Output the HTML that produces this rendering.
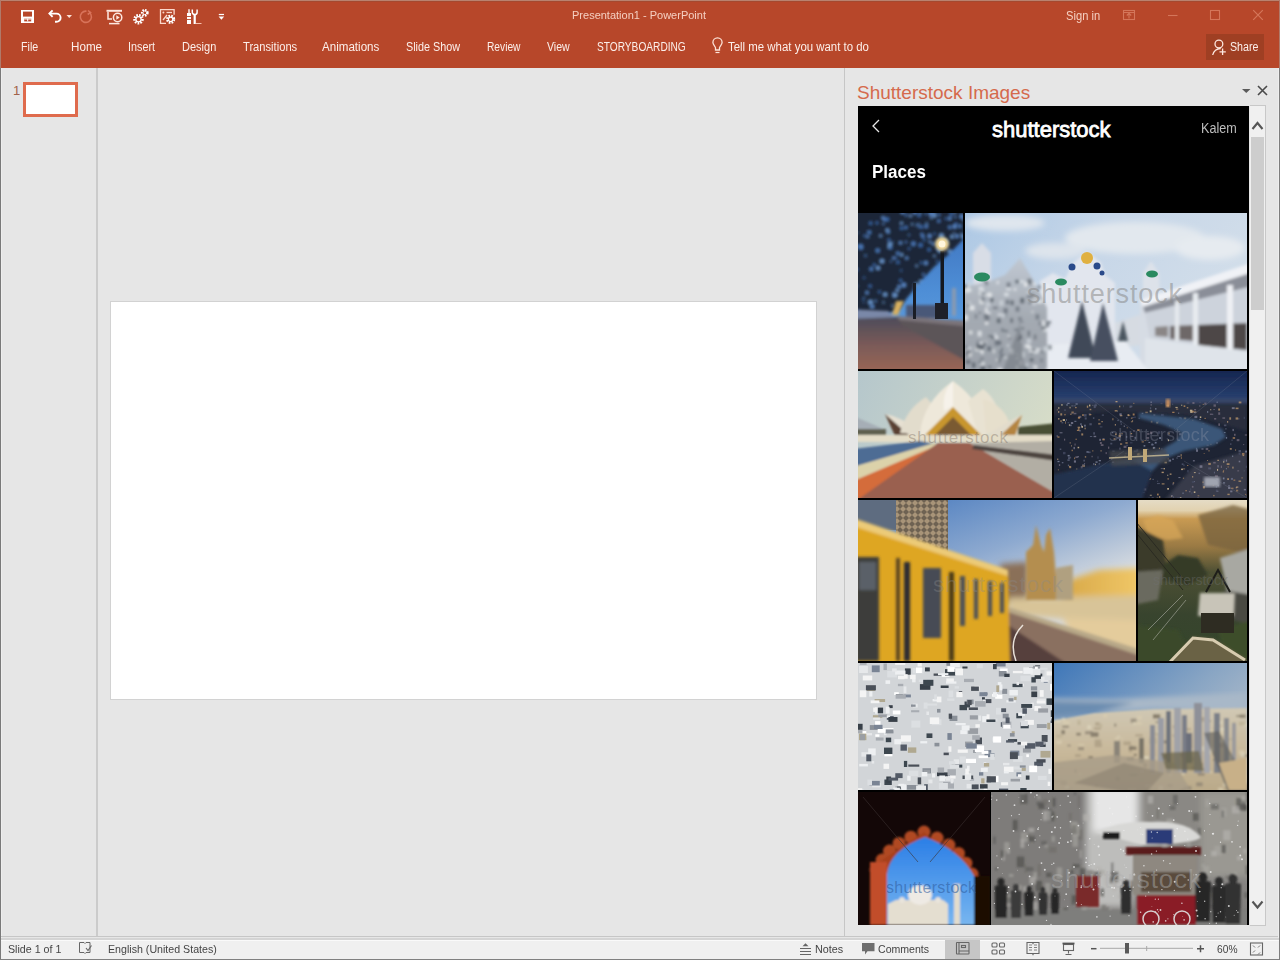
<!DOCTYPE html>
<html><head><meta charset="utf-8">
<style>
*{margin:0;padding:0;box-sizing:border-box}
html,body{width:1280px;height:960px;overflow:hidden;background:#e6e6e6;font-family:"Liberation Sans",sans-serif}
.a{position:absolute}
.t{position:absolute;white-space:nowrap;line-height:1;transform-origin:0 0}
.tab{color:#fcefea;font-size:12px;top:41px}
.st{font-size:11px;color:#444;top:944px}
.ph{position:absolute;overflow:hidden}
svg{position:absolute;overflow:visible}
</style></head><body>
<!-- ===== title + ribbon tabs ===== -->
<div class="a" style="left:0;top:0;width:1280px;height:68px;background:#b7472a"></div>
<div class="a" style="left:0;top:0;width:1280px;height:1px;background:#b9826f"></div>
<div class="a" style="left:0;top:1px;width:1280px;height:1px;background:#a5492f"></div>

<!-- QAT icons -->
<svg style="left:0;top:0" width="240" height="30" viewBox="0 0 240 30">
 <rect x="21" y="10" width="13" height="13" fill="#fff"/>
 <rect x="23" y="11.6" width="9" height="5" fill="#b7472a"/>
 <rect x="24.2" y="18.6" width="7" height="2.8" fill="#b7472a"/>
 <rect x="24.2" y="18.6" width="7" height="0.9" fill="#fff"/>
 <rect x="27.2" y="18.6" width="1" height="2.8" fill="#fff"/>
 <g fill="none" stroke="#fff" stroke-width="1.6">
  <!-- undo -->
  <path d="M49.5 13.6h7a4.1 4.1 0 0 1 0 8.2h-1.5" stroke-width="1.9"/>
  <path d="M52.6 10.4l-3.2 3.2 3.2 3.2" stroke-width="1.9"/>
 </g>
 <path d="M66.5 15h5.5l-2.75 3z" fill="#fbe0d6"/>
 <!-- redo faded -->
 <g fill="none" stroke="#d8735a" stroke-width="1.6">
  <path d="M89.5 12.5a5.6 5.6 0 1 1 -3 -1.3"/>
  <path d="M88 10.5l2.5 2-2.8 2" />
 </g>
 <!-- present -->
 <g fill="none" stroke="#fde8e0" stroke-width="1.5">
  <path d="M106.5 10.8h15.5" stroke-width="2"/>
  <path d="M108 12v7h4"/>
  <circle cx="117.6" cy="17.5" r="4.2"/>
  <path d="M109 23.6h10.5"/>
 </g>
 <path d="M116.3 15.3v4.4l3.4-2.2z" fill="#fde8e0"/>
 <!-- gears -->
 <g fill="none" stroke="#fff" stroke-dasharray="1.6 1.1">
  <circle cx="138.5" cy="19.2" r="4" stroke-width="2.6"/>
  <circle cx="144.8" cy="12.8" r="2.9" stroke-width="2"/>
 </g>
 <circle cx="138.5" cy="19.2" r="2.6" fill="none" stroke="#fff" stroke-width="1.3"/>
 <circle cx="144.8" cy="12.8" r="1.9" fill="none" stroke="#fff" stroke-width="1"/>
 <!-- image gear -->
 <g fill="none" stroke="#fbd9cd" stroke-width="1.3">
  <path d="M166 23.3h-5.5v-13.6h13.6v5"/>
  <path d="M166.5 12.5h5.5"/>
  <path d="M163 20l4-5"/>
 </g>
 <circle cx="163.4" cy="12.4" r="1" fill="#fbd9cd"/>
 <g fill="none" stroke="#fff" stroke-dasharray="1.6 1.1">
  <circle cx="170.6" cy="19.3" r="3.4" stroke-width="2.4"/>
 </g>
 <circle cx="170.6" cy="19.3" r="2.2" fill="none" stroke="#fff" stroke-width="1.2"/>
 <!-- tools -->
 <g fill="#fff">
  <rect x="187" y="13" width="4" height="11"/>
  <rect x="188.3" y="9.2" width="1.4" height="4"/>
  <rect x="193.6" y="14" width="2.2" height="10"/>
 </g>
 <path d="M187 16.5h4M187 19.5h4" stroke="#b7472a" stroke-width="0.9"/>
 <path d="M192.3 9.5v2.7a2.4 2.4 0 0 0 4.8 0v-2.7" fill="none" stroke="#fff" stroke-width="1.5"/>
 <path d="M196 23.5h5.5" stroke="#f8c0ae" stroke-width="1"/>
 <!-- customize -->
 <path d="M218.8 14.5h5.2" stroke="#fff" stroke-width="1.2"/>
 <path d="M218.6 16.4h5.6l-2.8 3.4z" fill="#fff"/>
</svg>

<div class="t" style="left:572px;top:10px;font-size:11.5px;color:#f5cfc1;transform:scaleX(0.957)">Presentation1 - PowerPoint</div>
<div class="t" style="left:1066px;top:10px;font-size:12px;color:#f5cfc1;transform:scaleX(0.93)">Sign in</div>

<!-- window controls -->
<svg style="left:1100px;top:0" width="180" height="30" viewBox="1100 0 180 30">
 <g fill="none" stroke="#d4765a" stroke-width="1.1">
  <rect x="1123.5" y="10.5" width="11" height="9"/>
  <path d="M1123.5 12.5h11"/>
  <path d="M1129 18.5v-5M1126.8 15.5l2.2-2.2 2.2 2.2"/>
  <path d="M1168 15.5h9.5"/>
  <rect x="1210.5" y="10.5" width="9" height="9"/>
  <path d="M1253.2 10.2l9.6 9.6M1262.8 10.2l-9.6 9.6" stroke-width="1.2"/>
 </g>
</svg>

<div class="t tab" style="left:21px;transform:scaleX(0.89)">File</div>
<div class="t tab" style="left:71px;transform:scaleX(0.97)">Home</div>
<div class="t tab" style="left:128px;transform:scaleX(0.9)">Insert</div>
<div class="t tab" style="left:182px;transform:scaleX(0.917)">Design</div>
<div class="t tab" style="left:243px;transform:scaleX(0.93)">Transitions</div>
<div class="t tab" style="left:322px;transform:scaleX(0.966)">Animations</div>
<div class="t tab" style="left:406px;transform:scaleX(0.9)">Slide Show</div>
<div class="t tab" style="left:487px;transform:scaleX(0.85)">Review</div>
<div class="t tab" style="left:547px;transform:scaleX(0.88)">View</div>
<div class="t tab" style="left:597px;transform:scaleX(0.846)">STORYBOARDING</div>
<div class="t tab" style="left:728px;transform:scaleX(0.952)">Tell me what you want to do</div>
<svg style="left:700px;top:30px" width="30" height="30" viewBox="700 30 30 30">
 <path d="M715.5 50v-2.2c0-1.3-2.6-3.2-2.6-5.3a4.6 4.6 0 0 1 9.2 0c0 2.1-2.6 4-2.6 5.3v2.2z" fill="none" stroke="#fde3d8" stroke-width="1.3"/>
 <path d="M715.5 52.5h4" stroke="#fde3d8" stroke-width="1.2"/>
</svg>

<div class="a" style="left:1206px;top:34px;width:58px;height:26px;background:#9f3f23"></div>
<svg style="left:1200px;top:30px" width="70" height="34" viewBox="1200 30 70 34">
 <g fill="none" stroke="#fde8e0" stroke-width="1.3">
  <circle cx="1218.9" cy="44" r="3.9"/>
  <path d="M1212.7 55a8 8 0 0 1 8-6.5"/>
  <path d="M1219.5 51.8h6.3M1222.6 48.5v6.4"/>
 </g>
</svg>
<div class="t tab" style="left:1230px;transform:scaleX(0.89)">Share</div>

<!-- ===== left border ===== -->
<div class="a" style="left:0;top:0;width:1px;height:960px;background:#7a7a7a"></div>
<div class="a" style="left:0;top:0;width:1px;height:68px;background:#b07a6a"></div>
<div class="a" style="left:1px;top:68px;width:1px;height:870px;background:#eeeeee"></div>

<!-- ===== thumbnail pane ===== -->
<div class="a" style="left:96px;top:68px;width:2px;height:869px;background:#cbcbcb"></div>
<div class="t" style="left:13px;top:84px;font-size:13px;color:#a0624a">1</div>
<div class="a" style="left:23px;top:82px;width:55px;height:35px;border:3px solid #df6b4d;background:#fff"></div>

<!-- ===== slide ===== -->
<div class="a" style="left:110px;top:301px;width:707px;height:399px;background:#fff;border:1px solid #d2d2d2"></div>

<!-- ===== task pane ===== -->
<div class="a" style="left:844px;top:68px;width:1px;height:869px;background:#c6c6c6"></div>
<div class="t" style="left:857px;top:83px;font-size:19px;color:#d56a4c">Shutterstock Images</div>
<div class="a" id="web" style="left:858px;top:106px;width:391px;height:819px;background:#000;overflow:hidden"></div>
<div class="t" style="left:872px;top:163px;font-size:18px;font-weight:bold;color:#fff;transform:scaleX(0.945)">Places</div>
<div class="t" style="left:1201px;top:121px;font-size:14px;color:#bdbdbd;transform:scaleX(0.9)">Kalem</div>
<div class="t" style="left:992px;top:119px;font-size:22px;font-weight:normal;color:#fff;-webkit-text-stroke:0.8px #fff;transform:scaleX(1.0);letter-spacing:0px">shutterstock</div>
<svg style="left:850px;top:80px" width="430" height="60" viewBox="850 80 430 60">
 <path d="M1242 89h8.5l-4.25 4z" fill="#5a5a5a"/>
 <path d="M1258 86l9 9M1267 86l-9 9" stroke="#4a4a4a" stroke-width="1.6"/>
 <path d="M879 120l-6 6 6 6" fill="none" stroke="#e8e8e8" stroke-width="1.3"/>
</svg>


<!-- photos -->
<!-- P1 london embankment -->
<svg class="ph" style="left:858px;top:213px" width="105" height="156" viewBox="0 0 105 156">
 <defs>
  <linearGradient id="p1sky" x1="0" y1="0" x2="0" y2="1"><stop offset="0" stop-color="#3a6cb8"/><stop offset="0.5" stop-color="#4e8ed6"/><stop offset="1" stop-color="#6aaae4"/></linearGradient>
  <linearGradient id="p1pave" x1="0" y1="0" x2="0" y2="1"><stop offset="0" stop-color="#4c4c5a"/><stop offset="0.45" stop-color="#7a5a58"/><stop offset="1" stop-color="#a26a56"/></linearGradient>
  <filter id="bl1" x="-20%" y="-20%" width="140%" height="140%"><feGaussianBlur stdDeviation="1.5"/></filter>
  <filter id="bl1b" x="-20%" y="-20%" width="140%" height="140%"><feGaussianBlur stdDeviation="2.5"/></filter>
  <pattern id="p1tex" width="7" height="6" patternUnits="userSpaceOnUse"><rect width="7" height="6" fill="#222a3c"/><circle cx="2" cy="2" r="1.3" fill="#4a6a9a"/><circle cx="5.5" cy="4.5" r="0.9" fill="#3a5078"/></pattern>
 </defs>
 <rect x="-10" y="-10" width="125" height="176" fill="url(#p1sky)"/>
 <g filter="url(#bl1)">
  <path d="M-10 -10H115V16L91 41 76 54 63 68 49 85 41 97 25 102H-10Z" fill="#1e2638"/>
<circle cx="67.7" cy="0.7" r="1.1" fill="#4a78b8"/>
<circle cx="7.5" cy="42.7" r="1.1" fill="#4a78b8"/>
<circle cx="21.5" cy="78.9" r="1.3" fill="#3a68a8"/>
<circle cx="6.7" cy="22.7" r="1.2" fill="#3a68a8"/>
<circle cx="68.1" cy="13.1" r="1.8" fill="#3a68a8"/>
<circle cx="91.9" cy="14.2" r="1.8" fill="#4a78b8"/>
<circle cx="35.1" cy="29.1" r="0.8" fill="#3a68a8"/>
<circle cx="19.7" cy="37.6" r="2.1" fill="#4a78b8"/>
<circle cx="63.3" cy="49.8" r="1.3" fill="#3a68a8"/>
<circle cx="25.0" cy="4.8" r="1.6" fill="#5a88c8"/>
<circle cx="-1.2" cy="73.0" r="0.9" fill="#4a78b8"/>
<circle cx="91.7" cy="5.5" r="1.7" fill="#5a88c8"/>
<circle cx="56.9" cy="-0.4" r="1.9" fill="#5a88c8"/>
<circle cx="71.6" cy="22.9" r="2.0" fill="#5a88c8"/>
<circle cx="61.1" cy="2.2" r="1.7" fill="#3a68a8"/>
<circle cx="106.6" cy="5.8" r="1.2" fill="#3a68a8"/>
<circle cx="12.6" cy="10.2" r="1.6" fill="#3a68a8"/>
<circle cx="2.8" cy="33.4" r="2.2" fill="#5a88c8"/>
<circle cx="44.6" cy="-1.0" r="2.0" fill="#5a88c8"/>
<circle cx="61.5" cy="13.7" r="1.2" fill="#4a78b8"/>
<circle cx="96.0" cy="20.3" r="0.9" fill="#6a98d0"/>
<circle cx="98.9" cy="23.1" r="1.9" fill="#5a88c8"/>
<circle cx="27.1" cy="81.5" r="2.0" fill="#6a98d0"/>
<circle cx="71.1" cy="36.6" r="1.7" fill="#3a68a8"/>
<circle cx="39.3" cy="77.3" r="1.6" fill="#6a98d0"/>
<circle cx="57.7" cy="-2.0" r="1.4" fill="#3a68a8"/>
<circle cx="48.7" cy="44.9" r="1.5" fill="#5a88c8"/>
<circle cx="39.9" cy="40.4" r="1.8" fill="#4a78b8"/>
<circle cx="98.0" cy="10.9" r="1.5" fill="#3a68a8"/>
<circle cx="79.1" cy="48.3" r="1.1" fill="#3a68a8"/>
<circle cx="66.3" cy="27.1" r="1.2" fill="#3a68a8"/>
<circle cx="34.6" cy="92.7" r="1.0" fill="#6a98d0"/>
<circle cx="81.4" cy="38.3" r="1.3" fill="#6a98d0"/>
<circle cx="63.8" cy="21.4" r="1.4" fill="#4a78b8"/>
<circle cx="62.5" cy="68.3" r="1.4" fill="#6a98d0"/>
<circle cx="24.0" cy="48.2" r="2.1" fill="#6a98d0"/>
<circle cx="41.2" cy="73.8" r="1.8" fill="#5a88c8"/>
<circle cx="83.3" cy="34.8" r="1.3" fill="#3a68a8"/>
<circle cx="48.1" cy="14.2" r="1.5" fill="#3a68a8"/>
<circle cx="62.6" cy="32.2" r="2.1" fill="#3a68a8"/>
<circle cx="94.1" cy="23.8" r="1.7" fill="#6a98d0"/>
<circle cx="51.1" cy="35.6" r="1.2" fill="#3a68a8"/>
<circle cx="58.6" cy="52.8" r="1.1" fill="#6a98d0"/>
<circle cx="25.4" cy="10.8" r="1.0" fill="#5a88c8"/>
<circle cx="88.8" cy="29.4" r="1.2" fill="#5a88c8"/>
<circle cx="58.3" cy="71.9" r="2.0" fill="#6a98d0"/>
<circle cx="25.5" cy="89.3" r="0.9" fill="#6a98d0"/>
<circle cx="6.1" cy="64.7" r="1.0" fill="#3a68a8"/>
<circle cx="26.8" cy="6.6" r="1.6" fill="#5a88c8"/>
<circle cx="88.1" cy="5.6" r="1.2" fill="#3a68a8"/>
<circle cx="80.9" cy="1.9" r="1.2" fill="#4a78b8"/>
<circle cx="45.8" cy="72.0" r="2.2" fill="#5a88c8"/>
<circle cx="75.4" cy="30.9" r="1.4" fill="#5a88c8"/>
<circle cx="87.4" cy="28.0" r="1.6" fill="#6a98d0"/>
<circle cx="104.9" cy="23.3" r="2.0" fill="#6a98d0"/>
<circle cx="42.7" cy="67.4" r="1.5" fill="#3a68a8"/>
<circle cx="91.7" cy="38.3" r="1.8" fill="#6a98d0"/>
<circle cx="93.1" cy="1.8" r="1.7" fill="#3a68a8"/>
<circle cx="39.9" cy="49.2" r="1.6" fill="#3a68a8"/>
<circle cx="37.9" cy="81.8" r="1.6" fill="#6a98d0"/>
<circle cx="68.8" cy="10.4" r="0.9" fill="#6a98d0"/>
<circle cx="103.8" cy="3.4" r="2.2" fill="#5a88c8"/>
<circle cx="14.1" cy="93.5" r="2.0" fill="#5a88c8"/>
<circle cx="62.2" cy="-0.3" r="1.0" fill="#6a98d0"/>
<circle cx="76.6" cy="20.8" r="1.1" fill="#3a68a8"/>
<circle cx="32.1" cy="31.1" r="2.1" fill="#6a98d0"/>
<circle cx="5.3" cy="86.2" r="0.9" fill="#3a68a8"/>
<circle cx="31.7" cy="34.0" r="2.0" fill="#6a98d0"/>
<circle cx="47.4" cy="14.7" r="1.3" fill="#4a78b8"/>
<circle cx="55.4" cy="30.7" r="2.2" fill="#4a78b8"/>
<circle cx="5.9" cy="89.3" r="0.8" fill="#4a78b8"/>
<circle cx="43.5" cy="10.2" r="1.3" fill="#6a98d0"/>
<circle cx="16.3" cy="52.1" r="1.5" fill="#3a68a8"/>
<circle cx="68.4" cy="13.7" r="1.2" fill="#5a88c8"/>
<circle cx="31.0" cy="27.1" r="1.5" fill="#3a68a8"/>
<circle cx="48.3" cy="2.0" r="1.2" fill="#4a78b8"/>
<circle cx="33.0" cy="48.4" r="0.9" fill="#4a78b8"/>
<circle cx="105.1" cy="6.9" r="0.9" fill="#6a98d0"/>
<circle cx="63.7" cy="13.9" r="1.7" fill="#3a68a8"/>
<circle cx="12.1" cy="73.1" r="1.6" fill="#3a68a8"/>
<circle cx="51.0" cy="22.0" r="0.9" fill="#4a78b8"/>
<circle cx="65.4" cy="61.3" r="1.1" fill="#5a88c8"/>
<circle cx="76.6" cy="2.6" r="1.8" fill="#6a98d0"/>
<circle cx="83.4" cy="22.8" r="2.2" fill="#6a98d0"/>
<circle cx="43.6" cy="15.2" r="1.6" fill="#3a68a8"/>
<circle cx="54.2" cy="11.2" r="1.0" fill="#6a98d0"/>
<circle cx="96.7" cy="13.6" r="2.1" fill="#5a88c8"/>
<circle cx="96.7" cy="0.0" r="1.0" fill="#6a98d0"/>
<circle cx="65.0" cy="23.5" r="1.7" fill="#4a78b8"/>
<circle cx="79.5" cy="35.9" r="1.1" fill="#4a78b8"/>
<circle cx="47.9" cy="29.1" r="1.1" fill="#4a78b8"/>
<circle cx="106.5" cy="17.1" r="0.9" fill="#3a68a8"/>
<circle cx="101.9" cy="13.1" r="1.9" fill="#4a78b8"/>
<circle cx="38.4" cy="45.1" r="1.0" fill="#3a68a8"/>
<circle cx="32.8" cy="34.8" r="1.6" fill="#3a68a8"/>
<circle cx="11.2" cy="19.3" r="1.9" fill="#4a78b8"/>
<circle cx="60.7" cy="11.3" r="0.9" fill="#6a98d0"/>
<circle cx="97.3" cy="3.9" r="1.0" fill="#5a88c8"/>
<circle cx="29.0" cy="6.4" r="2.1" fill="#3a68a8"/>
<circle cx="72.7" cy="29.5" r="0.9" fill="#6a98d0"/>
<circle cx="9.6" cy="23.6" r="1.4" fill="#5a88c8"/>
<circle cx="103.4" cy="20.8" r="0.9" fill="#6a98d0"/>
<circle cx="71.3" cy="28.3" r="1.0" fill="#5a88c8"/>
<circle cx="81.3" cy="36.8" r="1.6" fill="#5a88c8"/>
<circle cx="65.9" cy="62.8" r="0.9" fill="#3a68a8"/>
<circle cx="52.5" cy="2.8" r="1.3" fill="#6a98d0"/>
<circle cx="-0.2" cy="33.1" r="1.4" fill="#3a68a8"/>
<circle cx="73.0" cy="0.8" r="2.2" fill="#5a88c8"/>
<circle cx="1.4" cy="98.5" r="0.8" fill="#3a68a8"/>
<circle cx="43.6" cy="41.8" r="1.5" fill="#6a98d0"/>
<circle cx="84.7" cy="27.0" r="1.7" fill="#6a98d0"/>
<circle cx="35.6" cy="79.9" r="0.9" fill="#4a78b8"/>
<circle cx="35.8" cy="44.9" r="1.5" fill="#5a88c8"/>
<circle cx="22.6" cy="22.7" r="1.3" fill="#6a98d0"/>
<circle cx="9.0" cy="79.7" r="1.6" fill="#5a88c8"/>
<circle cx="93.6" cy="-1.0" r="1.0" fill="#3a68a8"/>
<circle cx="19.0" cy="9.9" r="1.4" fill="#3a68a8"/>
<circle cx="76.3" cy="-0.5" r="1.2" fill="#5a88c8"/>
<circle cx="73.5" cy="4.6" r="1.2" fill="#6a98d0"/>
<circle cx="20.0" cy="54.9" r="2.0" fill="#6a98d0"/>
<circle cx="2.9" cy="34.5" r="2.2" fill="#4a78b8"/>
<circle cx="29.3" cy="17.1" r="1.7" fill="#6a98d0"/>
<circle cx="12.5" cy="89.2" r="2.2" fill="#6a98d0"/>
<circle cx="55.6" cy="75.2" r="0.8" fill="#4a78b8"/>
<circle cx="76.4" cy="43.0" r="1.1" fill="#6a98d0"/>
<circle cx="-0.3" cy="19.8" r="0.8" fill="#4a78b8"/>
<circle cx="42.5" cy="29.8" r="1.6" fill="#5a88c8"/>
<circle cx="58.7" cy="12.2" r="1.1" fill="#4a78b8"/>
<circle cx="43.1" cy="57.6" r="1.0" fill="#3a68a8"/>
<circle cx="30.2" cy="18.8" r="1.6" fill="#5a88c8"/>
<circle cx="67.9" cy="50.0" r="1.9" fill="#5a88c8"/>
<circle cx="13.3" cy="55.9" r="2.0" fill="#4a78b8"/>
<circle cx="6.1" cy="84.7" r="0.8" fill="#5a88c8"/>
<circle cx="-1.3" cy="56.5" r="1.5" fill="#3a68a8"/>
<circle cx="36.6" cy="82.3" r="2.1" fill="#6a98d0"/>
<circle cx="80.8" cy="7.9" r="1.6" fill="#4a78b8"/>
<circle cx="17.5" cy="88.1" r="1.1" fill="#5a88c8"/>
 </g>
 <g filter="url(#bl1)">
  <rect x="48" y="92" width="32" height="13" fill="#4a5878"/>
  <rect x="94" y="75" width="4" height="28" fill="#8a9ab0"/>
  <path d="M-10 96L30 98 40 108 -10 118Z" fill="#7a88a8"/>
  <path d="M38 88L46 88 40 102 34 102Z" fill="#d8b060"/>
  <path d="M-10 106L40 104 115 110V166H-10Z" fill="url(#p1pave)"/>
  <path d="M38 104L115 111V152L44 112Z" fill="#5c5458"/>
  <path d="M38 103L115 108V114L42 107Z" fill="#7c747a"/>
 </g>
 <rect x="82.5" y="38" width="3.5" height="64" fill="#141820"/>
 <rect x="77" y="90" width="13" height="16" fill="#1e2028"/>
 <rect x="55" y="70" width="3" height="36" fill="#1a1d25"/>
 <circle cx="84" cy="31" r="7" fill="#f0d89a" filter="url(#bl1)"/>
 <circle cx="84" cy="31" r="3.5" fill="#fff6dc"/>
</svg>
<!-- P2 monastery snow -->
<svg class="ph" style="left:965px;top:213px" width="282" height="156" viewBox="0 0 282 156">
 <defs>
  <linearGradient id="p2sky" x1="0" y1="0" x2="1" y2="0.5"><stop offset="0" stop-color="#a9c6e4"/><stop offset="0.45" stop-color="#c6d6e8"/><stop offset="1" stop-color="#d4dfea"/></linearGradient>
  <filter id="bl2" x="-10%" y="-10%" width="120%" height="120%"><feGaussianBlur stdDeviation="1.6"/></filter>
  <filter id="bl2b" x="-10%" y="-10%" width="120%" height="120%"><feGaussianBlur stdDeviation="3"/></filter>
  <pattern id="p2tex" width="6" height="7" patternUnits="userSpaceOnUse"><rect width="6" height="7" fill="#9ca2aa"/><circle cx="2" cy="2" r="1.4" fill="#5a6068"/><circle cx="4.5" cy="5" r="1.1" fill="#d8dce2"/></pattern>
 </defs>
 <rect x="-10" y="-10" width="302" height="176" fill="url(#p2sky)"/>
 <g filter="url(#bl2b)">
  <ellipse cx="40" cy="10" rx="40" ry="8" fill="#dfe6ee"/>
  <ellipse cx="170" cy="25" rx="70" ry="16" fill="#e2e8ee"/>
  <ellipse cx="245" cy="35" rx="35" ry="12" fill="#e6ebf0"/>
  <ellipse cx="90" cy="38" rx="30" ry="8" fill="#dde4ec"/>
 </g>
 <g filter="url(#bl2)">
  <path d="M75 140V68L88 60 100 66 108 50 122 38 136 50 140 62 150 70 150 130Z" fill="#e2e6ee"/>
  <path d="M178 105V60L186 48 194 60 196 105Z" fill="#dde2ea"/>
  <path d="M150 110L180 100 200 108 195 130 150 135Z" fill="#d6dbe2"/>
  <path d="M175 90L292 50V166H175Z" fill="#d6dce4"/>
  <path d="M175 87L292 48V58L178 94Z" fill="#f0f2f6"/>
  <path d="M178 94L292 58V72L180 100Z" fill="#8a8e98"/>
  <path d="M180 100L292 72V140L185 125Z" fill="#cdd3dc"/>
  <path d="M232 112L282 110V137L232 132Z" fill="#4e4646"/>
  <path d="M205 113L230 112V128L205 126Z" fill="#6e6868"/>
  <path d="M190 114L203 113V124L190 123Z" fill="#8a8686"/>
  <rect x="228" y="80" width="5" height="55" fill="#e8ecf0"/>
  <rect x="262" y="72" width="6" height="68" fill="#eef0f4"/>
  <rect x="210" y="88" width="4" height="40" fill="#e6eaee"/>
  <path d="M180 125L292 140V166H180Z" fill="#dfe4ea"/>
  <path d="M80 132L160 128 190 166H70Z" fill="#e8ecf2"/>
 </g>
<defs><linearGradient id="p2tr" x1="0" y1="0" x2="0" y2="1"><stop offset="0" stop-color="#c0c8d2"/><stop offset="0.5" stop-color="#a4aab2"/><stop offset="1" stop-color="#9aa0a8"/></linearGradient></defs>
 <g filter="url(#bl2)">
  <path d="M8 90V40L17 30 26 40V90Z" fill="#d8dde6"/>
  <path d="M-10 166V75L20 70 40 62 55 45 70 70 82 95 82 166Z" fill="url(#p2tr)"/>
  <rect x="11.9" y="127.8" width="3.7" height="3.7" fill="#6a727c" opacity="0.8"/>
<rect x="81.1" y="108.2" width="4.9" height="2.3" fill="#4e5660" opacity="0.8"/>
<rect x="17.8" y="65.3" width="2.8" height="4.1" fill="#5a626c" opacity="0.8"/>
<rect x="10.2" y="133.4" width="4.7" height="4.6" fill="#f0f2f4" opacity="0.8"/>
<rect x="81.8" y="132.2" width="4.6" height="4.3" fill="#5a626c" opacity="0.8"/>
<rect x="78.4" y="114.2" width="3.9" height="4.4" fill="#e8ecf0" opacity="0.8"/>
<rect x="-0.0" y="132.4" width="1.8" height="5.1" fill="#5a626c" opacity="0.8"/>
<rect x="36.1" y="115.2" width="2.7" height="3.7" fill="#6a727c" opacity="0.8"/>
<rect x="53.9" y="107.8" width="4.4" height="1.8" fill="#6a727c" opacity="0.8"/>
<rect x="15.5" y="153.2" width="4.6" height="4.9" fill="#4e5660" opacity="0.8"/>
<rect x="81.1" y="71.5" width="3.5" height="4.0" fill="#f0f2f4" opacity="0.8"/>
<rect x="14.9" y="149.0" width="4.6" height="3.3" fill="#e8ecf0" opacity="0.8"/>
<rect x="78.2" y="110.6" width="2.6" height="3.7" fill="#e8ecf0" opacity="0.8"/>
<rect x="0.3" y="73.5" width="4.0" height="6.0" fill="#f0f2f4" opacity="0.8"/>
<rect x="-1.8" y="71.4" width="3.6" height="3.8" fill="#4e5660" opacity="0.8"/>
<rect x="49.1" y="115.6" width="3.7" height="2.3" fill="#6a727c" opacity="0.8"/>
<rect x="50.6" y="140.9" width="2.7" height="4.9" fill="#e8ecf0" opacity="0.8"/>
<rect x="18.6" y="80.4" width="4.7" height="2.3" fill="#f0f2f4" opacity="0.8"/>
<rect x="29.5" y="127.2" width="3.9" height="5.5" fill="#6a727c" opacity="0.8"/>
<rect x="32.2" y="155.0" width="4.9" height="4.2" fill="#e8ecf0" opacity="0.8"/>
<rect x="39.2" y="99.2" width="2.4" height="5.4" fill="#6a727c" opacity="0.8"/>
<rect x="45.2" y="105.0" width="2.9" height="4.8" fill="#5a626c" opacity="0.8"/>
<rect x="68.3" y="69.7" width="2.4" height="2.8" fill="#f0f2f4" opacity="0.8"/>
<rect x="18.9" y="100.9" width="4.5" height="4.4" fill="#6a727c" opacity="0.8"/>
<rect x="80.6" y="132.9" width="3.2" height="2.6" fill="#d0d6dc" opacity="0.8"/>
<rect x="42.2" y="131.3" width="1.6" height="2.5" fill="#e8ecf0" opacity="0.8"/>
<rect x="64.8" y="145.2" width="3.6" height="3.4" fill="#4e5660" opacity="0.8"/>
<rect x="73.8" y="108.4" width="2.0" height="4.1" fill="#6a727c" opacity="0.8"/>
<rect x="62.5" y="65.9" width="3.9" height="5.8" fill="#5a626c" opacity="0.8"/>
<rect x="20.2" y="94.7" width="2.4" height="5.8" fill="#f0f2f4" opacity="0.8"/>
<rect x="19.6" y="101.9" width="4.9" height="5.6" fill="#6a727c" opacity="0.8"/>
<rect x="9.9" y="101.1" width="2.2" height="4.4" fill="#6a727c" opacity="0.8"/>
<rect x="4.0" y="75.8" width="2.5" height="2.9" fill="#e8ecf0" opacity="0.8"/>
<rect x="31.3" y="145.8" width="3.7" height="2.3" fill="#f0f2f4" opacity="0.8"/>
<rect x="14.9" y="132.7" width="4.1" height="4.2" fill="#4e5660" opacity="0.8"/>
<rect x="71.4" y="135.5" width="4.3" height="1.5" fill="#f0f2f4" opacity="0.8"/>
<rect x="70.6" y="101.2" width="3.5" height="5.3" fill="#6a727c" opacity="0.8"/>
<rect x="19.2" y="128.4" width="2.6" height="1.7" fill="#f0f2f4" opacity="0.8"/>
<rect x="11.1" y="131.1" width="5.0" height="5.2" fill="#4e5660" opacity="0.8"/>
<rect x="39.2" y="117.1" width="3.4" height="1.8" fill="#4e5660" opacity="0.8"/>
<rect x="59.7" y="153.0" width="2.6" height="4.6" fill="#4e5660" opacity="0.8"/>
<rect x="61.7" y="82.2" width="3.7" height="3.0" fill="#6a727c" opacity="0.8"/>
<rect x="27.8" y="93.9" width="5.0" height="2.0" fill="#5a626c" opacity="0.8"/>
<rect x="52.7" y="122.0" width="4.3" height="5.9" fill="#4e5660" opacity="0.8"/>
<rect x="50.2" y="66.8" width="3.8" height="3.5" fill="#4e5660" opacity="0.8"/>
<rect x="41.1" y="144.7" width="1.7" height="1.6" fill="#d0d6dc" opacity="0.8"/>
<rect x="34.4" y="87.5" width="4.0" height="5.2" fill="#d0d6dc" opacity="0.8"/>
<rect x="33.9" y="137.6" width="2.9" height="3.0" fill="#6a727c" opacity="0.8"/>
<rect x="51.1" y="152.6" width="1.8" height="3.7" fill="#f0f2f4" opacity="0.8"/>
<rect x="29.3" y="120.0" width="2.3" height="3.5" fill="#d0d6dc" opacity="0.8"/>
<rect x="61.7" y="125.8" width="4.5" height="4.6" fill="#d0d6dc" opacity="0.8"/>
<rect x="20.0" y="108.8" width="3.2" height="2.9" fill="#f0f2f4" opacity="0.8"/>
<rect x="67.3" y="152.7" width="5.0" height="1.5" fill="#e8ecf0" opacity="0.8"/>
<rect x="15.0" y="144.7" width="4.0" height="1.9" fill="#6a727c" opacity="0.8"/>
<rect x="4.7" y="92.5" width="4.8" height="4.8" fill="#f0f2f4" opacity="0.8"/>
<rect x="80.6" y="155.2" width="2.1" height="3.4" fill="#d0d6dc" opacity="0.8"/>
<rect x="26.2" y="123.4" width="3.9" height="2.7" fill="#5a626c" opacity="0.8"/>
<rect x="25.1" y="88.1" width="4.5" height="2.2" fill="#d0d6dc" opacity="0.8"/>
<rect x="40.6" y="86.7" width="3.9" height="4.7" fill="#6a727c" opacity="0.8"/>
<rect x="77.0" y="107.5" width="3.0" height="4.3" fill="#e8ecf0" opacity="0.8"/>
<rect x="54.2" y="125.8" width="3.7" height="1.9" fill="#6a727c" opacity="0.8"/>
<rect x="0.9" y="138.7" width="4.8" height="4.7" fill="#5a626c" opacity="0.8"/>
<rect x="4.3" y="117.8" width="2.9" height="3.5" fill="#f0f2f4" opacity="0.8"/>
<rect x="18.2" y="65.7" width="3.4" height="1.9" fill="#e8ecf0" opacity="0.8"/>
<rect x="14.0" y="98.7" width="1.5" height="2.2" fill="#4e5660" opacity="0.8"/>
<rect x="64.5" y="139.8" width="3.4" height="1.7" fill="#6a727c" opacity="0.8"/>
<rect x="33.0" y="145.3" width="2.4" height="4.1" fill="#4e5660" opacity="0.8"/>
<rect x="75.7" y="145.4" width="1.6" height="4.1" fill="#5a626c" opacity="0.8"/>
<rect x="34.6" y="140.8" width="5.0" height="4.5" fill="#6a727c" opacity="0.8"/>
<rect x="3.0" y="139.2" width="3.6" height="4.3" fill="#f0f2f4" opacity="0.8"/>
<rect x="55.1" y="126.5" width="2.0" height="2.2" fill="#e8ecf0" opacity="0.8"/>
<rect x="23.0" y="122.1" width="4.6" height="1.8" fill="#5a626c" opacity="0.8"/>
<rect x="13.7" y="73.9" width="4.4" height="3.1" fill="#e8ecf0" opacity="0.8"/>
<rect x="2.9" y="68.4" width="3.2" height="4.6" fill="#d0d6dc" opacity="0.8"/>
<rect x="31.6" y="68.0" width="2.3" height="3.1" fill="#e8ecf0" opacity="0.8"/>
<rect x="32.3" y="127.9" width="4.0" height="3.9" fill="#5a626c" opacity="0.8"/>
<rect x="25.3" y="84.9" width="3.3" height="4.8" fill="#4e5660" opacity="0.8"/>
<rect x="42.7" y="122.2" width="2.1" height="4.7" fill="#f0f2f4" opacity="0.8"/>
<rect x="38.2" y="143.6" width="3.0" height="1.6" fill="#e8ecf0" opacity="0.8"/>
<rect x="55.1" y="84.8" width="4.2" height="5.6" fill="#4e5660" opacity="0.8"/>
<rect x="48.7" y="75.2" width="2.6" height="2.4" fill="#f0f2f4" opacity="0.8"/>
<rect x="76.7" y="137.2" width="1.5" height="3.1" fill="#4e5660" opacity="0.8"/>
<rect x="20.3" y="67.3" width="2.8" height="4.9" fill="#6a727c" opacity="0.8"/>
<rect x="76.2" y="113.8" width="4.6" height="2.4" fill="#4e5660" opacity="0.8"/>
<rect x="44.6" y="135.6" width="4.1" height="5.5" fill="#e8ecf0" opacity="0.8"/>
<rect x="74.5" y="86.8" width="3.6" height="3.1" fill="#d0d6dc" opacity="0.8"/>
<rect x="66.5" y="98.0" width="2.0" height="1.6" fill="#f0f2f4" opacity="0.8"/>
<rect x="78.2" y="133.7" width="4.9" height="4.8" fill="#d0d6dc" opacity="0.8"/>
<rect x="7.0" y="149.4" width="3.3" height="5.5" fill="#4e5660" opacity="0.8"/>
<rect x="22.9" y="79.7" width="3.8" height="4.3" fill="#f0f2f4" opacity="0.8"/>
<rect x="62.8" y="133.4" width="3.8" height="2.6" fill="#f0f2f4" opacity="0.8"/>
<rect x="67.5" y="85.2" width="3.2" height="1.7" fill="#f0f2f4" opacity="0.8"/>
<rect x="15.3" y="136.8" width="2.7" height="3.5" fill="#e8ecf0" opacity="0.8"/>
<rect x="59.9" y="131.5" width="5.0" height="3.2" fill="#f0f2f4" opacity="0.8"/>
<rect x="0.8" y="135.8" width="4.5" height="2.8" fill="#f0f2f4" opacity="0.8"/>
<rect x="14.5" y="85.7" width="4.1" height="5.2" fill="#f0f2f4" opacity="0.8"/>
<rect x="54.5" y="67.5" width="4.7" height="2.1" fill="#e8ecf0" opacity="0.8"/>
<rect x="36.8" y="100.4" width="3.7" height="4.2" fill="#d0d6dc" opacity="0.8"/>
<rect x="3.9" y="88.3" width="1.9" height="4.5" fill="#d0d6dc" opacity="0.8"/>
<rect x="63.7" y="137.2" width="4.7" height="2.4" fill="#e8ecf0" opacity="0.8"/>
<rect x="72.8" y="72.0" width="2.6" height="4.4" fill="#6a727c" opacity="0.8"/>
<rect x="61.1" y="150.1" width="1.9" height="4.3" fill="#d0d6dc" opacity="0.8"/>
<rect x="16.3" y="83.8" width="3.2" height="4.7" fill="#6a727c" opacity="0.8"/>
<rect x="0.7" y="146.9" width="4.7" height="3.9" fill="#5a626c" opacity="0.8"/>
<rect x="14.2" y="77.8" width="1.7" height="4.6" fill="#f0f2f4" opacity="0.8"/>
<rect x="3.1" y="133.8" width="3.6" height="3.8" fill="#d0d6dc" opacity="0.8"/>
<rect x="17.5" y="129.1" width="3.2" height="3.9" fill="#4e5660" opacity="0.8"/>
<rect x="29.4" y="122.9" width="3.7" height="3.1" fill="#e8ecf0" opacity="0.8"/>
<rect x="31.8" y="105.4" width="3.8" height="4.7" fill="#4e5660" opacity="0.8"/>
<rect x="16.8" y="136.8" width="1.6" height="4.4" fill="#f0f2f4" opacity="0.8"/>
<rect x="68.9" y="135.5" width="4.7" height="4.9" fill="#e8ecf0" opacity="0.8"/>
<rect x="39.2" y="80.0" width="4.3" height="3.0" fill="#e8ecf0" opacity="0.8"/>
<rect x="23.1" y="152.8" width="3.1" height="2.4" fill="#5a626c" opacity="0.8"/>
<rect x="50.4" y="142.1" width="2.3" height="2.0" fill="#4e5660" opacity="0.8"/>
<rect x="52.0" y="122.2" width="1.9" height="2.1" fill="#d0d6dc" opacity="0.8"/>
<rect x="56.8" y="114.0" width="1.8" height="2.6" fill="#4e5660" opacity="0.8"/>
<rect x="45.7" y="87.3" width="3.0" height="5.0" fill="#4e5660" opacity="0.8"/>
<rect x="56.7" y="138.9" width="2.9" height="5.8" fill="#d0d6dc" opacity="0.8"/>
<rect x="28.0" y="136.4" width="1.6" height="3.7" fill="#f0f2f4" opacity="0.8"/>
<rect x="62.8" y="117.7" width="2.1" height="5.7" fill="#5a626c" opacity="0.8"/>
<rect x="63.4" y="88.4" width="3.2" height="2.7" fill="#6a727c" opacity="0.8"/>
<rect x="22.3" y="98.8" width="3.2" height="2.7" fill="#e8ecf0" opacity="0.8"/>
<rect x="2.5" y="91.1" width="1.8" height="3.0" fill="#6a727c" opacity="0.8"/>
<rect x="61.3" y="78.6" width="2.6" height="2.0" fill="#d0d6dc" opacity="0.8"/>
<rect x="54.9" y="147.5" width="1.7" height="4.9" fill="#f0f2f4" opacity="0.8"/>
<rect x="41.1" y="74.7" width="4.9" height="2.5" fill="#e8ecf0" opacity="0.8"/>
<rect x="59.0" y="69.3" width="3.7" height="4.2" fill="#f0f2f4" opacity="0.8"/>
<rect x="13.7" y="148.1" width="3.0" height="2.4" fill="#5a626c" opacity="0.8"/>
<rect x="16.3" y="80.0" width="4.9" height="1.6" fill="#6a727c" opacity="0.8"/>
<rect x="69.4" y="152.7" width="2.4" height="3.1" fill="#f0f2f4" opacity="0.8"/>
<rect x="13.9" y="128.8" width="4.6" height="2.3" fill="#e8ecf0" opacity="0.8"/>
<rect x="38.3" y="94.9" width="4.6" height="5.3" fill="#6a727c" opacity="0.8"/>
<rect x="22.2" y="133.3" width="3.9" height="4.8" fill="#5a626c" opacity="0.8"/>
<rect x="71.8" y="87.4" width="5.0" height="3.0" fill="#f0f2f4" opacity="0.8"/>
<rect x="67.0" y="136.2" width="4.0" height="1.6" fill="#4e5660" opacity="0.8"/>
<rect x="20.9" y="89.3" width="4.3" height="4.3" fill="#d0d6dc" opacity="0.8"/>
<rect x="17.4" y="76.0" width="1.6" height="2.4" fill="#f0f2f4" opacity="0.8"/>
<rect x="80.2" y="110.4" width="4.0" height="3.8" fill="#6a727c" opacity="0.8"/>
<rect x="53.0" y="104.2" width="3.8" height="2.8" fill="#6a727c" opacity="0.8"/>
<rect x="41.6" y="69.4" width="4.0" height="4.9" fill="#6a727c" opacity="0.8"/>
<rect x="36.2" y="134.5" width="1.7" height="4.4" fill="#5a626c" opacity="0.8"/>
<rect x="12.8" y="118.0" width="3.8" height="5.4" fill="#e8ecf0" opacity="0.8"/>
<rect x="32.7" y="100.6" width="4.0" height="2.0" fill="#e8ecf0" opacity="0.8"/>
<rect x="-1.5" y="102.2" width="4.3" height="5.4" fill="#f0f2f4" opacity="0.8"/>
<rect x="50.5" y="93.4" width="4.0" height="5.3" fill="#6a727c" opacity="0.8"/>
<rect x="42.5" y="124.3" width="3.7" height="2.4" fill="#6a727c" opacity="0.8"/>
<rect x="66.8" y="90.4" width="4.2" height="1.5" fill="#e8ecf0" opacity="0.8"/>
<rect x="1.6" y="136.8" width="3.9" height="3.8" fill="#5a626c" opacity="0.8"/>
<rect x="65.5" y="80.8" width="3.5" height="4.0" fill="#6a727c" opacity="0.8"/>
<rect x="69.1" y="121.6" width="2.1" height="4.9" fill="#5a626c" opacity="0.8"/>
  <path d="M35 166L55 110 60 166Z" fill="#6a7078" opacity="0.5"/>
 </g>
 <g filter="url(#bl2)">
  <path d="M103 145L117 88 131 145Z" fill="#404a58"/>
  <path d="M125 148L138 90 153 148Z" fill="#465060"/>
  <path d="M153 128L158 108 163 128Z" fill="#4a545e"/>
 </g>
 <circle cx="122" cy="45" r="6" fill="#e0b040"/>
 <circle cx="107" cy="54" r="3.5" fill="#2a4a8a"/>
 <circle cx="132" cy="53" r="3.5" fill="#2a4a8a"/>
 <circle cx="137" cy="60" r="2.5" fill="#2a4a8a"/>
 <ellipse cx="17" cy="64" rx="8" ry="4.5" fill="#2a8a60"/>
 <ellipse cx="187" cy="61" rx="6" ry="3.5" fill="#2a8a60"/>
 <ellipse cx="96" cy="69" rx="6" ry="3.5" fill="#2a8a60"/>
 <text x="62" y="90" font-family="Liberation Sans" font-size="27" fill="#8a8a8a" fill-opacity="0.55" textLength="155">shutterstock</text>
</svg>
<!-- P3 lotus temple -->
<svg class="ph" style="left:858px;top:371px" width="194" height="127" viewBox="0 0 194 127">
 <defs>
  <linearGradient id="p3sky" x1="0" y1="0" x2="1" y2="0.3"><stop offset="0" stop-color="#b4c6cc"/><stop offset="1" stop-color="#d6dcc8"/></linearGradient>
  <filter id="bl3" x="-10%" y="-10%" width="120%" height="120%"><feGaussianBlur stdDeviation="0.9"/></filter>
 </defs>
 <rect x="-5" y="-5" width="204" height="137" fill="url(#p3sky)"/>
 <g filter="url(#bl3)">
  <path d="M-5 45L30 60 20 66 -5 66Z" fill="#a6aeb6"/>
  <path d="M160 56L199 52V66H160Z" fill="#4a5034"/>
  <path d="M-5 58H28V66H-5Z" fill="#5e6050"/>
  <!-- outer left petal -->
  <path d="M27 43Q45 46 58 60L60 65 38 65Z" fill="#e6e0d2"/>
  <path d="M27 43L52 65H37Z" fill="#5a4030"/>
  <!-- left petal -->
  <path d="M42 62Q48 38 68 26L80 40 72 64Z" fill="#e2dccc"/>
  <!-- central big petals -->
  <path d="M62 64Q64 32 95 10Q126 32 128 64Z" fill="#eee8da"/>
  <path d="M95 10Q84 20 86 40L95 35Z" fill="#f6f2ea"/>
  <!-- right petal -->
  <path d="M110 30L125 18Q140 28 148 62L120 64Z" fill="#e8e2d2"/>
  <path d="M125 28Q148 35 152 55L140 64 128 62Z" fill="#e6dfcc"/>
  <!-- outer right petal -->
  <path d="M132 62Q150 50 164 44L158 65H134Z" fill="#e2dccc"/>
  <path d="M164 44L142 65H157Z" fill="#b48440"/>
  <!-- central opening -->
  <path d="M66 65L95 36 124 65Z" fill="#c8962e"/>
  <path d="M76 65L95 46 114 65Z" fill="#7a5a30"/>
  <path d="M-5 64H199V71H-5Z" fill="#e4ddc8"/>
  <path d="M-5 78L62 70 78 73 -5 96Z" fill="#4e6c94"/>
  <path d="M-5 96L76 72 80 75 -5 110Z" fill="#dcd2aa"/>
  <path d="M-5 110L78 75 84 77 -5 132Z" fill="#d46c3a"/>
  <path d="M80 72H112L199 123V132H-5Z" fill="#9a6050"/>
  <path d="M112 72L199 70V123Z" fill="#b2aea4"/>
  <path d="M116 74L199 84V90L114 78Z" fill="#4e4440"/>
 </g>
 <text x="50" y="72" font-family="Liberation Sans" font-size="17" fill="#6a5a50" fill-opacity="0.35" textLength="100">shutterstock</text>
</svg>
<!-- P4 london night -->
<svg class="ph" style="left:1054px;top:371px" width="193" height="127" viewBox="0 0 193 127">
 <defs>
  <linearGradient id="p4sky" x1="0" y1="0" x2="0" y2="1"><stop offset="0" stop-color="#12224a"/><stop offset="1" stop-color="#2a4272"/></linearGradient>
  <filter id="bl4" x="-10%" y="-10%" width="120%" height="120%"><feGaussianBlur stdDeviation="1.8"/></filter>
  <filter id="bl4s" x="-10%" y="-10%" width="120%" height="120%"><feGaussianBlur stdDeviation="0.4"/></filter>
 </defs>
 <rect x="-5" y="-5" width="203" height="137" fill="#1e2434"/>
 <rect x="-5" y="-5" width="203" height="36" fill="url(#p4sky)" filter="url(#bl4)"/>
 <g filter="url(#bl4)">
  <rect x="-5" y="27" width="203" height="6" fill="#3a4868" opacity="0.7"/>
  <path d="M-5 34H193V60L140 45 60 40 -5 45Z" fill="#2a3040" opacity="0.8"/>
  <path d="M140 95L193 80V130H110Z" fill="#3a3e4c" opacity="0.9"/>
 </g>
 <g filter="url(#bl4s)">
<rect x="10.1" y="38.5" width="1.8" height="1.2" fill="#5a6078" opacity="0.7"/>
<rect x="73.2" y="84.5" width="1.7" height="1.1" fill="#4a5068" opacity="0.7"/>
<rect x="65.1" y="62.4" width="1.5" height="1.0" fill="#c8a070" opacity="0.7"/>
<rect x="149.3" y="115.2" width="1.8" height="1.0" fill="#c8a070" opacity="0.7"/>
<rect x="19.7" y="34.3" width="2.3" height="1.2" fill="#5a6078" opacity="0.7"/>
<rect x="56.3" y="71.8" width="2.0" height="1.7" fill="#5a6078" opacity="0.7"/>
<rect x="148.4" y="63.3" width="2.6" height="1.3" fill="#8a8aa0" opacity="0.7"/>
<rect x="123.3" y="84.8" width="2.9" height="1.0" fill="#8a8aa0" opacity="0.7"/>
<rect x="83.8" y="82.2" width="2.6" height="1.9" fill="#c8a070" opacity="0.7"/>
<rect x="100.5" y="70.7" width="2.0" height="2.3" fill="#4a5068" opacity="0.7"/>
<rect x="140.1" y="38.0" width="2.0" height="1.4" fill="#7a7080" opacity="0.7"/>
<rect x="65.0" y="67.9" width="1.1" height="1.7" fill="#8a8aa0" opacity="0.7"/>
<rect x="150.3" y="31.6" width="2.2" height="2.2" fill="#7a7080" opacity="0.7"/>
<rect x="2.5" y="64.1" width="1.5" height="1.8" fill="#5a6078" opacity="0.7"/>
<rect x="123.3" y="126.2" width="2.9" height="1.9" fill="#4a5068" opacity="0.7"/>
<rect x="105.0" y="125.1" width="1.3" height="1.8" fill="#c8a070" opacity="0.7"/>
<rect x="145.1" y="34.3" width="1.3" height="1.3" fill="#7a7080" opacity="0.7"/>
<rect x="154.2" y="96.4" width="2.9" height="2.0" fill="#5a6078" opacity="0.7"/>
<rect x="21.0" y="36.1" width="1.7" height="1.1" fill="#c8a070" opacity="0.7"/>
<rect x="173.2" y="107.2" width="1.8" height="1.8" fill="#c8a070" opacity="0.7"/>
<rect x="5.6" y="61.3" width="2.9" height="1.0" fill="#8a8aa0" opacity="0.7"/>
<rect x="64.6" y="63.8" width="2.3" height="2.5" fill="#c8a070" opacity="0.7"/>
<rect x="12.4" y="114.4" width="1.3" height="2.0" fill="#5a6078" opacity="0.7"/>
<rect x="159.2" y="90.9" width="2.5" height="1.6" fill="#7a7080" opacity="0.7"/>
<rect x="28.2" y="93.6" width="2.8" height="2.2" fill="#c8a070" opacity="0.7"/>
<rect x="71.1" y="81.9" width="1.7" height="1.2" fill="#4a5068" opacity="0.7"/>
<rect x="154.8" y="67.5" width="1.1" height="1.2" fill="#5a6078" opacity="0.7"/>
<rect x="67.5" y="114.5" width="2.5" height="2.5" fill="#c8a070" opacity="0.7"/>
<rect x="58.6" y="106.7" width="1.1" height="1.8" fill="#8a8aa0" opacity="0.7"/>
<rect x="99.3" y="43.3" width="2.0" height="1.8" fill="#7a7080" opacity="0.7"/>
<rect x="43.4" y="85.3" width="1.2" height="2.4" fill="#4a5068" opacity="0.7"/>
<rect x="39.2" y="61.2" width="1.8" height="2.4" fill="#5a6078" opacity="0.7"/>
<rect x="184.5" y="79.0" width="2.5" height="2.3" fill="#5a6078" opacity="0.7"/>
<rect x="37.5" y="84.8" width="1.2" height="1.5" fill="#7a7080" opacity="0.7"/>
<rect x="107.0" y="42.9" width="2.8" height="2.4" fill="#4a5068" opacity="0.7"/>
<rect x="151.7" y="76.9" width="2.5" height="2.2" fill="#7a7080" opacity="0.7"/>
<rect x="137.8" y="110.3" width="2.7" height="1.5" fill="#4a5068" opacity="0.7"/>
<rect x="162.2" y="119.7" width="2.2" height="1.0" fill="#8a8aa0" opacity="0.7"/>
<rect x="117.6" y="78.0" width="2.4" height="1.2" fill="#5a6078" opacity="0.7"/>
<rect x="69.6" y="74.7" width="2.9" height="2.3" fill="#7a7080" opacity="0.7"/>
<rect x="69.2" y="104.7" width="1.7" height="2.1" fill="#4a5068" opacity="0.7"/>
<rect x="73.8" y="108.2" width="2.7" height="1.6" fill="#7a7080" opacity="0.7"/>
<rect x="160.1" y="47.0" width="2.1" height="1.6" fill="#7a7080" opacity="0.7"/>
<rect x="23.6" y="55.7" width="2.6" height="1.5" fill="#c8a070" opacity="0.7"/>
<rect x="10.0" y="67.7" width="1.2" height="1.9" fill="#7a7080" opacity="0.7"/>
<rect x="46.8" y="73.2" width="2.7" height="1.8" fill="#7a7080" opacity="0.7"/>
<rect x="47.9" y="97.0" width="2.0" height="2.4" fill="#7a7080" opacity="0.7"/>
<rect x="65.1" y="34.7" width="1.2" height="1.6" fill="#c8a070" opacity="0.7"/>
<rect x="141.6" y="76.3" width="1.1" height="2.5" fill="#4a5068" opacity="0.7"/>
<rect x="62.9" y="65.9" width="2.9" height="1.9" fill="#5a6078" opacity="0.7"/>
<rect x="89.4" y="117.3" width="2.8" height="2.2" fill="#7a7080" opacity="0.7"/>
<rect x="136.2" y="117.4" width="1.0" height="2.1" fill="#4a5068" opacity="0.7"/>
<rect x="132.8" y="36.1" width="1.5" height="1.3" fill="#c8a070" opacity="0.7"/>
<rect x="69.0" y="34.2" width="1.0" height="2.0" fill="#4a5068" opacity="0.7"/>
<rect x="9.0" y="80.9" width="2.5" height="2.4" fill="#4a5068" opacity="0.7"/>
<rect x="58.4" y="114.0" width="1.9" height="1.4" fill="#5a6078" opacity="0.7"/>
<rect x="19.9" y="89.4" width="2.1" height="2.2" fill="#8a8aa0" opacity="0.7"/>
<rect x="181.6" y="36.6" width="2.9" height="1.6" fill="#c8a070" opacity="0.7"/>
<rect x="21.4" y="85.3" width="2.5" height="1.7" fill="#7a7080" opacity="0.7"/>
<rect x="29.7" y="43.1" width="2.9" height="2.5" fill="#5a6078" opacity="0.7"/>
<rect x="47.2" y="50.2" width="1.8" height="1.0" fill="#c8a070" opacity="0.7"/>
<rect x="126.6" y="83.1" width="1.1" height="2.4" fill="#c8a070" opacity="0.7"/>
<rect x="134.9" y="119.9" width="1.6" height="1.4" fill="#7a7080" opacity="0.7"/>
<rect x="40.9" y="32.5" width="1.7" height="1.2" fill="#4a5068" opacity="0.7"/>
<rect x="80.0" y="79.5" width="2.8" height="1.6" fill="#4a5068" opacity="0.7"/>
<rect x="75.3" y="125.4" width="2.0" height="1.1" fill="#4a5068" opacity="0.7"/>
<rect x="91.8" y="99.9" width="1.2" height="1.2" fill="#7a7080" opacity="0.7"/>
<rect x="106.5" y="31.7" width="2.0" height="1.4" fill="#4a5068" opacity="0.7"/>
<rect x="75.4" y="34.6" width="2.0" height="2.3" fill="#5a6078" opacity="0.7"/>
<rect x="114.4" y="61.5" width="1.2" height="2.0" fill="#c8a070" opacity="0.7"/>
<rect x="34.7" y="42.2" width="2.0" height="2.3" fill="#5a6078" opacity="0.7"/>
<rect x="31.4" y="107.0" width="1.7" height="1.1" fill="#4a5068" opacity="0.7"/>
<rect x="88.3" y="120.9" width="2.3" height="1.1" fill="#4a5068" opacity="0.7"/>
<rect x="22.1" y="97.5" width="1.3" height="1.1" fill="#c8a070" opacity="0.7"/>
<rect x="184.5" y="109.5" width="2.6" height="1.4" fill="#c8a070" opacity="0.7"/>
<rect x="65.9" y="43.9" width="2.4" height="1.4" fill="#c8a070" opacity="0.7"/>
<rect x="66.7" y="52.2" width="1.1" height="1.8" fill="#5a6078" opacity="0.7"/>
<rect x="178.5" y="57.9" width="1.3" height="2.2" fill="#8a8aa0" opacity="0.7"/>
<rect x="172.7" y="92.2" width="2.8" height="1.8" fill="#c8a070" opacity="0.7"/>
<rect x="188.5" y="83.9" width="1.7" height="1.2" fill="#c8a070" opacity="0.7"/>
<rect x="169.2" y="88.5" width="1.7" height="2.0" fill="#5a6078" opacity="0.7"/>
<rect x="154.5" y="79.1" width="1.0" height="1.4" fill="#c8a070" opacity="0.7"/>
<rect x="138.9" y="89.2" width="1.9" height="1.2" fill="#8a8aa0" opacity="0.7"/>
<rect x="184.6" y="81.8" width="1.8" height="2.0" fill="#4a5068" opacity="0.7"/>
<rect x="39.6" y="64.8" width="2.6" height="1.4" fill="#8a8aa0" opacity="0.7"/>
<rect x="189.7" y="45.8" width="1.1" height="2.1" fill="#4a5068" opacity="0.7"/>
<rect x="150.6" y="65.5" width="1.2" height="2.5" fill="#8a8aa0" opacity="0.7"/>
<rect x="19.6" y="41.8" width="2.8" height="1.5" fill="#7a7080" opacity="0.7"/>
<rect x="69.7" y="54.5" width="1.2" height="1.4" fill="#8a8aa0" opacity="0.7"/>
<rect x="166.8" y="94.6" width="1.2" height="2.4" fill="#7a7080" opacity="0.7"/>
<rect x="154.3" y="91.9" width="2.5" height="2.0" fill="#c8a070" opacity="0.7"/>
<rect x="184.7" y="30.5" width="2.7" height="1.9" fill="#c8a070" opacity="0.7"/>
<rect x="161.6" y="109.3" width="2.8" height="1.5" fill="#4a5068" opacity="0.7"/>
<rect x="158.3" y="42.8" width="1.0" height="1.3" fill="#5a6078" opacity="0.7"/>
<rect x="155.9" y="42.6" width="2.7" height="1.3" fill="#7a7080" opacity="0.7"/>
<rect x="81.3" y="105.4" width="1.8" height="1.5" fill="#5a6078" opacity="0.7"/>
<rect x="23.5" y="85.2" width="1.5" height="1.1" fill="#8a8aa0" opacity="0.7"/>
<rect x="137.9" y="114.9" width="1.6" height="1.8" fill="#7a7080" opacity="0.7"/>
<rect x="191.7" y="94.6" width="1.6" height="2.3" fill="#4a5068" opacity="0.7"/>
<rect x="82.4" y="78.3" width="1.8" height="2.3" fill="#4a5068" opacity="0.7"/>
<rect x="32.8" y="34.6" width="1.4" height="2.2" fill="#c8a070" opacity="0.7"/>
<rect x="111.6" y="48.4" width="2.1" height="2.2" fill="#c8a070" opacity="0.7"/>
<rect x="137.3" y="121.1" width="1.1" height="2.2" fill="#4a5068" opacity="0.7"/>
<rect x="17.3" y="34.1" width="2.1" height="1.5" fill="#5a6078" opacity="0.7"/>
<rect x="40.2" y="33.5" width="2.7" height="1.8" fill="#5a6078" opacity="0.7"/>
<rect x="161.6" y="107.3" width="2.8" height="1.9" fill="#7a7080" opacity="0.7"/>
<rect x="127.7" y="92.4" width="1.8" height="1.6" fill="#5a6078" opacity="0.7"/>
<rect x="16.9" y="51.0" width="2.3" height="2.0" fill="#8a8aa0" opacity="0.7"/>
<rect x="58.3" y="79.5" width="2.4" height="1.4" fill="#4a5068" opacity="0.7"/>
<rect x="103.0" y="112.0" width="2.9" height="1.1" fill="#5a6078" opacity="0.7"/>
<rect x="171.8" y="88.6" width="1.3" height="2.1" fill="#8a8aa0" opacity="0.7"/>
<rect x="19.5" y="118.3" width="1.5" height="2.2" fill="#8a8aa0" opacity="0.7"/>
<rect x="92.5" y="66.1" width="2.6" height="1.7" fill="#7a7080" opacity="0.7"/>
<rect x="160.9" y="104.1" width="3.0" height="2.0" fill="#7a7080" opacity="0.7"/>
<rect x="38.3" y="33.8" width="1.1" height="1.1" fill="#7a7080" opacity="0.7"/>
<rect x="145.6" y="94.3" width="2.8" height="2.5" fill="#8a8aa0" opacity="0.7"/>
<rect x="14.1" y="85.7" width="3.0" height="1.8" fill="#5a6078" opacity="0.7"/>
<rect x="147.4" y="77.3" width="2.1" height="1.3" fill="#8a8aa0" opacity="0.7"/>
<rect x="96.0" y="60.6" width="2.2" height="2.3" fill="#7a7080" opacity="0.7"/>
<rect x="65.2" y="76.6" width="1.5" height="2.1" fill="#5a6078" opacity="0.7"/>
<rect x="133.3" y="99.0" width="1.3" height="2.4" fill="#4a5068" opacity="0.7"/>
<rect x="28.4" y="93.0" width="2.4" height="1.6" fill="#4a5068" opacity="0.7"/>
<rect x="148.9" y="115.4" width="2.0" height="2.0" fill="#c8a070" opacity="0.7"/>
<rect x="96.5" y="30.5" width="1.3" height="1.5" fill="#8a8aa0" opacity="0.7"/>
<rect x="123.2" y="51.8" width="1.9" height="2.3" fill="#c8a070" opacity="0.7"/>
<rect x="76.5" y="34.6" width="1.9" height="1.6" fill="#5a6078" opacity="0.7"/>
<rect x="189.2" y="73.0" width="1.0" height="1.1" fill="#7a7080" opacity="0.7"/>
<rect x="70.5" y="105.5" width="2.9" height="1.8" fill="#8a8aa0" opacity="0.7"/>
<rect x="91.9" y="104.6" width="2.2" height="1.5" fill="#4a5068" opacity="0.7"/>
<rect x="6.3" y="42.3" width="1.9" height="2.2" fill="#c8a070" opacity="0.7"/>
<rect x="82.7" y="111.3" width="1.7" height="2.0" fill="#4a5068" opacity="0.7"/>
<rect x="51.9" y="120.7" width="2.1" height="2.0" fill="#7a7080" opacity="0.7"/>
<rect x="39.7" y="34.6" width="2.1" height="2.5" fill="#5a6078" opacity="0.7"/>
<rect x="115.8" y="80.0" width="1.8" height="1.7" fill="#4a5068" opacity="0.7"/>
<rect x="35.4" y="52.2" width="2.4" height="2.1" fill="#5a6078" opacity="0.7"/>
<rect x="76.4" y="64.8" width="2.9" height="1.2" fill="#7a7080" opacity="0.7"/>
<rect x="17.3" y="41.7" width="1.3" height="1.1" fill="#5a6078" opacity="0.7"/>
<rect x="81.5" y="92.6" width="2.8" height="2.4" fill="#c8a070" opacity="0.7"/>
<rect x="183.3" y="99.3" width="1.8" height="1.1" fill="#7a7080" opacity="0.7"/>
<rect x="182.7" y="68.1" width="2.7" height="2.1" fill="#7a7080" opacity="0.7"/>
<rect x="67.4" y="62.3" width="1.4" height="1.0" fill="#c8a070" opacity="0.7"/>
<rect x="96.5" y="33.2" width="1.4" height="1.4" fill="#7a7080" opacity="0.7"/>
<rect x="29.3" y="88.7" width="1.7" height="1.8" fill="#5a6078" opacity="0.7"/>
<rect x="118.8" y="111.3" width="1.4" height="1.4" fill="#c8a070" opacity="0.7"/>
<rect x="107.7" y="112.3" width="2.8" height="1.2" fill="#c8a070" opacity="0.7"/>
<rect x="93.1" y="62.1" width="2.3" height="1.7" fill="#7a7080" opacity="0.7"/>
<rect x="84.2" y="118.6" width="1.2" height="1.6" fill="#c8a070" opacity="0.7"/>
<rect x="189.8" y="117.9" width="2.2" height="1.5" fill="#8a8aa0" opacity="0.7"/>
<rect x="108.8" y="81.4" width="1.5" height="1.1" fill="#c8a070" opacity="0.7"/>
<rect x="152.5" y="73.1" width="2.2" height="1.9" fill="#7a7080" opacity="0.7"/>
<rect x="33.8" y="80.5" width="2.8" height="1.6" fill="#5a6078" opacity="0.7"/>
<rect x="112.6" y="83.1" width="1.7" height="2.0" fill="#4a5068" opacity="0.7"/>
<rect x="190.8" y="63.4" width="2.2" height="1.2" fill="#7a7080" opacity="0.7"/>
<rect x="80.3" y="45.5" width="1.5" height="1.3" fill="#4a5068" opacity="0.7"/>
<rect x="57.3" y="87.0" width="1.1" height="2.3" fill="#4a5068" opacity="0.7"/>
<rect x="117.9" y="32.5" width="1.3" height="1.5" fill="#4a5068" opacity="0.7"/>
<rect x="62.9" y="39.8" width="1.1" height="1.3" fill="#4a5068" opacity="0.7"/>
<rect x="176.2" y="72.2" width="1.2" height="1.8" fill="#5a6078" opacity="0.7"/>
<rect x="117.0" y="53.0" width="1.2" height="2.3" fill="#4a5068" opacity="0.7"/>
<rect x="129.7" y="46.6" width="2.5" height="1.9" fill="#c8a070" opacity="0.7"/>
<rect x="184.7" y="89.7" width="1.6" height="1.6" fill="#8a8aa0" opacity="0.7"/>
<rect x="30.8" y="85.2" width="1.4" height="1.4" fill="#c8a070" opacity="0.7"/>
<rect x="97.6" y="126.0" width="2.2" height="2.4" fill="#4a5068" opacity="0.7"/>
<rect x="30.7" y="46.4" width="2.0" height="2.1" fill="#5a6078" opacity="0.7"/>
<rect x="58.4" y="47.2" width="1.0" height="2.1" fill="#c8a070" opacity="0.7"/>
<rect x="44.6" y="91.9" width="1.5" height="1.9" fill="#5a6078" opacity="0.7"/>
<rect x="152.6" y="54.4" width="1.6" height="1.4" fill="#4a5068" opacity="0.7"/>
<rect x="119.1" y="125.2" width="1.0" height="2.1" fill="#5a6078" opacity="0.7"/>
<rect x="79.1" y="59.3" width="2.0" height="1.3" fill="#7a7080" opacity="0.7"/>
<rect x="97.4" y="72.3" width="1.6" height="2.1" fill="#5a6078" opacity="0.7"/>
<rect x="27.3" y="62.4" width="1.9" height="2.1" fill="#c8a070" opacity="0.7"/>
<rect x="164.2" y="41.3" width="2.0" height="2.5" fill="#7a7080" opacity="0.7"/>
<rect x="164.3" y="52.4" width="1.7" height="2.4" fill="#7a7080" opacity="0.7"/>
<rect x="51.6" y="81.1" width="1.2" height="2.0" fill="#7a7080" opacity="0.7"/>
<rect x="72.2" y="73.7" width="1.8" height="1.3" fill="#4a5068" opacity="0.7"/>
<rect x="125.2" y="62.2" width="2.4" height="2.1" fill="#8a8aa0" opacity="0.7"/>
<rect x="47.1" y="108.2" width="1.7" height="1.2" fill="#8a8aa0" opacity="0.7"/>
<rect x="70.7" y="115.4" width="2.5" height="1.8" fill="#c8a070" opacity="0.7"/>
<rect x="132.6" y="30.5" width="2.8" height="2.5" fill="#4a5068" opacity="0.7"/>
<rect x="130.1" y="52.3" width="2.9" height="1.5" fill="#8a8aa0" opacity="0.7"/>
<rect x="61.8" y="99.0" width="2.3" height="1.5" fill="#5a6078" opacity="0.7"/>
<rect x="45.8" y="55.2" width="2.6" height="1.3" fill="#4a5068" opacity="0.7"/>
<rect x="129.3" y="93.4" width="1.3" height="1.8" fill="#4a5068" opacity="0.7"/>
<rect x="124.4" y="106.0" width="2.1" height="1.1" fill="#8a8aa0" opacity="0.7"/>
<rect x="80.9" y="124.4" width="2.4" height="1.5" fill="#4a5068" opacity="0.7"/>
<rect x="14.5" y="101.8" width="1.9" height="2.0" fill="#5a6078" opacity="0.7"/>
<rect x="175.3" y="46.3" width="1.8" height="2.4" fill="#c8a070" opacity="0.7"/>
<rect x="104.9" y="76.7" width="1.1" height="1.4" fill="#c8a070" opacity="0.7"/>
<rect x="148.3" y="52.2" width="2.0" height="1.1" fill="#8a8aa0" opacity="0.7"/>
<rect x="161.8" y="118.5" width="1.7" height="2.3" fill="#4a5068" opacity="0.7"/>
<rect x="42.9" y="96.8" width="1.1" height="1.8" fill="#8a8aa0" opacity="0.7"/>
<rect x="92.7" y="90.8" width="1.6" height="2.4" fill="#7a7080" opacity="0.7"/>
<rect x="154.5" y="108.2" width="2.3" height="1.8" fill="#4a5068" opacity="0.7"/>
<rect x="159.5" y="33.4" width="2.4" height="2.3" fill="#7a7080" opacity="0.7"/>
<rect x="54.0" y="75.6" width="1.3" height="2.2" fill="#7a7080" opacity="0.7"/>
<rect x="24.4" y="44.8" width="2.9" height="2.0" fill="#7a7080" opacity="0.7"/>
<rect x="20.5" y="72.5" width="1.1" height="2.1" fill="#7a7080" opacity="0.7"/>
<rect x="118.5" y="112.3" width="1.1" height="1.9" fill="#7a7080" opacity="0.7"/>
<rect x="126.6" y="46.6" width="1.4" height="2.2" fill="#7a7080" opacity="0.7"/>
<rect x="123.9" y="53.9" width="2.2" height="1.5" fill="#8a8aa0" opacity="0.7"/>
<rect x="63.8" y="119.5" width="2.2" height="2.1" fill="#7a7080" opacity="0.7"/>
<rect x="175.8" y="77.1" width="2.0" height="1.6" fill="#c8a070" opacity="0.7"/>
<rect x="95.9" y="36.3" width="1.3" height="2.0" fill="#5a6078" opacity="0.7"/>
<rect x="128.7" y="68.2" width="2.0" height="1.3" fill="#7a7080" opacity="0.7"/>
<rect x="4.9" y="93.1" width="1.3" height="1.9" fill="#7a7080" opacity="0.7"/>
<rect x="47.8" y="43.3" width="2.2" height="1.6" fill="#4a5068" opacity="0.7"/>
<rect x="177.8" y="36.2" width="2.9" height="1.9" fill="#8a8aa0" opacity="0.7"/>
<rect x="173.4" y="122.7" width="2.3" height="1.4" fill="#c8a070" opacity="0.7"/>
<rect x="65.9" y="49.8" width="1.8" height="1.8" fill="#5a6078" opacity="0.7"/>
<rect x="103.8" y="60.2" width="2.5" height="2.5" fill="#4a5068" opacity="0.7"/>
<rect x="162.1" y="71.1" width="1.7" height="1.5" fill="#8a8aa0" opacity="0.7"/>
<rect x="112.5" y="33.6" width="2.5" height="2.0" fill="#c8a070" opacity="0.7"/>
<rect x="189.7" y="99.4" width="1.0" height="1.0" fill="#5a6078" opacity="0.7"/>
<rect x="77.5" y="45.9" width="2.9" height="1.2" fill="#4a5068" opacity="0.7"/>
<rect x="169.9" y="53.5" width="2.5" height="1.7" fill="#5a6078" opacity="0.7"/>
<rect x="13.5" y="51.1" width="1.7" height="1.2" fill="#4a5068" opacity="0.7"/>
<rect x="142.0" y="78.3" width="2.0" height="2.5" fill="#8a8aa0" opacity="0.7"/>
<rect x="45.9" y="71.0" width="1.9" height="2.0" fill="#7a7080" opacity="0.7"/>
<rect x="163.5" y="94.1" width="1.1" height="2.4" fill="#8a8aa0" opacity="0.7"/>
<rect x="102.9" y="109.6" width="1.3" height="1.3" fill="#4a5068" opacity="0.7"/>
<rect x="16.4" y="124.1" width="2.5" height="1.5" fill="#4a5068" opacity="0.7"/>
<rect x="45.4" y="96.1" width="1.7" height="1.5" fill="#5a6078" opacity="0.7"/>
<rect x="46.1" y="118.9" width="1.0" height="1.1" fill="#7a7080" opacity="0.7"/>
<rect x="15.2" y="95.0" width="2.0" height="2.2" fill="#c8a070" opacity="0.7"/>
<rect x="47.3" y="112.5" width="2.8" height="2.3" fill="#4a5068" opacity="0.7"/>
<rect x="107.3" y="77.1" width="1.1" height="2.2" fill="#5a6078" opacity="0.7"/>
<rect x="19.5" y="75.9" width="1.4" height="2.3" fill="#8a8aa0" opacity="0.7"/>
<rect x="138.4" y="31.0" width="2.1" height="2.0" fill="#7a7080" opacity="0.7"/>
<rect x="140.4" y="44.8" width="2.9" height="2.3" fill="#8a8aa0" opacity="0.7"/>
<rect x="31.6" y="114.4" width="2.3" height="1.5" fill="#7a7080" opacity="0.7"/>
<rect x="12.2" y="121.0" width="1.9" height="2.3" fill="#7a7080" opacity="0.7"/>
<rect x="164.2" y="37.5" width="1.8" height="2.1" fill="#c8a070" opacity="0.7"/>
<rect x="65.4" y="42.3" width="2.3" height="2.2" fill="#8a8aa0" opacity="0.7"/>
<rect x="176.2" y="119.5" width="2.2" height="1.8" fill="#8a8aa0" opacity="0.7"/>
<rect x="174.1" y="115.7" width="2.3" height="2.3" fill="#8a8aa0" opacity="0.7"/>
<rect x="181.6" y="46.4" width="2.6" height="2.2" fill="#c8a070" opacity="0.7"/>
<rect x="60.7" y="39.1" width="2.8" height="1.4" fill="#c8a070" opacity="0.7"/>
<rect x="45.3" y="67.8" width="1.6" height="2.1" fill="#8a8aa0" opacity="0.7"/>
<rect x="136.1" y="57.3" width="2.8" height="1.9" fill="#5a6078" opacity="0.7"/>
<rect x="140.0" y="40.4" width="2.4" height="1.2" fill="#c8a070" opacity="0.7"/>
<rect x="26.8" y="95.1" width="1.9" height="2.4" fill="#7a7080" opacity="0.7"/>
<rect x="27.0" y="54.0" width="1.2" height="2.4" fill="#8a8aa0" opacity="0.7"/>
<rect x="180.0" y="62.8" width="1.6" height="2.0" fill="#7a7080" opacity="0.7"/>
<rect x="15.2" y="118.8" width="2.7" height="2.1" fill="#8a8aa0" opacity="0.7"/>
<rect x="75.9" y="71.3" width="2.6" height="1.1" fill="#4a5068" opacity="0.7"/>
<rect x="56.7" y="95.0" width="1.4" height="1.1" fill="#4a5068" opacity="0.7"/>
<rect x="168.4" y="46.3" width="2.7" height="1.5" fill="#7a7080" opacity="0.7"/>
<rect x="35.6" y="37.8" width="1.7" height="1.4" fill="#c8a070" opacity="0.7"/>
<rect x="145.2" y="30.8" width="2.0" height="1.0" fill="#4a5068" opacity="0.7"/>
<rect x="84.5" y="46.6" width="1.6" height="1.4" fill="#5a6078" opacity="0.7"/>
 </g>
 <g filter="url(#bl4s)">
<rect x="78.0" y="49.4" width="1.1" height="1.1" fill="#d8b080" opacity="0.75"/>
<rect x="48.5" y="67.2" width="2.0" height="1.4" fill="#6a7088" opacity="0.75"/>
<rect x="94.4" y="70.9" width="1.8" height="1.1" fill="#8890a8" opacity="0.75"/>
<rect x="158.7" y="113.6" width="1.2" height="1.4" fill="#c09060" opacity="0.75"/>
<rect x="164.0" y="62.9" width="2.4" height="1.4" fill="#d8b080" opacity="0.75"/>
<rect x="90.5" y="69.1" width="1.3" height="0.8" fill="#c09060" opacity="0.75"/>
<rect x="70.0" y="120.5" width="0.9" height="1.4" fill="#c09060" opacity="0.75"/>
<rect x="116.9" y="124.7" width="1.4" height="1.1" fill="#a08060" opacity="0.75"/>
<rect x="31.0" y="106.8" width="1.8" height="2.0" fill="#6a7088" opacity="0.75"/>
<rect x="127.4" y="33.6" width="0.8" height="1.4" fill="#e8d0a0" opacity="0.75"/>
<rect x="15.7" y="71.3" width="0.9" height="1.2" fill="#d8b080" opacity="0.75"/>
<rect x="73.5" y="43.2" width="1.5" height="1.9" fill="#d8b080" opacity="0.75"/>
<rect x="123.6" y="73.0" width="1.7" height="1.8" fill="#c09060" opacity="0.75"/>
<rect x="68.3" y="97.4" width="2.4" height="1.0" fill="#a08060" opacity="0.75"/>
<rect x="115.7" y="102.5" width="1.8" height="1.3" fill="#d8b080" opacity="0.75"/>
<rect x="22.9" y="58.7" width="2.5" height="1.3" fill="#c09060" opacity="0.75"/>
<rect x="169.9" y="61.0" width="1.6" height="1.1" fill="#8890a8" opacity="0.75"/>
<rect x="22.6" y="109.8" width="1.1" height="0.9" fill="#8890a8" opacity="0.75"/>
<rect x="2.2" y="110.8" width="1.4" height="1.3" fill="#8890a8" opacity="0.75"/>
<rect x="158.7" y="68.7" width="1.5" height="1.2" fill="#d8b080" opacity="0.75"/>
<rect x="35.0" y="33.6" width="1.4" height="1.8" fill="#e8d0a0" opacity="0.75"/>
<rect x="44.4" y="112.8" width="1.2" height="1.7" fill="#d8b080" opacity="0.75"/>
<rect x="168.7" y="99.9" width="1.2" height="1.8" fill="#a08060" opacity="0.75"/>
<rect x="137.3" y="67.2" width="1.5" height="2.0" fill="#e8d0a0" opacity="0.75"/>
<rect x="81.3" y="118.0" width="0.9" height="1.2" fill="#a08060" opacity="0.75"/>
<rect x="168.8" y="106.5" width="1.7" height="1.9" fill="#8890a8" opacity="0.75"/>
<rect x="83.2" y="58.2" width="2.4" height="1.8" fill="#c09060" opacity="0.75"/>
<rect x="54.5" y="95.8" width="1.8" height="2.0" fill="#a08060" opacity="0.75"/>
<rect x="138.0" y="48.9" width="1.4" height="1.0" fill="#d8b080" opacity="0.75"/>
<rect x="128.7" y="97.4" width="2.4" height="1.0" fill="#a08060" opacity="0.75"/>
<rect x="128.9" y="106.6" width="1.2" height="1.3" fill="#a08060" opacity="0.75"/>
<rect x="44.6" y="113.5" width="1.4" height="1.3" fill="#d8b080" opacity="0.75"/>
<rect x="96.8" y="49.6" width="1.7" height="1.9" fill="#a08060" opacity="0.75"/>
<rect x="191.2" y="79.6" width="2.2" height="1.9" fill="#8890a8" opacity="0.75"/>
<rect x="144.5" y="101.7" width="1.6" height="1.4" fill="#6a7088" opacity="0.75"/>
<rect x="148.2" y="110.6" width="1.8" height="1.1" fill="#a08060" opacity="0.75"/>
<rect x="4.0" y="40.2" width="1.3" height="1.5" fill="#d8b080" opacity="0.75"/>
<rect x="80.4" y="65.8" width="1.7" height="1.9" fill="#6a7088" opacity="0.75"/>
<rect x="111.0" y="48.8" width="1.0" height="1.8" fill="#e8d0a0" opacity="0.75"/>
<rect x="76.9" y="46.7" width="1.6" height="1.0" fill="#c09060" opacity="0.75"/>
<rect x="174.0" y="114.2" width="2.0" height="1.3" fill="#6a7088" opacity="0.75"/>
<rect x="184.2" y="47.3" width="1.2" height="1.1" fill="#6a7088" opacity="0.75"/>
<rect x="163.0" y="97.9" width="1.1" height="1.9" fill="#e8d0a0" opacity="0.75"/>
<rect x="110.5" y="90.7" width="2.4" height="1.6" fill="#d8b080" opacity="0.75"/>
<rect x="102.6" y="126.7" width="1.7" height="0.9" fill="#e8d0a0" opacity="0.75"/>
<rect x="13.9" y="93.6" width="0.8" height="1.6" fill="#8890a8" opacity="0.75"/>
<rect x="122.3" y="86.5" width="1.5" height="1.0" fill="#6a7088" opacity="0.75"/>
<rect x="177.6" y="68.5" width="0.9" height="1.4" fill="#6a7088" opacity="0.75"/>
<rect x="145.8" y="45.4" width="1.5" height="1.6" fill="#e8d0a0" opacity="0.75"/>
<rect x="44.3" y="48.3" width="1.6" height="1.1" fill="#a08060" opacity="0.75"/>
<rect x="70.5" y="84.3" width="1.1" height="1.5" fill="#a08060" opacity="0.75"/>
<rect x="68.3" y="123.1" width="1.7" height="1.7" fill="#d8b080" opacity="0.75"/>
<rect x="139.9" y="110.0" width="1.1" height="0.9" fill="#6a7088" opacity="0.75"/>
<rect x="124.8" y="46.2" width="2.3" height="1.7" fill="#6a7088" opacity="0.75"/>
<rect x="117.4" y="124.0" width="1.1" height="1.7" fill="#8890a8" opacity="0.75"/>
<rect x="156.2" y="72.3" width="1.3" height="1.7" fill="#c09060" opacity="0.75"/>
<rect x="95.8" y="123.8" width="2.0" height="0.8" fill="#e8d0a0" opacity="0.75"/>
<rect x="176.9" y="106.9" width="2.1" height="2.0" fill="#6a7088" opacity="0.75"/>
<rect x="85.7" y="106.9" width="2.3" height="0.9" fill="#c09060" opacity="0.75"/>
<rect x="169.0" y="111.3" width="2.1" height="1.2" fill="#8890a8" opacity="0.75"/>
<rect x="113.7" y="86.7" width="0.8" height="1.9" fill="#c09060" opacity="0.75"/>
<rect x="182.1" y="115.5" width="2.2" height="1.2" fill="#d8b080" opacity="0.75"/>
<rect x="95.0" y="107.8" width="0.9" height="1.0" fill="#a08060" opacity="0.75"/>
<rect x="61.2" y="62.4" width="1.4" height="1.8" fill="#d8b080" opacity="0.75"/>
<rect x="72.7" y="56.3" width="1.2" height="1.0" fill="#a08060" opacity="0.75"/>
<rect x="3.6" y="113.7" width="1.3" height="1.3" fill="#6a7088" opacity="0.75"/>
<rect x="138.1" y="105.2" width="1.1" height="1.3" fill="#d8b080" opacity="0.75"/>
<rect x="40.9" y="92.8" width="1.1" height="1.5" fill="#e8d0a0" opacity="0.75"/>
<rect x="0.8" y="121.5" width="2.2" height="1.0" fill="#c09060" opacity="0.75"/>
<rect x="121.4" y="35.9" width="2.3" height="1.0" fill="#e8d0a0" opacity="0.75"/>
<rect x="28.7" y="120.5" width="0.9" height="1.3" fill="#e8d0a0" opacity="0.75"/>
<rect x="14.3" y="87.1" width="1.4" height="1.0" fill="#6a7088" opacity="0.75"/>
<rect x="17.6" y="78.7" width="1.2" height="1.5" fill="#c09060" opacity="0.75"/>
<rect x="138.1" y="39.7" width="1.8" height="1.9" fill="#c09060" opacity="0.75"/>
<rect x="26.0" y="101.6" width="1.2" height="1.8" fill="#8890a8" opacity="0.75"/>
<rect x="32.4" y="80.0" width="2.2" height="1.9" fill="#6a7088" opacity="0.75"/>
<rect x="14.9" y="53.3" width="1.2" height="1.6" fill="#e8d0a0" opacity="0.75"/>
<rect x="101.2" y="37.0" width="1.2" height="1.7" fill="#8890a8" opacity="0.75"/>
<rect x="95.7" y="39.4" width="1.9" height="1.9" fill="#e8d0a0" opacity="0.75"/>
<rect x="12.0" y="48.4" width="0.9" height="1.2" fill="#8890a8" opacity="0.75"/>
<rect x="173.7" y="95.2" width="0.8" height="1.4" fill="#c09060" opacity="0.75"/>
<rect x="140.1" y="41.1" width="1.4" height="1.0" fill="#8890a8" opacity="0.75"/>
<rect x="102.5" y="49.2" width="0.9" height="2.0" fill="#8890a8" opacity="0.75"/>
<rect x="44.7" y="89.0" width="2.2" height="1.3" fill="#8890a8" opacity="0.75"/>
<rect x="181.7" y="116.3" width="1.2" height="1.0" fill="#d8b080" opacity="0.75"/>
<rect x="4.2" y="47.1" width="1.2" height="1.5" fill="#d8b080" opacity="0.75"/>
<rect x="124.5" y="72.1" width="1.9" height="0.9" fill="#a08060" opacity="0.75"/>
<rect x="71.4" y="71.1" width="2.3" height="1.7" fill="#a08060" opacity="0.75"/>
<rect x="50.7" y="99.1" width="2.2" height="1.1" fill="#c09060" opacity="0.75"/>
<rect x="12.4" y="33.2" width="1.3" height="1.5" fill="#8890a8" opacity="0.75"/>
<rect x="169.1" y="90.3" width="1.2" height="1.3" fill="#e8d0a0" opacity="0.75"/>
<rect x="100.7" y="88.4" width="1.2" height="1.7" fill="#d8b080" opacity="0.75"/>
<rect x="142.4" y="57.4" width="2.1" height="1.9" fill="#a08060" opacity="0.75"/>
<rect x="85.2" y="107.0" width="2.1" height="1.4" fill="#c09060" opacity="0.75"/>
<rect x="116.8" y="81.9" width="2.3" height="0.9" fill="#8890a8" opacity="0.75"/>
<rect x="76.9" y="50.2" width="1.8" height="1.1" fill="#a08060" opacity="0.75"/>
<rect x="94.6" y="126.6" width="0.9" height="0.8" fill="#6a7088" opacity="0.75"/>
<rect x="16.1" y="42.6" width="1.5" height="1.3" fill="#a08060" opacity="0.75"/>
<rect x="126.9" y="86.1" width="0.8" height="1.8" fill="#c09060" opacity="0.75"/>
<rect x="39.3" y="92.1" width="1.0" height="2.0" fill="#8890a8" opacity="0.75"/>
<rect x="35.3" y="43.1" width="2.1" height="1.1" fill="#c09060" opacity="0.75"/>
<rect x="136.2" y="40.2" width="2.2" height="1.7" fill="#e8d0a0" opacity="0.75"/>
<rect x="121.9" y="37.5" width="2.4" height="1.2" fill="#a08060" opacity="0.75"/>
<rect x="30.6" y="56.6" width="1.0" height="1.7" fill="#d8b080" opacity="0.75"/>
<rect x="48.4" y="67.9" width="2.3" height="1.5" fill="#c09060" opacity="0.75"/>
<rect x="163.3" y="113.6" width="1.7" height="1.8" fill="#8890a8" opacity="0.75"/>
<rect x="96.5" y="91.5" width="1.6" height="1.0" fill="#8890a8" opacity="0.75"/>
<rect x="98.5" y="107.8" width="1.2" height="1.2" fill="#6a7088" opacity="0.75"/>
<rect x="13.6" y="83.9" width="2.1" height="1.5" fill="#8890a8" opacity="0.75"/>
<rect x="139.9" y="101.2" width="1.8" height="0.9" fill="#e8d0a0" opacity="0.75"/>
<rect x="17.1" y="74.4" width="0.9" height="1.0" fill="#d8b080" opacity="0.75"/>
<rect x="149.9" y="59.0" width="1.0" height="1.7" fill="#a08060" opacity="0.75"/>
<rect x="59.9" y="110.1" width="2.0" height="1.0" fill="#6a7088" opacity="0.75"/>
<rect x="21.5" y="32.4" width="2.2" height="1.2" fill="#8890a8" opacity="0.75"/>
<rect x="97.3" y="73.0" width="2.4" height="1.4" fill="#6a7088" opacity="0.75"/>
<rect x="67.4" y="63.8" width="0.9" height="1.2" fill="#6a7088" opacity="0.75"/>
<rect x="182.0" y="118.7" width="2.2" height="1.8" fill="#a08060" opacity="0.75"/>
<rect x="101.0" y="71.2" width="1.6" height="1.0" fill="#8890a8" opacity="0.75"/>
<rect x="107.6" y="100.7" width="2.2" height="1.4" fill="#d8b080" opacity="0.75"/>
<rect x="3.2" y="87.6" width="1.1" height="1.3" fill="#d8b080" opacity="0.75"/>
<rect x="103.0" y="122.6" width="1.7" height="1.8" fill="#c09060" opacity="0.75"/>
<rect x="106.8" y="97.2" width="2.1" height="0.9" fill="#6a7088" opacity="0.75"/>
<rect x="57.0" y="94.8" width="1.4" height="1.0" fill="#c09060" opacity="0.75"/>
<rect x="7.8" y="91.0" width="1.6" height="1.3" fill="#6a7088" opacity="0.75"/>
<rect x="105.1" y="66.1" width="1.9" height="1.9" fill="#8890a8" opacity="0.75"/>
<rect x="20.3" y="49.8" width="2.1" height="1.0" fill="#8890a8" opacity="0.75"/>
<rect x="131.4" y="119.1" width="1.4" height="1.2" fill="#c09060" opacity="0.75"/>
<rect x="114.6" y="88.6" width="2.5" height="2.0" fill="#8890a8" opacity="0.75"/>
<rect x="78.7" y="42.5" width="1.9" height="2.0" fill="#c09060" opacity="0.75"/>
<rect x="55.4" y="98.0" width="2.1" height="1.8" fill="#d8b080" opacity="0.75"/>
<rect x="105.8" y="81.9" width="1.0" height="1.3" fill="#6a7088" opacity="0.75"/>
<rect x="24.8" y="59.4" width="2.1" height="0.9" fill="#8890a8" opacity="0.75"/>
<rect x="5.7" y="77.7" width="1.6" height="0.9" fill="#8890a8" opacity="0.75"/>
<rect x="46.6" y="79.2" width="0.9" height="1.3" fill="#d8b080" opacity="0.75"/>
<rect x="178.2" y="84.5" width="1.0" height="1.6" fill="#8890a8" opacity="0.75"/>
<rect x="149.7" y="82.0" width="0.9" height="0.8" fill="#c09060" opacity="0.75"/>
<rect x="139.8" y="120.4" width="1.6" height="1.6" fill="#e8d0a0" opacity="0.75"/>
<rect x="95.8" y="99.7" width="1.2" height="0.9" fill="#c09060" opacity="0.75"/>
<rect x="30.0" y="92.1" width="1.1" height="1.0" fill="#6a7088" opacity="0.75"/>
<rect x="88.3" y="110.9" width="0.8" height="1.8" fill="#d8b080" opacity="0.75"/>
<rect x="58.2" y="90.6" width="2.0" height="1.5" fill="#8890a8" opacity="0.75"/>
<rect x="181.1" y="78.3" width="1.0" height="1.5" fill="#a08060" opacity="0.75"/>
<rect x="171.9" y="97.1" width="0.9" height="1.2" fill="#8890a8" opacity="0.75"/>
<rect x="103.5" y="49.5" width="1.5" height="1.6" fill="#c09060" opacity="0.75"/>
<rect x="98.9" y="76.4" width="0.9" height="1.6" fill="#a08060" opacity="0.75"/>
<rect x="191.0" y="122.9" width="1.3" height="0.8" fill="#c09060" opacity="0.75"/>
<rect x="148.7" y="32.9" width="1.2" height="1.0" fill="#a08060" opacity="0.75"/>
<rect x="169.3" y="99.1" width="0.8" height="1.4" fill="#c09060" opacity="0.75"/>
<rect x="57.9" y="61.2" width="1.4" height="1.0" fill="#8890a8" opacity="0.75"/>
<rect x="72.3" y="46.1" width="1.1" height="1.4" fill="#8890a8" opacity="0.75"/>
<rect x="142.0" y="76.7" width="1.3" height="1.6" fill="#8890a8" opacity="0.75"/>
<rect x="109.4" y="97.0" width="0.9" height="1.3" fill="#a08060" opacity="0.75"/>
<rect x="113.4" y="107.2" width="1.6" height="1.4" fill="#a08060" opacity="0.75"/>
<rect x="76.6" y="62.0" width="1.5" height="1.2" fill="#c09060" opacity="0.75"/>
<rect x="135.9" y="38.7" width="2.5" height="1.7" fill="#e8d0a0" opacity="0.75"/>
<rect x="30.2" y="53.7" width="1.5" height="1.9" fill="#8890a8" opacity="0.75"/>
<rect x="15.6" y="35.8" width="0.9" height="1.6" fill="#e8d0a0" opacity="0.75"/>
<rect x="41.5" y="124.7" width="1.5" height="1.4" fill="#c09060" opacity="0.75"/>
<rect x="125.9" y="126.3" width="1.5" height="1.8" fill="#e8d0a0" opacity="0.75"/>
<rect x="61.6" y="101.5" width="1.1" height="1.9" fill="#e8d0a0" opacity="0.75"/>
<rect x="109.8" y="97.0" width="1.0" height="1.4" fill="#e8d0a0" opacity="0.75"/>
<rect x="89.6" y="74.1" width="1.7" height="1.5" fill="#8890a8" opacity="0.75"/>
<rect x="103.4" y="89.6" width="2.1" height="1.4" fill="#a08060" opacity="0.75"/>
<rect x="87.7" y="41.8" width="1.6" height="1.3" fill="#8890a8" opacity="0.75"/>
<rect x="159.9" y="100.7" width="1.0" height="1.7" fill="#6a7088" opacity="0.75"/>
<rect x="82.9" y="82.5" width="2.1" height="1.8" fill="#d8b080" opacity="0.75"/>
<rect x="24.4" y="102.2" width="1.0" height="1.1" fill="#8890a8" opacity="0.75"/>
<rect x="3.9" y="98.4" width="0.9" height="0.9" fill="#c09060" opacity="0.75"/>
<rect x="7.5" y="51.3" width="1.8" height="1.0" fill="#6a7088" opacity="0.75"/>
<rect x="145.4" y="47.8" width="1.2" height="1.2" fill="#8890a8" opacity="0.75"/>
<rect x="66.9" y="117.3" width="1.2" height="0.8" fill="#e8d0a0" opacity="0.75"/>
<rect x="20.2" y="86.4" width="0.9" height="1.8" fill="#c09060" opacity="0.75"/>
<rect x="154.1" y="68.8" width="2.2" height="1.7" fill="#8890a8" opacity="0.75"/>
<rect x="65.6" y="98.6" width="1.6" height="1.6" fill="#a08060" opacity="0.75"/>
<rect x="92.7" y="77.9" width="1.6" height="1.1" fill="#6a7088" opacity="0.75"/>
<rect x="17.4" y="40.5" width="2.4" height="1.9" fill="#a08060" opacity="0.75"/>
<rect x="178.7" y="66.2" width="2.4" height="1.6" fill="#c09060" opacity="0.75"/>
<rect x="71.9" y="65.4" width="1.4" height="1.1" fill="#8890a8" opacity="0.75"/>
<rect x="177.1" y="116.7" width="2.4" height="1.1" fill="#c09060" opacity="0.75"/>
<rect x="116.4" y="52.4" width="1.3" height="1.9" fill="#6a7088" opacity="0.75"/>
<rect x="15.2" y="94.8" width="0.9" height="0.9" fill="#c09060" opacity="0.75"/>
<rect x="21.5" y="67.7" width="1.3" height="1.1" fill="#c09060" opacity="0.75"/>
<rect x="10.4" y="42.9" width="1.2" height="1.5" fill="#c09060" opacity="0.75"/>
<rect x="162.5" y="30.7" width="1.4" height="1.0" fill="#8890a8" opacity="0.75"/>
<rect x="96.0" y="107.0" width="1.1" height="1.7" fill="#a08060" opacity="0.75"/>
<rect x="4.4" y="36.0" width="0.9" height="2.0" fill="#e8d0a0" opacity="0.75"/>
<rect x="28.0" y="43.3" width="1.9" height="1.5" fill="#c09060" opacity="0.75"/>
<rect x="60.8" y="53.2" width="1.2" height="1.3" fill="#d8b080" opacity="0.75"/>
<rect x="159.2" y="38.1" width="1.8" height="0.8" fill="#6a7088" opacity="0.75"/>
<rect x="132.4" y="60.7" width="1.5" height="1.0" fill="#6a7088" opacity="0.75"/>
<rect x="161.8" y="114.8" width="1.2" height="1.9" fill="#6a7088" opacity="0.75"/>
<rect x="87.6" y="70.4" width="2.3" height="1.0" fill="#c09060" opacity="0.75"/>
<rect x="171.5" y="57.3" width="0.9" height="1.1" fill="#8890a8" opacity="0.75"/>
<rect x="187.5" y="106.1" width="1.1" height="1.5" fill="#a08060" opacity="0.75"/>
<rect x="7.4" y="33.0" width="1.1" height="1.8" fill="#e8d0a0" opacity="0.75"/>
<rect x="2.8" y="38.4" width="0.8" height="0.9" fill="#d8b080" opacity="0.75"/>
<rect x="13.3" y="31.8" width="2.3" height="1.1" fill="#8890a8" opacity="0.75"/>
<rect x="150.4" y="46.9" width="1.5" height="0.9" fill="#c09060" opacity="0.75"/>
<rect x="90.5" y="79.7" width="1.3" height="0.9" fill="#c09060" opacity="0.75"/>
<rect x="133.0" y="94.0" width="1.3" height="0.9" fill="#c09060" opacity="0.75"/>
<rect x="129.6" y="34.3" width="1.7" height="1.7" fill="#c09060" opacity="0.75"/>
<rect x="118.2" y="40.7" width="2.3" height="1.3" fill="#c09060" opacity="0.75"/>
<rect x="23.9" y="45.9" width="2.2" height="1.8" fill="#c09060" opacity="0.75"/>
<rect x="38.9" y="46.6" width="1.5" height="0.9" fill="#8890a8" opacity="0.75"/>
<rect x="15.5" y="53.5" width="2.2" height="1.7" fill="#6a7088" opacity="0.75"/>
<rect x="3.5" y="89.9" width="2.0" height="1.3" fill="#8890a8" opacity="0.75"/>
<rect x="143.6" y="124.3" width="1.7" height="1.0" fill="#a08060" opacity="0.75"/>
<rect x="188.0" y="82.1" width="2.4" height="1.7" fill="#c09060" opacity="0.75"/>
<rect x="153.0" y="89.0" width="1.0" height="1.0" fill="#a08060" opacity="0.75"/>
<rect x="13.4" y="88.4" width="2.3" height="1.4" fill="#6a7088" opacity="0.75"/>
<rect x="113.0" y="103.8" width="1.3" height="0.8" fill="#e8d0a0" opacity="0.75"/>
<rect x="35.9" y="65.0" width="2.3" height="0.9" fill="#6a7088" opacity="0.75"/>
<rect x="38.2" y="79.4" width="1.2" height="1.0" fill="#c09060" opacity="0.75"/>
<rect x="121.6" y="76.8" width="1.8" height="1.4" fill="#c09060" opacity="0.75"/>
<rect x="66.3" y="95.3" width="1.2" height="1.1" fill="#c09060" opacity="0.75"/>
<rect x="118.0" y="87.5" width="2.0" height="1.4" fill="#6a7088" opacity="0.75"/>
<rect x="24.2" y="57.0" width="1.2" height="1.9" fill="#c09060" opacity="0.75"/>
<rect x="41.5" y="90.4" width="2.1" height="1.4" fill="#8890a8" opacity="0.75"/>
<rect x="3.4" y="65.4" width="2.1" height="1.3" fill="#c09060" opacity="0.75"/>
<rect x="120.0" y="56.4" width="1.0" height="1.3" fill="#6a7088" opacity="0.75"/>
<rect x="163.3" y="88.8" width="1.7" height="1.0" fill="#d8b080" opacity="0.75"/>
<rect x="153.2" y="40.0" width="1.0" height="1.9" fill="#8890a8" opacity="0.75"/>
<rect x="128.3" y="121.5" width="1.5" height="1.5" fill="#6a7088" opacity="0.75"/>
<rect x="143.2" y="126.5" width="1.8" height="1.3" fill="#6a7088" opacity="0.75"/>
<rect x="115.1" y="53.7" width="1.4" height="1.6" fill="#d8b080" opacity="0.75"/>
<rect x="124.1" y="41.6" width="1.1" height="1.1" fill="#8890a8" opacity="0.75"/>
<rect x="173.0" y="50.2" width="1.2" height="1.4" fill="#d8b080" opacity="0.75"/>
<rect x="59.6" y="67.1" width="1.9" height="1.8" fill="#a08060" opacity="0.75"/>
<rect x="11.0" y="50.0" width="0.9" height="1.3" fill="#6a7088" opacity="0.75"/>
<rect x="84.3" y="90.5" width="1.2" height="1.3" fill="#8890a8" opacity="0.75"/>
<rect x="156.3" y="38.1" width="0.9" height="1.2" fill="#e8d0a0" opacity="0.75"/>
<rect x="27.8" y="110.2" width="2.4" height="0.9" fill="#c09060" opacity="0.75"/>
<rect x="98.9" y="75.9" width="2.3" height="1.8" fill="#8890a8" opacity="0.75"/>
<rect x="113.2" y="117.0" width="1.8" height="1.7" fill="#e8d0a0" opacity="0.75"/>
<rect x="26.2" y="52.4" width="1.5" height="1.4" fill="#8890a8" opacity="0.75"/>
<rect x="134.0" y="64.0" width="1.9" height="0.9" fill="#e8d0a0" opacity="0.75"/>
<rect x="100.3" y="81.8" width="1.6" height="1.9" fill="#6a7088" opacity="0.75"/>
<rect x="11.0" y="51.2" width="1.0" height="1.5" fill="#a08060" opacity="0.75"/>
<rect x="79.2" y="31.8" width="1.2" height="1.1" fill="#a08060" opacity="0.75"/>
<rect x="75.0" y="43.6" width="1.2" height="1.3" fill="#a08060" opacity="0.75"/>
<rect x="127.1" y="97.6" width="1.8" height="1.5" fill="#e8d0a0" opacity="0.75"/>
<rect x="6.2" y="49.2" width="1.7" height="1.9" fill="#a08060" opacity="0.75"/>
<rect x="25.9" y="116.9" width="1.7" height="1.0" fill="#8890a8" opacity="0.75"/>
<rect x="23.6" y="75.8" width="1.6" height="1.5" fill="#e8d0a0" opacity="0.75"/>
<rect x="178.4" y="95.6" width="1.1" height="2.0" fill="#d8b080" opacity="0.75"/>
<rect x="159.0" y="123.9" width="1.7" height="1.4" fill="#a08060" opacity="0.75"/>
<rect x="61.3" y="109.6" width="1.6" height="1.8" fill="#a08060" opacity="0.75"/>
<rect x="8.7" y="48.1" width="2.3" height="1.9" fill="#e8d0a0" opacity="0.75"/>
<rect x="63.4" y="48.7" width="1.3" height="1.4" fill="#6a7088" opacity="0.75"/>
<rect x="113.9" y="68.4" width="1.1" height="1.8" fill="#e8d0a0" opacity="0.75"/>
<rect x="102.3" y="51.0" width="2.0" height="1.4" fill="#d8b080" opacity="0.75"/>
<rect x="91.3" y="40.7" width="2.5" height="1.5" fill="#a08060" opacity="0.75"/>
<rect x="192.8" y="124.1" width="0.9" height="1.4" fill="#e8d0a0" opacity="0.75"/>
<rect x="44.2" y="51.9" width="2.3" height="1.7" fill="#a08060" opacity="0.75"/>
<rect x="27.6" y="55.0" width="1.4" height="1.8" fill="#e8d0a0" opacity="0.75"/>
<rect x="85.4" y="113.4" width="1.3" height="1.4" fill="#a08060" opacity="0.75"/>
<rect x="179.4" y="108.6" width="1.9" height="1.1" fill="#c09060" opacity="0.75"/>
<rect x="61.5" y="30.0" width="2.0" height="1.3" fill="#d8b080" opacity="0.75"/>
<rect x="66.0" y="72.2" width="2.2" height="1.7" fill="#a08060" opacity="0.75"/>
<rect x="171.9" y="66.0" width="1.2" height="1.7" fill="#8890a8" opacity="0.75"/>
 </g>
 <g filter="url(#bl4)">
  <path d="M85 42L140 48 168 58 172 66 160 74 130 80 110 88 98 100 85 135H-5V105L40 95 80 88 105 80 122 70 128 62 110 54 85 47Z" fill="#3a5678"/>
  <path d="M-5 105L40 95 80 90 98 100 85 135H-5Z" fill="#24324e"/>
  <path d="M55 80L112 78 115 92 58 95Z" fill="#4a4c50" opacity="0.7"/>
 </g>
 <path d="M55 87L115 84" stroke="#d0c098" stroke-width="1.5" opacity="0.8"/>
 <rect x="74" y="76" width="4" height="13" fill="#c0a878"/>
 <rect x="89" y="78" width="4" height="13" fill="#c0a878"/>
 <rect x="112" y="28" width="4" height="8" fill="#d89860" filter="url(#bl4)"/>
 <rect x="150" y="106" width="16" height="10" fill="#a0a4b0" filter="url(#bl4)"/>
 <path d="M0 0L80 60M193 0L120 60M0 127L70 80M193 127L130 90" stroke="#8a90a0" stroke-width="0.5" opacity="0.4"/>
 <text x="55" y="70" font-family="Liberation Sans" font-size="18" fill="#9aa0b0" fill-opacity="0.3" textLength="100">shutterstock</text>
</svg>
<!-- P5 berlin train -->
<svg class="ph" style="left:858px;top:500px" width="278" height="161" viewBox="0 0 278 161">
 <defs>
  <linearGradient id="p5sky" x1="0" y1="0" x2="0.6" y2="1"><stop offset="0" stop-color="#3f74bc"/><stop offset="0.45" stop-color="#8eaad0"/><stop offset="0.75" stop-color="#d8dce0"/></linearGradient>
  <linearGradient id="p5haze" x1="0" y1="0" x2="1" y2="0"><stop offset="0" stop-color="#d8a848"/><stop offset="1" stop-color="#f0c868"/></linearGradient>
  <filter id="bl5" x="-10%" y="-10%" width="120%" height="120%"><feGaussianBlur stdDeviation="1.5"/></filter>
  <filter id="bl5b" x="-10%" y="-10%" width="120%" height="120%"><feGaussianBlur stdDeviation="3"/></filter>
  <pattern id="p5bld" width="6" height="6" patternUnits="userSpaceOnUse"><rect width="6" height="6" fill="#6e6252"/><path d="M3 0L6 3 3 6 0 3Z" fill="#a89478"/></pattern>
 </defs>
 <rect x="-5" y="-5" width="288" height="171" fill="url(#p5sky)"/>
 <rect x="38" y="-5" width="52" height="57" fill="url(#p5bld)"/>
 <rect x="-5" y="-5" width="43" height="35" fill="#5e6c80"/>
 <g filter="url(#bl5b)">
  <path d="M142 64L170 62 170 100 142 104Z" fill="#8a7058"/>
  <path d="M205 82L241 70 283 68V120L205 118Z" fill="url(#p5haze)"/>
  <path d="M150 98L283 95V125L150 115Z" fill="#d8c498"/>
  <path d="M205 118L283 120V166H220Z" fill="#e4cc9c"/>
 </g>
 <g filter="url(#bl5)">
  <path d="M168 100V52L175 45 178 25 183 45 186 52 188 35 192 28 196 52 200 100Z" fill="#b48e50"/>
  <path d="M198 100V68L215 65V100Z" fill="#b0a080"/>
  <path d="M150 107L283 150V166H150Z" fill="#b8a888"/>
  <path d="M150 112L283 156V166H150Z" fill="#8a7060"/>
  <path d="M150 125L212 166H150Z" fill="#56403c"/>
  <path d="M-5 18L150 70 152 166H-5Z" fill="#dea624"/>
  <path d="M-5 18L150 70 150 76 -5 26Z" fill="#eccb78"/>
 </g>
 <g filter="url(#bl5)">
 <rect x="-2" y="57" width="23" height="104" fill="#3c3c3a"/>
 <rect x="1" y="62" width="17" height="28" fill="#5a6068"/>
 <rect x="38" y="58" width="4" height="103" fill="#5a4520"/>
 <rect x="46" y="62" width="6" height="99" fill="#2a2c30"/>
 <rect x="65" y="68" width="18" height="70" fill="#464c54"/>
 <rect x="91" y="72" width="5" height="89" fill="#4a3a18"/>
 <rect x="102" y="76" width="5" height="50" fill="#4c5058"/>
 <rect x="116" y="79" width="4" height="40" fill="#4c5058"/>
 <rect x="130" y="81" width="4" height="35" fill="#4c5058"/>
 <rect x="142" y="83" width="4" height="30" fill="#4c5058"/>
 </g>
 <path d="M158 161Q150 140 165 125" stroke="#e8e0d8" stroke-width="1.5" fill="none"/>
 <text x="75" y="92" font-family="Liberation Sans" font-size="22" fill="#8a8a8a" fill-opacity="0.35" textLength="130">shutterstock</text>
</svg>
<!-- P6 rio cable car -->
<svg class="ph" style="left:1138px;top:500px" width="109" height="161" viewBox="0 0 109 161">
 <defs>
  <linearGradient id="p6" x1="0" y1="0" x2="0" y2="1"><stop offset="0" stop-color="#e6e0d0"/><stop offset="0.09" stop-color="#e2d2b0"/><stop offset="0.14" stop-color="#c89a52"/><stop offset="0.3" stop-color="#9a7a44"/><stop offset="0.45" stop-color="#4e5034"/><stop offset="0.7" stop-color="#38442e"/><stop offset="1" stop-color="#34462a"/></linearGradient>
  <filter id="bl6" x="-10%" y="-10%" width="120%" height="120%"><feGaussianBlur stdDeviation="1.8"/></filter>
 </defs>
 <rect x="-5" y="-5" width="119" height="171" fill="url(#p6)"/>
 <g filter="url(#bl6)">
  <path d="M60 15L85 8 95 5 114 10V55L70 45Z" fill="#7a6440" opacity="0.8"/>
  <path d="M5 20L20 15 35 20 45 38 30 40 10 35Z" fill="#d8a858" opacity="0.7"/>
  <path d="M-5 25L25 40 30 80 -5 85Z" fill="#3a3a2a"/>
  <path d="M-5 72L25 70 20 100 -5 105Z" fill="#6a6a5e"/>
  <path d="M25 65L40 55 60 58 70 75 50 85 25 80Z" fill="#343a28"/>
  <path d="M82 58L114 48V100L90 95Z" fill="#a8a8a2"/>
  <path d="M85 90L114 95V125L95 120Z" fill="#4a4a42"/>
  <path d="M-5 125L40 130 60 166H-5Z" fill="#3a4a2a"/>
  <path d="M80 130L114 120V166H90Z" fill="#3e4e2c"/>
  <path d="M30 166L55 137 75 139 109 160V166Z" fill="#6a6244"/>
 </g>
 <path d="M31 163L55 138 75 140 107 160" stroke="#d8ccb0" stroke-width="3" fill="none"/>
 <path d="M60 116L62 93H97L96 116Z" fill="#c8c4b8" filter="url(#bl6)"/>
 <rect x="63" y="113" width="33" height="20" fill="#2e2c22"/>
 <path d="M68 92L80 70 92 92" stroke="#1e1e1a" stroke-width="2" fill="none"/>
 <path d="M-2 22L50 85M0 35L45 90" stroke="#2a2a22" stroke-width="1"/>
 <path d="M10 130L45 95M15 140L48 100" stroke="#c8c8c0" stroke-width="0.8" opacity="0.6"/>
 <text x="15" y="85" font-family="Liberation Sans" font-size="14" fill="#707070" fill-opacity="0.4" textLength="75">shutterstock</text>
</svg>
<!-- P7 athens -->
<svg class="ph" style="left:858px;top:663px" width="194" height="127" viewBox="0 0 194 127">
 <defs><filter id="bl7" x="-5%" y="-5%" width="110%" height="110%"><feGaussianBlur stdDeviation="0.6"/></filter></defs>
 <rect width="194" height="127" fill="#d2d5d8"/>
 <g filter="url(#bl7)">
<rect x="60.8" y="16.6" width="8.0" height="2.4" fill="#dcdfe2"/>
<rect x="111.8" y="115.3" width="4.3" height="2.4" fill="#a8acb2"/>
<rect x="14.9" y="52.2" width="9.5" height="2.6" fill="#b0a890"/>
<rect x="183.7" y="72.0" width="5.9" height="6.9" fill="#4a5058"/>
<rect x="54.1" y="15.8" width="3.5" height="3.5" fill="#eef0f2"/>
<rect x="17.3" y="71.3" width="4.1" height="2.5" fill="#ffffff"/>
<rect x="8.7" y="23.8" width="8.3" height="4.1" fill="#b0a890"/>
<rect x="178.9" y="44.0" width="4.6" height="2.9" fill="#e6e8ea"/>
<rect x="110.2" y="65.3" width="9.9" height="5.6" fill="#9a9ea4"/>
<rect x="20.3" y="51.4" width="8.9" height="2.8" fill="#9a9ea4"/>
<rect x="186.5" y="7.1" width="7.2" height="5.9" fill="#dcdfe2"/>
<rect x="134.0" y="74.3" width="7.4" height="4.3" fill="#dcdfe2"/>
<rect x="90.4" y="83.3" width="3.0" height="5.5" fill="#f4f4f4"/>
<rect x="53.1" y="47.2" width="8.2" height="2.1" fill="#a8acb2"/>
<rect x="117.4" y="61.2" width="4.4" height="3.4" fill="#f4f4f4"/>
<rect x="74.0" y="110.3" width="3.2" height="4.2" fill="#eef0f2"/>
<rect x="158.4" y="109.3" width="4.9" height="4.1" fill="#7a8494"/>
<rect x="185.7" y="16.6" width="4.0" height="3.2" fill="#7a8494"/>
<rect x="160.7" y="20.7" width="4.9" height="2.7" fill="#ffffff"/>
<rect x="108.6" y="120.9" width="8.4" height="4.6" fill="#e6e8ea"/>
<rect x="87.0" y="110.2" width="10.6" height="5.4" fill="#f4f4f4"/>
<rect x="75.6" y="10.5" width="7.9" height="2.3" fill="#4a5058"/>
<rect x="83.8" y="11.3" width="7.6" height="2.5" fill="#ffffff"/>
<rect x="17.0" y="44.3" width="2.7" height="6.4" fill="#eef0f2"/>
<rect x="122.0" y="121.2" width="7.6" height="4.4" fill="#384048"/>
<rect x="192.6" y="57.6" width="6.6" height="2.4" fill="#525a66"/>
<rect x="142.8" y="59.2" width="8.4" height="4.6" fill="#525a66"/>
<rect x="25.9" y="67.6" width="2.7" height="4.6" fill="#e6e8ea"/>
<rect x="134.2" y="30.9" width="5.6" height="2.8" fill="#ffffff"/>
<rect x="103.7" y="62.4" width="7.9" height="5.1" fill="#eef0f2"/>
<rect x="155.8" y="103.4" width="8.8" height="3.1" fill="#dcdfe2"/>
<rect x="141.0" y="125.6" width="9.2" height="4.4" fill="#525a66"/>
<rect x="85.1" y="118.8" width="10.9" height="6.8" fill="#a8acb2"/>
<rect x="17.1" y="58.1" width="5.4" height="4.4" fill="#ffffff"/>
<rect x="162.6" y="59.3" width="8.1" height="6.0" fill="#3e4650"/>
<rect x="176.2" y="98.7" width="8.9" height="4.4" fill="#525a66"/>
<rect x="14.1" y="120.0" width="8.6" height="4.3" fill="#e6e8ea"/>
<rect x="139.8" y="19.1" width="3.6" height="2.8" fill="#eef0f2"/>
<rect x="117.5" y="74.5" width="6.5" height="6.7" fill="#4a5058"/>
<rect x="1.2" y="100.9" width="8.7" height="2.5" fill="#eef0f2"/>
<rect x="82.5" y="110.3" width="9.5" height="3.1" fill="#8a9098"/>
<rect x="95.7" y="96.3" width="5.3" height="4.7" fill="#e6e8ea"/>
<rect x="176.3" y="43.0" width="6.4" height="4.9" fill="#f4f4f4"/>
<rect x="159.9" y="111.2" width="3.6" height="2.8" fill="#f4f4f4"/>
<rect x="150.0" y="76.1" width="9.1" height="2.7" fill="#3e4650"/>
<rect x="106.6" y="39.4" width="6.9" height="4.8" fill="#e6e8ea"/>
<rect x="171.0" y="4.4" width="4.1" height="2.2" fill="#384048"/>
<rect x="107.7" y="95.8" width="10.3" height="4.2" fill="#ffffff"/>
<rect x="116.4" y="22.9" width="4.9" height="4.5" fill="#ffffff"/>
<rect x="182.5" y="87.9" width="10.0" height="6.7" fill="#b0a890"/>
<rect x="172.9" y="23.3" width="6.3" height="4.1" fill="#8a9098"/>
<rect x="11.3" y="28.3" width="3.1" height="5.3" fill="#eef0f2"/>
<rect x="182.1" y="80.6" width="5.6" height="3.3" fill="#384048"/>
<rect x="40.3" y="120.8" width="5.9" height="4.4" fill="#eef0f2"/>
<rect x="28.8" y="53.1" width="6.9" height="3.7" fill="#525a66"/>
<rect x="15.2" y="44.6" width="5.4" height="4.3" fill="#f4f4f4"/>
<rect x="62.3" y="78.1" width="6.9" height="2.3" fill="#eef0f2"/>
<rect x="188.4" y="10.6" width="4.8" height="2.2" fill="#dcdfe2"/>
<rect x="145.9" y="103.6" width="9.7" height="5.4" fill="#f4f4f4"/>
<rect x="26.4" y="116.5" width="7.4" height="5.5" fill="#3e4650"/>
<rect x="154.5" y="20.8" width="10.1" height="3.3" fill="#3e4650"/>
<rect x="154.9" y="7.9" width="9.8" height="2.3" fill="#f4f4f4"/>
<rect x="-0.7" y="126.3" width="6.1" height="6.6" fill="#e6e8ea"/>
<rect x="100.8" y="28.0" width="3.4" height="2.8" fill="#4a5058"/>
<rect x="180.7" y="78.7" width="7.0" height="3.0" fill="#a8acb2"/>
<rect x="50.3" y="101.5" width="11.0" height="2.2" fill="#4a5058"/>
<rect x="98.3" y="28.9" width="6.3" height="5.3" fill="#f4f4f4"/>
<rect x="104.5" y="112.5" width="10.7" height="3.5" fill="#4a5058"/>
<rect x="64.5" y="105.2" width="8.5" height="5.2" fill="#8a9098"/>
<rect x="190.4" y="105.8" width="2.6" height="5.1" fill="#f4f4f4"/>
<rect x="29.2" y="8.0" width="9.7" height="6.4" fill="#dcdfe2"/>
<rect x="115.0" y="87.0" width="2.9" height="2.9" fill="#9a9ea4"/>
<rect x="48.9" y="122.0" width="10.8" height="4.7" fill="#8a9098"/>
<rect x="39.9" y="20.8" width="5.4" height="2.4" fill="#a8acb2"/>
<rect x="45.9" y="97.9" width="3.3" height="6.1" fill="#3e4650"/>
<rect x="74.6" y="36.0" width="7.9" height="2.4" fill="#eef0f2"/>
<rect x="126.5" y="90.1" width="10.0" height="3.9" fill="#7a8494"/>
<rect x="26.4" y="91.1" width="8.0" height="2.2" fill="#ffffff"/>
<rect x="120.6" y="92.4" width="9.4" height="2.7" fill="#ffffff"/>
<rect x="109.0" y="102.7" width="2.6" height="5.4" fill="#eef0f2"/>
<rect x="13.8" y="2.4" width="7.9" height="6.8" fill="#7a8494"/>
<rect x="107.0" y="78.6" width="7.8" height="5.4" fill="#9a9ea4"/>
<rect x="87.0" y="6.1" width="10.4" height="6.5" fill="#3e4650"/>
<rect x="143.9" y="58.6" width="9.4" height="6.2" fill="#a8acb2"/>
<rect x="42.5" y="81.5" width="6.4" height="6.2" fill="#525a66"/>
<rect x="148.1" y="77.2" width="8.0" height="2.4" fill="#525a66"/>
<rect x="125.4" y="87.1" width="7.8" height="2.7" fill="#7a8494"/>
<rect x="49.9" y="84.4" width="8.4" height="5.4" fill="#b0a890"/>
<rect x="53.3" y="57.6" width="9.0" height="7.0" fill="#dcdfe2"/>
<rect x="189.7" y="118.7" width="2.6" height="4.3" fill="#f4f4f4"/>
<rect x="192.8" y="47.3" width="10.3" height="6.7" fill="#3e4650"/>
<rect x="24.9" y="65.1" width="10.6" height="2.7" fill="#ffffff"/>
<rect x="52.1" y="11.6" width="5.6" height="4.5" fill="#f4f4f4"/>
<rect x="1.9" y="-2.5" width="6.7" height="4.3" fill="#a8acb2"/>
<rect x="79.0" y="45.9" width="3.5" height="3.7" fill="#8a9098"/>
<rect x="162.3" y="12.6" width="10.4" height="5.6" fill="#dcdfe2"/>
<rect x="46.9" y="5.4" width="5.8" height="6.3" fill="#384048"/>
<rect x="145.9" y="108.1" width="4.9" height="2.3" fill="#eef0f2"/>
<rect x="46.1" y="31.5" width="6.8" height="2.9" fill="#7a8494"/>
<rect x="171.2" y="102.6" width="7.9" height="6.6" fill="#ffffff"/>
<rect x="37.1" y="7.5" width="10.4" height="4.1" fill="#eef0f2"/>
<rect x="124.0" y="34.2" width="2.9" height="6.6" fill="#384048"/>
<rect x="78.7" y="33.6" width="4.7" height="5.7" fill="#f4f4f4"/>
<rect x="126.2" y="36.1" width="7.2" height="4.0" fill="#4a5058"/>
<rect x="11.8" y="62.1" width="9.4" height="4.8" fill="#8a9098"/>
<rect x="193.3" y="55.5" width="3.7" height="3.0" fill="#525a66"/>
<rect x="106.5" y="38.5" width="5.6" height="6.0" fill="#3e4650"/>
<rect x="144.7" y="50.7" width="6.0" height="4.6" fill="#8a9098"/>
<rect x="145.2" y="61.8" width="7.4" height="3.8" fill="#ffffff"/>
<rect x="121.0" y="109.2" width="4.3" height="3.4" fill="#7a8494"/>
<rect x="124.2" y="53.1" width="5.2" height="6.1" fill="#eef0f2"/>
<rect x="3.4" y="89.2" width="10.1" height="4.4" fill="#e6e8ea"/>
<rect x="11.4" y="117.9" width="10.4" height="4.6" fill="#7a8494"/>
<rect x="45.9" y="11.2" width="3.8" height="4.6" fill="#f4f4f4"/>
<rect x="13.7" y="98.0" width="2.5" height="2.6" fill="#e6e8ea"/>
<rect x="124.2" y="36.5" width="3.6" height="3.3" fill="#e6e8ea"/>
<rect x="16.6" y="36.0" width="10.5" height="3.0" fill="#b0a890"/>
<rect x="-2.8" y="66.9" width="11.0" height="3.4" fill="#a8acb2"/>
<rect x="90.6" y="27.5" width="4.6" height="6.8" fill="#dcdfe2"/>
<rect x="7.9" y="22.2" width="10.0" height="5.2" fill="#4a5058"/>
<rect x="128.5" y="117.3" width="4.4" height="2.2" fill="#7a8494"/>
<rect x="68.4" y="48.5" width="2.6" height="3.5" fill="#e6e8ea"/>
<rect x="37.4" y="123.1" width="5.1" height="6.1" fill="#a8acb2"/>
<rect x="49.2" y="112.6" width="3.4" height="5.1" fill="#eef0f2"/>
<rect x="92.6" y="115.4" width="3.0" height="5.0" fill="#e6e8ea"/>
<rect x="39.0" y="123.6" width="3.7" height="2.3" fill="#384048"/>
<rect x="85.6" y="89.6" width="5.2" height="2.6" fill="#4a5058"/>
<rect x="61.9" y="21.1" width="10.5" height="5.7" fill="#384048"/>
<rect x="162.3" y="125.0" width="6.3" height="2.5" fill="#3e4650"/>
<rect x="66.2" y="121.2" width="3.6" height="6.8" fill="#525a66"/>
<rect x="148.4" y="37.1" width="9.3" height="2.4" fill="#eef0f2"/>
<rect x="70.4" y="116.5" width="4.1" height="3.8" fill="#e6e8ea"/>
<rect x="121.4" y="29.2" width="7.8" height="4.0" fill="#7a8494"/>
<rect x="9.3" y="116.6" width="4.7" height="5.7" fill="#dcdfe2"/>
<rect x="68.5" y="40.5" width="10.6" height="2.2" fill="#dcdfe2"/>
<rect x="179.1" y="35.7" width="8.6" height="5.0" fill="#e6e8ea"/>
<rect x="1.8" y="27.4" width="6.5" height="6.8" fill="#f4f4f4"/>
<rect x="152.6" y="115.8" width="9.4" height="2.7" fill="#9a9ea4"/>
<rect x="155.1" y="93.0" width="9.5" height="5.9" fill="#dcdfe2"/>
<rect x="166.7" y="56.9" width="9.2" height="5.0" fill="#f4f4f4"/>
<rect x="145.3" y="29.1" width="3.1" height="2.2" fill="#dcdfe2"/>
<rect x="28.7" y="52.5" width="3.4" height="2.4" fill="#eef0f2"/>
<rect x="16.0" y="61.8" width="8.5" height="4.2" fill="#7a8494"/>
<rect x="87.8" y="112.9" width="4.5" height="4.7" fill="#e6e8ea"/>
<rect x="150.6" y="35.2" width="4.9" height="3.3" fill="#8a9098"/>
<rect x="36.2" y="29.2" width="4.6" height="2.8" fill="#ffffff"/>
<rect x="34.1" y="5.4" width="4.6" height="3.2" fill="#e6e8ea"/>
<rect x="125.7" y="125.8" width="3.4" height="4.4" fill="#f4f4f4"/>
<rect x="177.1" y="2.2" width="5.0" height="2.6" fill="#4a5058"/>
<rect x="180.2" y="45.4" width="9.9" height="4.2" fill="#9a9ea4"/>
<rect x="17.8" y="74.5" width="7.8" height="3.1" fill="#a8acb2"/>
<rect x="5.7" y="127.0" width="2.8" height="5.7" fill="#e6e8ea"/>
<rect x="158.3" y="50.2" width="5.7" height="5.1" fill="#3e4650"/>
<rect x="153.7" y="68.2" width="3.0" height="2.5" fill="#b0a890"/>
<rect x="27.4" y="66.4" width="8.1" height="4.0" fill="#8a9098"/>
<rect x="128.6" y="51.3" width="2.9" height="5.7" fill="#f4f4f4"/>
<rect x="79.0" y="109.4" width="11.0" height="3.8" fill="#384048"/>
<rect x="37.1" y="-2.2" width="10.2" height="4.1" fill="#f4f4f4"/>
<rect x="110.8" y="44.4" width="9.1" height="2.6" fill="#4a5058"/>
<rect x="123.2" y="115.3" width="3.3" height="5.1" fill="#b0a890"/>
<rect x="30.8" y="42.2" width="3.9" height="2.9" fill="#384048"/>
<rect x="93.6" y="101.6" width="10.7" height="3.0" fill="#3e4650"/>
<rect x="189.2" y="59.8" width="3.0" height="6.6" fill="#b0a890"/>
<rect x="132.6" y="112.8" width="7.9" height="6.3" fill="#ffffff"/>
<rect x="163.7" y="104.8" width="4.1" height="3.1" fill="#b0a890"/>
<rect x="27.8" y="43.7" width="3.8" height="6.9" fill="#eef0f2"/>
<rect x="5.1" y="70.1" width="8.9" height="2.2" fill="#e6e8ea"/>
<rect x="73.8" y="56.2" width="9.7" height="5.9" fill="#dcdfe2"/>
<rect x="111.8" y="52.3" width="8.1" height="4.2" fill="#9a9ea4"/>
<rect x="-2.3" y="125.2" width="6.5" height="4.2" fill="#f4f4f4"/>
<rect x="161.8" y="102.4" width="5.9" height="2.3" fill="#8a9098"/>
<rect x="15.1" y="54.5" width="6.8" height="2.2" fill="#e6e8ea"/>
<rect x="178.7" y="37.8" width="8.6" height="2.4" fill="#f4f4f4"/>
<rect x="125.6" y="99.0" width="2.7" height="2.3" fill="#e6e8ea"/>
<rect x="35.2" y="124.6" width="6.7" height="6.8" fill="#eef0f2"/>
<rect x="132.2" y="90.7" width="4.4" height="6.2" fill="#dcdfe2"/>
<rect x="28.3" y="113.5" width="4.8" height="6.1" fill="#384048"/>
<rect x="38.0" y="31.2" width="6.8" height="3.6" fill="#4a5058"/>
<rect x="76.5" y="79.8" width="4.9" height="3.6" fill="#8a9098"/>
<rect x="19.7" y="66.0" width="7.9" height="3.8" fill="#ffffff"/>
<rect x="99.7" y="86.5" width="10.1" height="3.3" fill="#f4f4f4"/>
<rect x="142.4" y="45.3" width="5.7" height="3.8" fill="#525a66"/>
<rect x="147.6" y="54.5" width="4.0" height="5.7" fill="#525a66"/>
<rect x="58.1" y="122.6" width="9.9" height="6.6" fill="#e6e8ea"/>
<rect x="144.2" y="25.8" width="5.0" height="5.1" fill="#8a9098"/>
<rect x="173.4" y="14.2" width="4.4" height="5.3" fill="#3e4650"/>
<rect x="108.7" y="36.5" width="6.9" height="4.7" fill="#8a9098"/>
<rect x="113.1" y="23.5" width="7.8" height="4.4" fill="#4a5058"/>
<rect x="136.4" y="55.6" width="3.0" height="2.7" fill="#dcdfe2"/>
<rect x="76.2" y="31.4" width="2.6" height="5.2" fill="#dcdfe2"/>
<rect x="114.2" y="72.2" width="7.6" height="4.6" fill="#a8acb2"/>
<rect x="175.0" y="2.7" width="7.0" height="4.0" fill="#9a9ea4"/>
<rect x="176.6" y="10.6" width="7.7" height="5.3" fill="#384048"/>
<rect x="36.3" y="76.1" width="6.8" height="5.2" fill="#eef0f2"/>
<rect x="97.2" y="5.3" width="7.8" height="7.0" fill="#f4f4f4"/>
<rect x="137.9" y="-2.2" width="9.7" height="5.7" fill="#7a8494"/>
<rect x="31.6" y="126.6" width="4.7" height="5.2" fill="#525a66"/>
<rect x="137.2" y="31.6" width="7.2" height="4.2" fill="#ffffff"/>
<rect x="188.5" y="35.4" width="10.4" height="6.5" fill="#3e4650"/>
<rect x="30.4" y="114.6" width="9.7" height="3.0" fill="#525a66"/>
<rect x="34.8" y="47.5" width="7.6" height="3.9" fill="#ffffff"/>
<rect x="89.5" y="106.2" width="8.4" height="6.3" fill="#a8acb2"/>
<rect x="109.4" y="37.0" width="4.3" height="5.1" fill="#4a5058"/>
<rect x="25.5" y="0.5" width="3.4" height="6.6" fill="#a8acb2"/>
<rect x="135.0" y="1.0" width="3.7" height="5.2" fill="#3e4650"/>
<rect x="142.1" y="5.5" width="7.5" height="3.8" fill="#ffffff"/>
<rect x="172.6" y="5.6" width="9.9" height="6.6" fill="#e6e8ea"/>
<rect x="45.6" y="23.4" width="2.8" height="6.7" fill="#e6e8ea"/>
<rect x="159.5" y="79.1" width="4.9" height="2.5" fill="#4a5058"/>
<rect x="55.0" y="40.7" width="4.7" height="3.8" fill="#e6e8ea"/>
<rect x="138.0" y="44.8" width="5.2" height="6.8" fill="#dcdfe2"/>
<rect x="118.8" y="1.0" width="6.0" height="4.2" fill="#dcdfe2"/>
<rect x="89.4" y="3.3" width="7.3" height="5.6" fill="#ffffff"/>
<rect x="158.5" y="19.1" width="2.5" height="3.0" fill="#e6e8ea"/>
<rect x="-2.1" y="60.8" width="6.7" height="6.0" fill="#384048"/>
<rect x="113.7" y="121.4" width="6.9" height="4.9" fill="#4a5058"/>
<rect x="181.8" y="27.1" width="3.9" height="6.7" fill="#f4f4f4"/>
<rect x="152.2" y="87.6" width="9.2" height="5.1" fill="#7a8494"/>
<rect x="179.9" y="112.9" width="8.8" height="4.1" fill="#dcdfe2"/>
<rect x="37.6" y="31.2" width="10.2" height="4.5" fill="#a8acb2"/>
<rect x="183.0" y="13.5" width="7.5" height="5.4" fill="#e6e8ea"/>
<rect x="65.7" y="39.5" width="3.8" height="6.2" fill="#dcdfe2"/>
<rect x="30.4" y="54.0" width="9.1" height="4.9" fill="#384048"/>
<rect x="123.6" y="87.6" width="6.8" height="3.3" fill="#ffffff"/>
<rect x="27.5" y="17.3" width="4.6" height="3.6" fill="#eef0f2"/>
<rect x="43.5" y="121.3" width="4.7" height="6.8" fill="#eef0f2"/>
<rect x="186.6" y="10.2" width="5.8" height="6.9" fill="#dcdfe2"/>
<rect x="82.7" y="22.5" width="7.9" height="2.5" fill="#384048"/>
<rect x="88.4" y="-1.4" width="9.8" height="4.2" fill="#8a9098"/>
<rect x="88.3" y="15.4" width="7.6" height="4.0" fill="#f4f4f4"/>
<rect x="135.1" y="73.4" width="8.0" height="6.2" fill="#ffffff"/>
<rect x="164.9" y="85.3" width="8.0" height="4.3" fill="#9a9ea4"/>
<rect x="173.3" y="28.5" width="5.9" height="5.6" fill="#384048"/>
<rect x="92.1" y="-0.4" width="9.8" height="4.6" fill="#eef0f2"/>
<rect x="173.2" y="39.6" width="2.6" height="6.2" fill="#e6e8ea"/>
<rect x="4.5" y="67.6" width="3.9" height="5.9" fill="#ffffff"/>
<rect x="65.6" y="107.1" width="6.4" height="3.0" fill="#9a9ea4"/>
<rect x="122.9" y="104.8" width="6.9" height="4.1" fill="#eef0f2"/>
<rect x="192.1" y="20.9" width="6.9" height="6.7" fill="#ffffff"/>
<rect x="67.0" y="4.4" width="4.8" height="4.0" fill="#384048"/>
<rect x="177.3" y="78.7" width="8.2" height="4.9" fill="#525a66"/>
<rect x="143.1" y="119.2" width="7.0" height="3.1" fill="#f4f4f4"/>
<rect x="88.0" y="18.4" width="10.4" height="2.3" fill="#eef0f2"/>
<rect x="89.4" y="70.1" width="4.4" height="6.8" fill="#7a8494"/>
<rect x="89.2" y="35.3" width="7.2" height="2.6" fill="#dcdfe2"/>
<rect x="151.4" y="27.0" width="8.5" height="5.4" fill="#eef0f2"/>
<rect x="91.9" y="101.7" width="9.3" height="3.8" fill="#dcdfe2"/>
<rect x="91.5" y="52.7" width="7.9" height="5.3" fill="#8a9098"/>
<rect x="165.3" y="4.4" width="9.5" height="6.5" fill="#eef0f2"/>
<rect x="101.5" y="41.9" width="7.5" height="5.3" fill="#3e4650"/>
<rect x="126.2" y="29.5" width="3.4" height="2.7" fill="#7a8494"/>
<rect x="65.2" y="16.8" width="10.2" height="6.0" fill="#3e4650"/>
<rect x="128.7" y="113.2" width="9.2" height="6.2" fill="#4a5058"/>
<rect x="101.6" y="93.4" width="6.2" height="6.4" fill="#dcdfe2"/>
<rect x="79.6" y="104.5" width="6.5" height="4.8" fill="#a8acb2"/>
<rect x="135.0" y="29.1" width="3.9" height="5.0" fill="#eef0f2"/>
<rect x="162.6" y="57.8" width="7.3" height="5.3" fill="#dcdfe2"/>
<rect x="80.9" y="127.0" width="8.2" height="2.9" fill="#9a9ea4"/>
<rect x="1.1" y="3.0" width="8.8" height="7.0" fill="#e6e8ea"/>
<rect x="97.6" y="60.0" width="10.1" height="2.2" fill="#eef0f2"/>
<rect x="63.7" y="109.0" width="5.6" height="4.4" fill="#eef0f2"/>
<rect x="53.0" y="41.5" width="4.6" height="2.3" fill="#8a9098"/>
<rect x="160.1" y="49.5" width="6.8" height="3.4" fill="#eef0f2"/>
<rect x="125.9" y="100.0" width="5.3" height="3.6" fill="#b0a890"/>
<rect x="188.6" y="8.4" width="11.0" height="4.0" fill="#f4f4f4"/>
<rect x="104.4" y="3.5" width="5.1" height="2.0" fill="#384048"/>
<rect x="116.9" y="82.5" width="9.2" height="6.5" fill="#ffffff"/>
<rect x="26.0" y="84.6" width="8.4" height="6.4" fill="#3e4650"/>
<rect x="128.4" y="56.5" width="9.0" height="2.5" fill="#3e4650"/>
<rect x="80.0" y="10.1" width="10.4" height="2.1" fill="#eef0f2"/>
<rect x="151.9" y="70.1" width="4.7" height="3.5" fill="#8a9098"/>
<rect x="1.0" y="70.6" width="7.4" height="6.6" fill="#b0a890"/>
<rect x="4.8" y="12.5" width="9.4" height="4.9" fill="#f4f4f4"/>
<rect x="10.2" y="85.4" width="7.5" height="7.0" fill="#eef0f2"/>
<rect x="90.7" y="50.6" width="3.4" height="5.2" fill="#4a5058"/>
<rect x="120.5" y="52.5" width="2.6" height="5.3" fill="#e6e8ea"/>
<rect x="40.0" y="12.8" width="6.5" height="3.4" fill="#f4f4f4"/>
<rect x="141.5" y="21.4" width="2.9" height="5.9" fill="#eef0f2"/>
<rect x="140.8" y="8.0" width="7.8" height="5.5" fill="#8a9098"/>
<rect x="177.0" y="3.8" width="2.8" height="2.3" fill="#ffffff"/>
<rect x="12.7" y="37.4" width="8.7" height="2.8" fill="#f4f4f4"/>
<rect x="117.0" y="38.1" width="10.6" height="5.6" fill="#a8acb2"/>
<rect x="25.5" y="100.7" width="5.6" height="5.2" fill="#f4f4f4"/>
<rect x="91.0" y="98.2" width="6.3" height="3.4" fill="#dcdfe2"/>
<rect x="54.6" y="4.9" width="10.8" height="5.5" fill="#dcdfe2"/>
<rect x="168.3" y="91.3" width="2.6" height="2.8" fill="#ffffff"/>
<rect x="81.4" y="112.5" width="5.7" height="5.4" fill="#eef0f2"/>
<rect x="156.1" y="33.8" width="2.5" height="3.3" fill="#b0a890"/>
<rect x="178.4" y="96.2" width="9.2" height="3.4" fill="#4a5058"/>
<rect x="50.9" y="107.7" width="9.4" height="5.4" fill="#dcdfe2"/>
<rect x="102.3" y="67.2" width="6.6" height="3.9" fill="#eef0f2"/>
<rect x="58.0" y="4.5" width="5.9" height="5.5" fill="#ffffff"/>
<rect x="145.0" y="99.9" width="6.4" height="2.4" fill="#e6e8ea"/>
<rect x="42.9" y="72.3" width="10.1" height="6.4" fill="#f4f4f4"/>
<rect x="96.7" y="23.2" width="4.3" height="2.5" fill="#dcdfe2"/>
<rect x="68.5" y="70.4" width="5.9" height="4.6" fill="#3e4650"/>
<rect x="178.8" y="61.1" width="9.9" height="3.9" fill="#9a9ea4"/>
<rect x="27.8" y="74.6" width="5.4" height="4.6" fill="#3e4650"/>
<rect x="37.3" y="110.2" width="7.3" height="4.9" fill="#525a66"/>
<rect x="80.9" y="120.0" width="9.0" height="6.1" fill="#dcdfe2"/>
<rect x="163.2" y="41.0" width="11.0" height="3.9" fill="#3e4650"/>
<rect x="106.8" y="110.2" width="6.4" height="6.7" fill="#e6e8ea"/>
<rect x="167.0" y="80.2" width="10.3" height="5.5" fill="#525a66"/>
<rect x="108.2" y="80.3" width="10.6" height="5.3" fill="#7a8494"/>
<rect x="164.4" y="45.2" width="4.5" height="5.6" fill="#525a66"/>
<rect x="182.4" y="4.7" width="7.2" height="2.1" fill="#dcdfe2"/>
<rect x="151.9" y="89.2" width="8.0" height="6.9" fill="#4a5058"/>
<rect x="59.6" y="-2.2" width="4.2" height="5.7" fill="#f4f4f4"/>
<rect x="146.3" y="10.7" width="5.3" height="3.3" fill="#384048"/>
<rect x="71.8" y="54.4" width="9.4" height="6.6" fill="#f4f4f4"/>
<rect x="138.3" y="22.4" width="2.8" height="6.6" fill="#b0a890"/>
<rect x="167.8" y="112.5" width="3.7" height="4.2" fill="#384048"/>
<rect x="162.9" y="78.7" width="6.3" height="3.7" fill="#f4f4f4"/>
<rect x="19.8" y="44.6" width="5.3" height="5.7" fill="#384048"/>
<rect x="106.0" y="15.8" width="9.9" height="3.3" fill="#a8acb2"/>
<rect x="2.0" y="71.2" width="5.0" height="6.0" fill="#9a9ea4"/>
<rect x="59.7" y="114.4" width="3.5" height="6.9" fill="#4a5058"/>
<rect x="107.3" y="105.6" width="3.5" height="5.8" fill="#f4f4f4"/>
<rect x="192.2" y="126.8" width="10.4" height="2.5" fill="#a8acb2"/>
<rect x="8.3" y="91.4" width="5.0" height="6.9" fill="#525a66"/>
 </g>
</svg>
<!-- P8 dubai -->
<svg class="ph" style="left:1054px;top:663px" width="193" height="127" viewBox="0 0 193 127">
 <defs>
  <linearGradient id="p8sky" x1="0" y1="0" x2="1" y2="0.8"><stop offset="0" stop-color="#3a74b8"/><stop offset="0.55" stop-color="#8aa6c4"/><stop offset="1" stop-color="#c4c8cc"/></linearGradient>
  <linearGradient id="p8g" x1="0" y1="0" x2="0" y2="1"><stop offset="0" stop-color="#d0c8b4"/><stop offset="0.5" stop-color="#c8b89a"/><stop offset="1" stop-color="#b8a888"/></linearGradient>
  <filter id="bl8" x="-5%" y="-5%" width="110%" height="110%"><feGaussianBlur stdDeviation="0.9"/></filter>
  <filter id="bl8b" x="-5%" y="-5%" width="110%" height="110%"><feGaussianBlur stdDeviation="2.5"/></filter>
 </defs>
 <rect x="-5" y="-5" width="203" height="137" fill="url(#p8sky)"/>
 <g filter="url(#bl8b)">
  <path d="M-5 35L60 36 193 30V48L100 46 40 50 -5 58Z" fill="#a8b8c8"/>
  <path d="M-5 38L80 40 40 50 -5 56Z" fill="#6a8cb0"/>
 </g>
 <g filter="url(#bl8)">
  <path d="M-5 58L40 50 100 46 193 45V132H-5Z" fill="url(#p8g)"/>
<rect x="87.3" y="93.1" width="7.5" height="3.1" fill="#e0d8c0" opacity="0.7"/>
<rect x="165.0" y="64.6" width="6.8" height="3.2" fill="#e0d8c0" opacity="0.7"/>
<rect x="153.0" y="57.2" width="3.8" height="1.8" fill="#706858" opacity="0.7"/>
<rect x="122.4" y="95.8" width="4.4" height="3.1" fill="#706858" opacity="0.7"/>
<rect x="118.8" y="62.1" width="2.1" height="3.3" fill="#a89a80" opacity="0.7"/>
<rect x="6.9" y="117.7" width="5.6" height="4.2" fill="#8a8070" opacity="0.7"/>
<rect x="85.0" y="114.9" width="5.1" height="3.7" fill="#b8ac90" opacity="0.7"/>
<rect x="0.9" y="56.5" width="5.9" height="2.9" fill="#e0d8c0" opacity="0.7"/>
<rect x="192.2" y="114.7" width="6.2" height="2.6" fill="#d8cdb0" opacity="0.7"/>
<rect x="99.0" y="52.3" width="5.4" height="1.9" fill="#a89a80" opacity="0.7"/>
<rect x="163.4" y="79.8" width="7.7" height="4.5" fill="#a89a80" opacity="0.7"/>
<rect x="41.2" y="121.4" width="2.3" height="2.8" fill="#706858" opacity="0.7"/>
<rect x="76.7" y="55.6" width="5.8" height="4.2" fill="#8a8070" opacity="0.7"/>
<rect x="65.0" y="74.0" width="2.1" height="2.9" fill="#a89a80" opacity="0.7"/>
<rect x="26.0" y="104.4" width="2.1" height="3.1" fill="#b8ac90" opacity="0.7"/>
<rect x="34.3" y="93.1" width="4.7" height="2.2" fill="#706858" opacity="0.7"/>
<rect x="148.5" y="82.3" width="4.3" height="2.9" fill="#d8cdb0" opacity="0.7"/>
<rect x="0.1" y="116.6" width="7.8" height="3.6" fill="#a89a80" opacity="0.7"/>
<rect x="40.7" y="80.4" width="7.1" height="3.7" fill="#a89a80" opacity="0.7"/>
<rect x="8.1" y="61.3" width="4.6" height="1.5" fill="#e0d8c0" opacity="0.7"/>
<rect x="63.5" y="72.8" width="2.4" height="1.8" fill="#e0d8c0" opacity="0.7"/>
<rect x="122.9" y="51.2" width="4.2" height="3.7" fill="#d8cdb0" opacity="0.7"/>
<rect x="185.1" y="87.2" width="5.4" height="4.5" fill="#d8cdb0" opacity="0.7"/>
<rect x="121.1" y="73.9" width="3.4" height="3.6" fill="#706858" opacity="0.7"/>
<rect x="36.6" y="106.9" width="7.6" height="2.2" fill="#b8ac90" opacity="0.7"/>
<rect x="170.3" y="96.5" width="4.5" height="1.9" fill="#a89a80" opacity="0.7"/>
<rect x="98.9" y="69.6" width="6.4" height="2.9" fill="#b8ac90" opacity="0.7"/>
<rect x="159.0" y="95.9" width="3.8" height="2.1" fill="#706858" opacity="0.7"/>
<rect x="188.6" y="59.7" width="4.9" height="3.8" fill="#e0d8c0" opacity="0.7"/>
<rect x="118.6" y="71.6" width="7.5" height="2.2" fill="#a89a80" opacity="0.7"/>
<rect x="13.3" y="81.7" width="3.5" height="1.7" fill="#8a8070" opacity="0.7"/>
<rect x="71.2" y="94.1" width="2.8" height="2.8" fill="#b8ac90" opacity="0.7"/>
<rect x="189.2" y="100.6" width="6.1" height="3.5" fill="#d8cdb0" opacity="0.7"/>
<rect x="113.8" y="121.1" width="4.8" height="2.8" fill="#8a8070" opacity="0.7"/>
<rect x="185.8" y="51.6" width="5.8" height="3.2" fill="#706858" opacity="0.7"/>
<rect x="60.0" y="60.5" width="2.4" height="3.1" fill="#8a8070" opacity="0.7"/>
<rect x="142.2" y="119.3" width="6.4" height="4.0" fill="#8a8070" opacity="0.7"/>
<rect x="67.9" y="102.8" width="7.4" height="4.5" fill="#b8ac90" opacity="0.7"/>
<rect x="182.2" y="52.3" width="5.0" height="1.6" fill="#706858" opacity="0.7"/>
<rect x="73.8" y="94.9" width="5.7" height="1.8" fill="#706858" opacity="0.7"/>
<rect x="22.3" y="69.8" width="4.5" height="2.7" fill="#706858" opacity="0.7"/>
<rect x="134.0" y="85.2" width="4.8" height="3.4" fill="#e0d8c0" opacity="0.7"/>
<rect x="144.8" y="52.3" width="5.6" height="3.2" fill="#d8cdb0" opacity="0.7"/>
<rect x="184.8" y="58.7" width="6.7" height="3.8" fill="#b8ac90" opacity="0.7"/>
<rect x="49.4" y="50.9" width="3.8" height="3.9" fill="#d8cdb0" opacity="0.7"/>
<rect x="100.1" y="108.0" width="4.1" height="4.8" fill="#b8ac90" opacity="0.7"/>
<rect x="172.1" y="75.2" width="6.0" height="2.2" fill="#b8ac90" opacity="0.7"/>
<rect x="155.1" y="108.1" width="3.2" height="2.2" fill="#d8cdb0" opacity="0.7"/>
<rect x="112.5" y="74.4" width="2.8" height="3.2" fill="#a89a80" opacity="0.7"/>
<rect x="137.3" y="123.2" width="3.7" height="2.1" fill="#b8ac90" opacity="0.7"/>
<rect x="91.0" y="121.3" width="7.0" height="2.8" fill="#e0d8c0" opacity="0.7"/>
<rect x="95.3" y="74.3" width="7.0" height="4.9" fill="#b8ac90" opacity="0.7"/>
<rect x="61.8" y="113.8" width="3.7" height="3.6" fill="#706858" opacity="0.7"/>
<rect x="136.8" y="93.9" width="3.9" height="4.3" fill="#a89a80" opacity="0.7"/>
<rect x="123.7" y="81.2" width="3.1" height="4.2" fill="#8a8070" opacity="0.7"/>
<rect x="45.8" y="60.8" width="2.3" height="3.7" fill="#b8ac90" opacity="0.7"/>
<rect x="21.0" y="91.2" width="5.8" height="2.8" fill="#a89a80" opacity="0.7"/>
<rect x="132.1" y="65.3" width="4.9" height="2.1" fill="#a89a80" opacity="0.7"/>
<rect x="145.7" y="91.2" width="2.2" height="2.3" fill="#8a8070" opacity="0.7"/>
<rect x="104.2" y="122.9" width="5.0" height="5.0" fill="#d8cdb0" opacity="0.7"/>
<rect x="75.9" y="111.0" width="7.4" height="1.8" fill="#706858" opacity="0.7"/>
<rect x="74.9" y="84.7" width="3.2" height="4.6" fill="#a89a80" opacity="0.7"/>
<rect x="72.7" y="93.8" width="7.3" height="4.3" fill="#8a8070" opacity="0.7"/>
<rect x="89.5" y="100.2" width="3.2" height="4.0" fill="#706858" opacity="0.7"/>
<rect x="178.4" y="59.5" width="3.5" height="2.9" fill="#a89a80" opacity="0.7"/>
<rect x="188.6" y="91.3" width="6.7" height="2.6" fill="#706858" opacity="0.7"/>
<rect x="165.2" y="76.8" width="2.5" height="3.0" fill="#e0d8c0" opacity="0.7"/>
<rect x="81.3" y="71.2" width="7.5" height="2.3" fill="#a89a80" opacity="0.7"/>
<rect x="82.8" y="52.7" width="5.2" height="3.9" fill="#d8cdb0" opacity="0.7"/>
<rect x="90.8" y="127.0" width="7.4" height="3.3" fill="#706858" opacity="0.7"/>
<rect x="133.0" y="122.8" width="5.0" height="4.8" fill="#a89a80" opacity="0.7"/>
<rect x="146.3" y="83.8" width="5.4" height="4.4" fill="#e0d8c0" opacity="0.7"/>
<rect x="123.3" y="90.3" width="7.1" height="3.5" fill="#8a8070" opacity="0.7"/>
<rect x="129.6" y="123.5" width="7.2" height="3.6" fill="#8a8070" opacity="0.7"/>
<rect x="164.2" y="124.6" width="5.1" height="3.5" fill="#d8cdb0" opacity="0.7"/>
<rect x="79.3" y="58.8" width="2.0" height="2.8" fill="#e0d8c0" opacity="0.7"/>
<rect x="187.1" y="89.7" width="4.4" height="4.3" fill="#e0d8c0" opacity="0.7"/>
<rect x="23.5" y="57.2" width="3.0" height="4.8" fill="#b8ac90" opacity="0.7"/>
<rect x="79.9" y="123.7" width="7.5" height="2.4" fill="#b8ac90" opacity="0.7"/>
<rect x="95.2" y="76.2" width="7.4" height="4.8" fill="#b8ac90" opacity="0.7"/>
<rect x="101.3" y="58.4" width="4.5" height="1.6" fill="#8a8070" opacity="0.7"/>
<rect x="25.0" y="110.0" width="2.1" height="2.2" fill="#d8cdb0" opacity="0.7"/>
<rect x="2.3" y="71.9" width="6.3" height="2.4" fill="#b8ac90" opacity="0.7"/>
<rect x="20.2" y="106.3" width="2.7" height="3.3" fill="#8a8070" opacity="0.7"/>
<rect x="138.5" y="104.0" width="7.3" height="1.6" fill="#706858" opacity="0.7"/>
<rect x="79.8" y="90.8" width="3.0" height="2.2" fill="#706858" opacity="0.7"/>
<rect x="103.1" y="66.8" width="3.3" height="3.4" fill="#e0d8c0" opacity="0.7"/>
<rect x="165.4" y="67.9" width="6.4" height="4.3" fill="#d8cdb0" opacity="0.7"/>
<rect x="61.0" y="74.3" width="7.5" height="2.3" fill="#d8cdb0" opacity="0.7"/>
<rect x="171.3" y="60.3" width="3.4" height="4.0" fill="#8a8070" opacity="0.7"/>
<rect x="74.9" y="83.5" width="7.6" height="3.4" fill="#706858" opacity="0.7"/>
<rect x="24.3" y="81.0" width="6.1" height="1.6" fill="#d8cdb0" opacity="0.7"/>
<rect x="110.0" y="77.5" width="6.9" height="2.8" fill="#706858" opacity="0.7"/>
<rect x="97.6" y="108.4" width="5.0" height="3.9" fill="#d8cdb0" opacity="0.7"/>
<rect x="154.9" y="87.1" width="2.1" height="4.2" fill="#e0d8c0" opacity="0.7"/>
<rect x="99.4" y="93.8" width="2.9" height="2.1" fill="#d8cdb0" opacity="0.7"/>
<rect x="33.3" y="62.2" width="3.7" height="3.9" fill="#e0d8c0" opacity="0.7"/>
<rect x="12.0" y="123.3" width="4.8" height="4.2" fill="#8a8070" opacity="0.7"/>
<rect x="75.4" y="82.8" width="4.1" height="2.2" fill="#8a8070" opacity="0.7"/>
<rect x="2.6" y="104.0" width="7.1" height="2.1" fill="#b8ac90" opacity="0.7"/>
<rect x="69.4" y="78.5" width="7.5" height="3.6" fill="#a89a80" opacity="0.7"/>
<rect x="98.9" y="51.2" width="7.4" height="4.3" fill="#706858" opacity="0.7"/>
<rect x="169.0" y="120.0" width="7.6" height="3.5" fill="#d8cdb0" opacity="0.7"/>
<rect x="97.3" y="125.7" width="6.8" height="2.4" fill="#a89a80" opacity="0.7"/>
<rect x="143.7" y="109.9" width="6.9" height="2.9" fill="#8a8070" opacity="0.7"/>
<rect x="169.8" y="103.5" width="6.6" height="4.2" fill="#b8ac90" opacity="0.7"/>
<rect x="39.9" y="64.2" width="6.8" height="2.6" fill="#a89a80" opacity="0.7"/>
<rect x="2.0" y="77.4" width="5.8" height="3.7" fill="#d8cdb0" opacity="0.7"/>
<rect x="52.7" y="124.0" width="3.8" height="2.3" fill="#b8ac90" opacity="0.7"/>
<rect x="109.9" y="91.0" width="4.3" height="5.0" fill="#706858" opacity="0.7"/>
<rect x="41.2" y="59.2" width="4.4" height="3.5" fill="#a89a80" opacity="0.7"/>
<rect x="118.8" y="106.9" width="3.5" height="2.9" fill="#a89a80" opacity="0.7"/>
<rect x="146.9" y="99.9" width="2.1" height="2.4" fill="#8a8070" opacity="0.7"/>
<rect x="174.8" y="92.4" width="5.0" height="4.9" fill="#e0d8c0" opacity="0.7"/>
<rect x="163.4" y="57.7" width="4.7" height="3.8" fill="#e0d8c0" opacity="0.7"/>
<rect x="115.3" y="108.5" width="2.3" height="4.8" fill="#d8cdb0" opacity="0.7"/>
<rect x="74.5" y="124.7" width="7.1" height="3.4" fill="#e0d8c0" opacity="0.7"/>
<rect x="11.3" y="122.8" width="4.5" height="3.3" fill="#e0d8c0" opacity="0.7"/>
<rect x="60.3" y="90.8" width="4.9" height="2.4" fill="#8a8070" opacity="0.7"/>
<rect x="128.1" y="107.6" width="2.2" height="4.2" fill="#e0d8c0" opacity="0.7"/>
<rect x="8.3" y="62.1" width="6.5" height="2.9" fill="#8a8070" opacity="0.7"/>
<rect x="144.4" y="53.9" width="7.9" height="4.8" fill="#a89a80" opacity="0.7"/>
<rect x="153.9" y="67.2" width="6.3" height="2.4" fill="#d8cdb0" opacity="0.7"/>
<rect x="8.8" y="57.6" width="6.9" height="4.7" fill="#d8cdb0" opacity="0.7"/>
<rect x="188.9" y="112.9" width="5.6" height="1.9" fill="#e0d8c0" opacity="0.7"/>
<rect x="80.5" y="59.1" width="7.2" height="2.7" fill="#d8cdb0" opacity="0.7"/>
<rect x="24.0" y="84.1" width="6.0" height="3.1" fill="#8a8070" opacity="0.7"/>
<rect x="123.4" y="102.5" width="4.2" height="4.1" fill="#d8cdb0" opacity="0.7"/>
<rect x="183.9" y="106.5" width="3.4" height="1.9" fill="#8a8070" opacity="0.7"/>
<rect x="151.4" y="98.1" width="4.2" height="2.5" fill="#706858" opacity="0.7"/>
<rect x="139.9" y="103.8" width="3.1" height="2.5" fill="#d8cdb0" opacity="0.7"/>
<rect x="36.6" y="69.2" width="7.9" height="4.7" fill="#706858" opacity="0.7"/>
<rect x="7.6" y="54.7" width="3.6" height="3.0" fill="#e0d8c0" opacity="0.7"/>
<rect x="7.3" y="67.1" width="3.7" height="4.1" fill="#706858" opacity="0.7"/>
<rect x="31.0" y="68.1" width="7.9" height="3.2" fill="#8a8070" opacity="0.7"/>
<rect x="40.7" y="76.5" width="6.5" height="4.4" fill="#a89a80" opacity="0.7"/>
<rect x="154.8" y="84.4" width="6.9" height="4.4" fill="#d8cdb0" opacity="0.7"/>
<rect x="85.8" y="107.5" width="4.3" height="2.0" fill="#d8cdb0" opacity="0.7"/>
<rect x="126.2" y="126.2" width="4.0" height="3.4" fill="#706858" opacity="0.7"/>
<rect x="159.4" y="64.2" width="5.9" height="3.5" fill="#b8ac90" opacity="0.7"/>
<rect x="96" y="62" width="5" height="48" fill="#8a8c94"/>
<rect x="104" y="55" width="6" height="55" fill="#9a9ca4"/>
<rect x="112" y="48" width="5" height="62" fill="#70747e"/>
<rect x="120" y="45" width="7" height="65" fill="#a0a2a8"/>
<rect x="128" y="52" width="5" height="58" fill="#7a7e88"/>
<rect x="140" y="40" width="8" height="70" fill="#8e9098"/>
<rect x="150" y="44" width="6" height="66" fill="#a4a6ac"/>
<rect x="160" y="50" width="6" height="60" fill="#7c8088"/>
<rect x="170" y="55" width="5" height="55" fill="#8a8c90"/>
<rect x="85" y="75" width="5" height="25" fill="#7a7468"/>
<rect x="60" y="78" width="6" height="22" fill="#8a8478"/>
<rect x="132" y="70" width="6" height="30" fill="#6a6e7a"/>
<rect x="178" y="60" width="4" height="50" fill="#9a9a9c"/>
  <path d="M-5 100L60 92 120 100 140 132H-5Z" fill="#a89c88" opacity="0.8"/>
  <path d="M20 120L70 100 110 110 90 132Z" fill="#8a8070" opacity="0.6"/>
  <path d="M107 90L145 88 150 108 112 106Z" fill="#6a6448" opacity="0.7"/>
  <path d="M150 70L165 68 200 132H175Z" fill="#5a5a58" opacity="0.6"/>
  <path d="M165 100L193 95V127H175Z" fill="#c8b088"/>
 </g>
</svg>
<!-- P9 taj arch -->
<svg class="ph" style="left:858px;top:792px" width="132" height="133" viewBox="0 0 132 133">
 <defs>
  <linearGradient id="p9sky" x1="0" y1="0" x2="0" y2="1"><stop offset="0" stop-color="#2a7ee6"/><stop offset="1" stop-color="#78b6f0"/></linearGradient>
  <filter id="bl9" x="-5%" y="-5%" width="110%" height="110%"><feGaussianBlur stdDeviation="0.8"/></filter>
 </defs>
 <rect width="132" height="133" fill="#130707"/>
 <g filter="url(#bl9)">
 <circle cx="66.0" cy="40.0" r="6.5" fill="#b04a22"/><circle cx="52.9" cy="45.2" r="6.5" fill="#b04a22"/><circle cx="41.1" cy="51.4" r="6.5" fill="#b04a22"/><circle cx="31.5" cy="59.0" r="6.5" fill="#b04a22"/><circle cx="24.1" cy="68.0" r="6.5" fill="#b04a22"/><circle cx="18.0" cy="78.0" r="6.5" fill="#b04a22"/><circle cx="79.1" cy="46.0" r="6.5" fill="#b04a22"/><circle cx="90.9" cy="53.0" r="6.5" fill="#b04a22"/><circle cx="100.5" cy="61.4" r="6.5" fill="#b04a22"/><circle cx="107.9" cy="71.2" r="6.5" fill="#b04a22"/><circle cx="114.0" cy="82.0" r="6.5" fill="#b04a22"/>
  <path d="M12 133V78L18 72 66 40 114 84 120 90V133Z" fill="#a8401e"/>
  <path d="M29 133V82Q32 58 67 45Q102 58 116 84V133Z" fill="url(#p9sky)"/>
  <rect x="12" y="70" width="17" height="63" fill="#c24e2a"/>
  <rect x="116" y="84" width="16" height="49" fill="#1a0a06"/>
  <path d="M30 133V112L38 108H85L90 112V133Z" fill="#e4ded0"/>
  <ellipse cx="62" cy="103" rx="12" ry="10" fill="#eeeae4"/>
  <rect x="96" y="92" width="6" height="41" fill="#e2dccc"/>
  <circle cx="44" cy="108" r="3" fill="#e8e4dc"/>
  <circle cx="80" cy="108" r="3" fill="#e8e4dc"/>
 </g>
 <path d="M5 5L60 70M127 5L72 70" stroke="#3a3030" stroke-width="0.6"/>
 <text x="28" y="101" font-family="Liberation Sans" font-size="16" fill="#3060a0" fill-opacity="0.6" textLength="90">shutterstock</text>
</svg>
<!-- P10 istanbul snow -->
<svg class="ph" style="left:991px;top:792px" width="256" height="133" viewBox="0 0 256 133">
 <defs>
  <linearGradient id="p10" x1="0" y1="0" x2="0" y2="1"><stop offset="0" stop-color="#9a9896"/><stop offset="1" stop-color="#7c7a78"/></linearGradient>
  <filter id="bl10" x="-5%" y="-5%" width="110%" height="110%"><feGaussianBlur stdDeviation="1.2"/></filter>
  <filter id="bl10b" x="-5%" y="-5%" width="110%" height="110%"><feGaussianBlur stdDeviation="3"/></filter>
 </defs>
 <rect x="-5" y="-5" width="266" height="143" fill="url(#p10)"/>
 <g filter="url(#bl10b)">
  <path d="M-5 -5H95V115H-5Z" fill="#7e7c7a"/>
  <path d="M95 -5H150V60L140 115 95 115Z" fill="#bdbdbb"/>
  <path d="M102 -5H145V40H102Z" fill="#e6e6e6"/>
  <path d="M150 -5H261V85H150Z" fill="#8a8884"/>
  <path d="M210 0H261V85H210Z" fill="#9a9892"/>
 </g>
 <g filter="url(#bl10)">
<rect x="29.4" y="46.8" width="4.0" height="9.1" fill="#b8b6b2" opacity="0.6"/>
<rect x="44.7" y="88.8" width="6.4" height="10.5" fill="#4a4846" opacity="0.6"/>
<rect x="92.0" y="22.1" width="6.8" height="6.9" fill="#b8b6b2" opacity="0.6"/>
<rect x="199.5" y="57.7" width="3.6" height="4.5" fill="#4a4846" opacity="0.6"/>
<rect x="234.3" y="83.6" width="7.7" height="3.4" fill="#6e6c68" opacity="0.6"/>
<rect x="181.9" y="2.8" width="4.8" height="9.8" fill="#5a5a58" opacity="0.6"/>
<rect x="81.9" y="72.1" width="6.8" height="3.5" fill="#4a4846" opacity="0.6"/>
<rect x="223.3" y="54.0" width="7.4" height="9.6" fill="#a8a6a2" opacity="0.6"/>
<rect x="255.2" y="0.2" width="3.2" height="10.1" fill="#5a5a58" opacity="0.6"/>
<rect x="86.6" y="37.4" width="4.7" height="10.4" fill="#6e6c68" opacity="0.6"/>
<rect x="61.6" y="5.9" width="2.9" height="8.8" fill="#4a4846" opacity="0.6"/>
<rect x="252.2" y="13.5" width="3.7" height="4.9" fill="#4a4846" opacity="0.6"/>
<rect x="232.2" y="38.3" width="7.3" height="10.0" fill="#b8b6b2" opacity="0.6"/>
<rect x="45.5" y="9.5" width="7.0" height="4.0" fill="#5a5a58" opacity="0.6"/>
<rect x="219.9" y="12.2" width="7.7" height="5.3" fill="#5a5a58" opacity="0.6"/>
<rect x="212.3" y="73.9" width="5.9" height="9.9" fill="#a8a6a2" opacity="0.6"/>
<rect x="103.1" y="79.3" width="6.7" height="5.6" fill="#4a4846" opacity="0.6"/>
<rect x="29.9" y="0.9" width="3.8" height="8.8" fill="#a8a6a2" opacity="0.6"/>
<rect x="88.6" y="58.1" width="2.4" height="8.0" fill="#a8a6a2" opacity="0.6"/>
<rect x="108.3" y="77.8" width="5.6" height="4.9" fill="#a8a6a2" opacity="0.6"/>
<rect x="214.5" y="7.5" width="3.4" height="7.0" fill="#a8a6a2" opacity="0.6"/>
<rect x="55.8" y="19.8" width="7.6" height="9.5" fill="#4a4846" opacity="0.6"/>
<rect x="118.7" y="85.4" width="7.1" height="6.3" fill="#6e6c68" opacity="0.6"/>
<rect x="231.2" y="114.0" width="4.9" height="10.0" fill="#b8b6b2" opacity="0.6"/>
<rect x="120.2" y="70.5" width="2.2" height="11.6" fill="#5a5a58" opacity="0.6"/>
<rect x="47.3" y="11.5" width="6.3" height="5.6" fill="#4a4846" opacity="0.6"/>
<rect x="15.7" y="56.7" width="3.2" height="4.9" fill="#b8b6b2" opacity="0.6"/>
<rect x="190.0" y="89.6" width="3.7" height="3.9" fill="#a8a6a2" opacity="0.6"/>
<rect x="232.6" y="53.3" width="3.2" height="7.4" fill="#a8a6a2" opacity="0.6"/>
<rect x="250.0" y="117.6" width="7.3" height="6.4" fill="#6e6c68" opacity="0.6"/>
<rect x="110.4" y="112.8" width="4.8" height="12.0" fill="#6e6c68" opacity="0.6"/>
<rect x="92.1" y="102.3" width="3.7" height="7.2" fill="#a8a6a2" opacity="0.6"/>
<rect x="206.6" y="35.7" width="3.5" height="10.3" fill="#5a5a58" opacity="0.6"/>
<rect x="3.7" y="75.5" width="2.9" height="3.2" fill="#5a5a58" opacity="0.6"/>
<rect x="0.5" y="118.0" width="6.8" height="6.2" fill="#a8a6a2" opacity="0.6"/>
<rect x="250.7" y="4.2" width="3.1" height="3.1" fill="#b8b6b2" opacity="0.6"/>
<rect x="231.5" y="100.3" width="5.6" height="10.3" fill="#b8b6b2" opacity="0.6"/>
<rect x="79.8" y="29.7" width="6.8" height="6.8" fill="#a8a6a2" opacity="0.6"/>
<rect x="86.9" y="3.5" width="2.2" height="12.0" fill="#6e6c68" opacity="0.6"/>
<rect x="233.6" y="97.0" width="3.5" height="4.2" fill="#b8b6b2" opacity="0.6"/>
<rect x="130.3" y="99.7" width="5.3" height="5.5" fill="#6e6c68" opacity="0.6"/>
<rect x="11.6" y="58.3" width="2.4" height="10.3" fill="#b8b6b2" opacity="0.6"/>
<rect x="119.7" y="79.9" width="7.6" height="10.3" fill="#4a4846" opacity="0.6"/>
<rect x="161.8" y="35.2" width="2.4" height="4.3" fill="#4a4846" opacity="0.6"/>
<rect x="26.0" y="92.9" width="4.7" height="5.5" fill="#a8a6a2" opacity="0.6"/>
<rect x="115.8" y="115.1" width="2.9" height="5.8" fill="#4a4846" opacity="0.6"/>
<rect x="9.7" y="58.3" width="3.4" height="7.1" fill="#4a4846" opacity="0.6"/>
<rect x="156.8" y="3.7" width="5.4" height="7.9" fill="#b8b6b2" opacity="0.6"/>
<rect x="32.1" y="94.3" width="6.5" height="5.4" fill="#b8b6b2" opacity="0.6"/>
<rect x="171.2" y="44.6" width="5.1" height="11.1" fill="#b8b6b2" opacity="0.6"/>
<rect x="49.9" y="110.5" width="3.1" height="6.4" fill="#b8b6b2" opacity="0.6"/>
<rect x="80.9" y="32.5" width="7.7" height="11.5" fill="#a8a6a2" opacity="0.6"/>
<rect x="156.3" y="66.6" width="2.2" height="6.8" fill="#b8b6b2" opacity="0.6"/>
<rect x="250.9" y="9.5" width="3.4" height="4.8" fill="#5a5a58" opacity="0.6"/>
<rect x="178.7" y="13.8" width="5.8" height="4.1" fill="#5a5a58" opacity="0.6"/>
<rect x="241.2" y="116.9" width="6.2" height="6.9" fill="#b8b6b2" opacity="0.6"/>
<rect x="38.4" y="84.7" width="6.1" height="7.2" fill="#b8b6b2" opacity="0.6"/>
<rect x="165.6" y="17.1" width="2.3" height="9.8" fill="#6e6c68" opacity="0.6"/>
<rect x="79.6" y="77.8" width="2.8" height="4.3" fill="#4a4846" opacity="0.6"/>
<rect x="246.0" y="64.2" width="4.3" height="4.0" fill="#b8b6b2" opacity="0.6"/>
<rect x="46.5" y="3.2" width="2.6" height="4.0" fill="#a8a6a2" opacity="0.6"/>
<rect x="32.5" y="42.3" width="7.5" height="3.7" fill="#6e6c68" opacity="0.6"/>
<rect x="1.9" y="44.5" width="2.9" height="7.3" fill="#5a5a58" opacity="0.6"/>
<rect x="90.7" y="114.1" width="4.9" height="9.3" fill="#a8a6a2" opacity="0.6"/>
<rect x="121.0" y="88.7" width="5.2" height="10.7" fill="#b8b6b2" opacity="0.6"/>
<rect x="145.6" y="55.7" width="5.2" height="7.0" fill="#4a4846" opacity="0.6"/>
<rect x="193.7" y="35.5" width="6.5" height="9.7" fill="#a8a6a2" opacity="0.6"/>
<rect x="246.6" y="100.8" width="3.0" height="5.4" fill="#6e6c68" opacity="0.6"/>
<rect x="33.4" y="72.4" width="2.3" height="8.5" fill="#6e6c68" opacity="0.6"/>
<rect x="29.3" y="1.7" width="7.2" height="10.1" fill="#4a4846" opacity="0.6"/>
<rect x="175.5" y="63.0" width="6.6" height="3.8" fill="#4a4846" opacity="0.6"/>
<rect x="148.7" y="39.1" width="5.5" height="5.0" fill="#b8b6b2" opacity="0.6"/>
<rect x="81.4" y="43.0" width="5.6" height="11.8" fill="#a8a6a2" opacity="0.6"/>
<rect x="220.7" y="100.2" width="3.7" height="11.8" fill="#a8a6a2" opacity="0.6"/>
<rect x="46.7" y="72.2" width="3.3" height="12.0" fill="#6e6c68" opacity="0.6"/>
<rect x="72.3" y="116.0" width="4.7" height="7.3" fill="#4a4846" opacity="0.6"/>
<rect x="201.9" y="21.1" width="5.7" height="7.7" fill="#4a4846" opacity="0.6"/>
<rect x="13.2" y="50.1" width="5.3" height="8.5" fill="#a8a6a2" opacity="0.6"/>
<rect x="15.2" y="102.5" width="4.3" height="11.8" fill="#a8a6a2" opacity="0.6"/>
<rect x="187.5" y="46.8" width="5.4" height="3.1" fill="#a8a6a2" opacity="0.6"/>
<rect x="95.4" y="78.2" width="7.3" height="8.3" fill="#6e6c68" opacity="0.6"/>
<rect x="82.8" y="0.0" width="2.4" height="3.0" fill="#5a5a58" opacity="0.6"/>
<rect x="53.5" y="52.2" width="3.2" height="3.3" fill="#a8a6a2" opacity="0.6"/>
<rect x="136.8" y="88.5" width="7.0" height="10.5" fill="#6e6c68" opacity="0.6"/>
<rect x="113.0" y="81.9" width="2.7" height="10.9" fill="#b8b6b2" opacity="0.6"/>
<rect x="57.6" y="16.7" width="3.8" height="8.0" fill="#5a5a58" opacity="0.6"/>
<rect x="210.8" y="71.9" width="2.5" height="3.3" fill="#a8a6a2" opacity="0.6"/>
<rect x="252.3" y="56.7" width="2.8" height="4.8" fill="#b8b6b2" opacity="0.6"/>
<rect x="150.0" y="114.0" width="3.8" height="5.6" fill="#5a5a58" opacity="0.6"/>
<rect x="16.5" y="105.3" width="6.5" height="5.9" fill="#5a5a58" opacity="0.6"/>
<rect x="83.0" y="109.5" width="5.8" height="3.8" fill="#a8a6a2" opacity="0.6"/>
<rect x="164.9" y="105.8" width="3.4" height="5.9" fill="#b8b6b2" opacity="0.6"/>
<rect x="245.3" y="6.2" width="5.1" height="11.1" fill="#4a4846" opacity="0.6"/>
<rect x="21.8" y="27.9" width="4.8" height="10.7" fill="#4a4846" opacity="0.6"/>
<rect x="116.7" y="115.3" width="3.4" height="8.2" fill="#a8a6a2" opacity="0.6"/>
<rect x="230.4" y="15.9" width="5.2" height="8.6" fill="#a8a6a2" opacity="0.6"/>
<rect x="80.6" y="103.2" width="5.5" height="9.5" fill="#4a4846" opacity="0.6"/>
<rect x="52.1" y="7.2" width="4.6" height="5.8" fill="#6e6c68" opacity="0.6"/>
<rect x="126.3" y="102.5" width="3.1" height="3.9" fill="#b8b6b2" opacity="0.6"/>
<rect x="30.7" y="109.6" width="4.4" height="4.9" fill="#6e6c68" opacity="0.6"/>
<rect x="193.2" y="39.2" width="3.5" height="10.9" fill="#5a5a58" opacity="0.6"/>
<rect x="60.6" y="44.0" width="3.3" height="5.6" fill="#a8a6a2" opacity="0.6"/>
<rect x="67.4" y="83.3" width="4.0" height="4.0" fill="#6e6c68" opacity="0.6"/>
<rect x="77.8" y="20.8" width="3.0" height="7.3" fill="#6e6c68" opacity="0.6"/>
<rect x="55.1" y="80.5" width="5.7" height="4.6" fill="#4a4846" opacity="0.6"/>
<rect x="153.0" y="75.4" width="4.7" height="3.5" fill="#4a4846" opacity="0.6"/>
<rect x="220.1" y="58.8" width="5.5" height="5.4" fill="#b8b6b2" opacity="0.6"/>
<rect x="175.5" y="26.6" width="6.9" height="11.9" fill="#a8a6a2" opacity="0.6"/>
<rect x="104.0" y="74.3" width="6.5" height="4.0" fill="#b8b6b2" opacity="0.6"/>
<rect x="86.8" y="87.9" width="5.5" height="4.0" fill="#4a4846" opacity="0.6"/>
<rect x="37.5" y="35.8" width="5.8" height="4.4" fill="#b8b6b2" opacity="0.6"/>
<rect x="88.9" y="76.2" width="5.7" height="9.3" fill="#4a4846" opacity="0.6"/>
<rect x="151.8" y="70.1" width="6.1" height="5.6" fill="#a8a6a2" opacity="0.6"/>
<rect x="253.0" y="100.3" width="6.5" height="5.6" fill="#5a5a58" opacity="0.6"/>
<rect x="195.6" y="50.7" width="4.2" height="4.6" fill="#a8a6a2" opacity="0.6"/>
<rect x="178.6" y="67.5" width="4.3" height="4.0" fill="#4a4846" opacity="0.6"/>
<rect x="41.5" y="109.8" width="4.9" height="7.9" fill="#b8b6b2" opacity="0.6"/>
<rect x="50.2" y="49.0" width="5.5" height="4.0" fill="#5a5a58" opacity="0.6"/>
<rect x="155.3" y="84.2" width="3.0" height="9.0" fill="#5a5a58" opacity="0.6"/>
<rect x="25.8" y="64.5" width="7.5" height="10.8" fill="#4a4846" opacity="0.6"/>
<rect x="80.8" y="32.9" width="4.9" height="9.2" fill="#6e6c68" opacity="0.6"/>
<rect x="241.0" y="14.1" width="7.7" height="7.3" fill="#b8b6b2" opacity="0.6"/>
<rect x="37.8" y="44.3" width="6.1" height="5.4" fill="#4a4846" opacity="0.6"/>
<rect x="242.5" y="80.0" width="3.5" height="5.3" fill="#a8a6a2" opacity="0.6"/>
<rect x="187.8" y="108.3" width="2.6" height="9.3" fill="#5a5a58" opacity="0.6"/>
<rect x="57.7" y="54.8" width="7.8" height="5.9" fill="#6e6c68" opacity="0.6"/>
<rect x="42.3" y="80.1" width="3.6" height="7.6" fill="#a8a6a2" opacity="0.6"/>
<rect x="230.4" y="52.9" width="4.6" height="8.1" fill="#4a4846" opacity="0.6"/>
<rect x="109.5" y="96.5" width="3.5" height="7.9" fill="#4a4846" opacity="0.6"/>
<rect x="230.7" y="18.5" width="2.2" height="6.9" fill="#5a5a58" opacity="0.6"/>
<rect x="54.1" y="91.0" width="5.0" height="11.6" fill="#a8a6a2" opacity="0.6"/>
<rect x="65.8" y="75.4" width="5.4" height="11.7" fill="#a8a6a2" opacity="0.6"/>
<rect x="51.9" y="19.0" width="7.9" height="9.7" fill="#b8b6b2" opacity="0.6"/>
<rect x="29.9" y="40.4" width="6.9" height="9.6" fill="#a8a6a2" opacity="0.6"/>
<rect x="35.0" y="75.0" width="7.3" height="4.2" fill="#5a5a58" opacity="0.6"/>
<rect x="178.7" y="75.5" width="5.1" height="9.4" fill="#4a4846" opacity="0.6"/>
<rect x="254.5" y="73.3" width="3.6" height="9.3" fill="#5a5a58" opacity="0.6"/>
<rect x="17.9" y="81.9" width="4.5" height="3.1" fill="#a8a6a2" opacity="0.6"/>
<rect x="248.6" y="12.2" width="6.8" height="6.5" fill="#4a4846" opacity="0.6"/>
  <path d="M-5 118H261V138H-5Z" fill="#7e7e7c"/>
  <path d="M105 40Q130 28 160 30 195 28 210 45 205 52 150 53 110 50Z" fill="#d8d8d6"/>
  <rect x="155" y="37" width="27" height="15" fill="#2a3a78"/>
  <rect x="112" y="40" width="17" height="7" fill="#1a1a1a"/>
  <rect x="135" y="55" width="75" height="8" fill="#5a1e1e"/>
  <rect x="142" y="63" width="64" height="40" fill="#8e8880"/>
  <rect x="150" y="80" width="50" height="20" fill="#5a4c3c"/>
  <rect x="146" y="103" width="59" height="30" fill="#8a1e26"/>
  <ellipse cx="10" cy="90.0" rx="3.6" ry="4.0" fill="#262626"/><path d="M3.6 94.0Q10.0 92.0 16.4 94.0L15.8 126.0H4.2Z" fill="#262626"/><ellipse cx="25" cy="95.4" rx="3.1" ry="3.4" fill="#3a3a3a"/><path d="M19.6 98.8Q25.0 97.1 30.4 98.8L29.9 126.0H20.1Z" fill="#3a3a3a"/><ellipse cx="38" cy="97.0" rx="2.7" ry="3.0" fill="#262626"/><path d="M33.2 100.0Q38.0 98.5 42.8 100.0L42.3 124.0H33.7Z" fill="#262626"/><ellipse cx="52" cy="97.8" rx="2.5" ry="2.8" fill="#333"/><path d="M47.5 100.6Q52.0 99.2 56.5 100.6L56.0 123.0H48.0Z" fill="#333"/><ellipse cx="64" cy="98.6" rx="2.3" ry="2.6" fill="#262626"/><path d="M59.8 101.2Q64.0 99.9 68.2 101.2L67.7 122.0H60.3Z" fill="#262626"/>
  <ellipse cx="212" cy="85.0" rx="4.5" ry="5.0" fill="#262626"/><path d="M204.0 90.0Q212.0 87.5 220.0 90.0L219.2 130.0H204.8Z" fill="#262626"/><ellipse cx="228" cy="89.6" rx="4.1" ry="4.6" fill="#2a2a2a"/><path d="M220.6 94.2Q228.0 91.9 235.4 94.2L234.6 131.0H221.4Z" fill="#2a2a2a"/><ellipse cx="242" cy="87.0" rx="4.5" ry="5.0" fill="#303030"/><path d="M234.0 92.0Q242.0 89.5 250.0 92.0L249.2 132.0H234.8Z" fill="#303030"/>
  <rect x="85" y="84" width="23" height="31" fill="#7a2a2a"/>
  <ellipse cx="135" cy="91.4" rx="3.1" ry="3.4" fill="#2e2e2e"/><path d="M129.6 94.8Q135.0 93.1 140.4 94.8L139.9 122.0H130.1Z" fill="#2e2e2e"/>
 </g>
 <circle cx="160" cy="127" r="8" fill="none" stroke="#d8d0d0" stroke-width="1.5"/>
 <circle cx="191" cy="127" r="8" fill="none" stroke="#d8d0d0" stroke-width="1.5"/>
<circle cx="60.9" cy="72.4" r="0.6" fill="#f0f0f0" opacity="0.8"/>
<circle cx="154.6" cy="83.2" r="0.4" fill="#f0f0f0" opacity="0.8"/>
<circle cx="3.4" cy="111.4" r="0.6" fill="#f0f0f0" opacity="0.8"/>
<circle cx="60.0" cy="132.4" r="0.7" fill="#f0f0f0" opacity="0.8"/>
<circle cx="214.1" cy="63.4" r="0.8" fill="#f0f0f0" opacity="0.8"/>
<circle cx="38.6" cy="84.4" r="0.9" fill="#f0f0f0" opacity="0.8"/>
<circle cx="133.9" cy="98.6" r="0.8" fill="#f0f0f0" opacity="0.8"/>
<circle cx="16.4" cy="100.8" r="0.8" fill="#f0f0f0" opacity="0.8"/>
<circle cx="77.1" cy="4.1" r="0.9" fill="#f0f0f0" opacity="0.8"/>
<circle cx="121.0" cy="95.6" r="0.9" fill="#f0f0f0" opacity="0.8"/>
<circle cx="182.8" cy="122.5" r="0.6" fill="#f0f0f0" opacity="0.8"/>
<circle cx="205.0" cy="59.1" r="1.0" fill="#f0f0f0" opacity="0.8"/>
<circle cx="225.0" cy="13.0" r="0.5" fill="#f0f0f0" opacity="0.8"/>
<circle cx="55.5" cy="128.4" r="0.7" fill="#f0f0f0" opacity="0.8"/>
<circle cx="160.4" cy="40.0" r="0.7" fill="#f0f0f0" opacity="0.8"/>
<circle cx="98.8" cy="46.7" r="0.8" fill="#f0f0f0" opacity="0.8"/>
<circle cx="149.6" cy="120.3" r="0.8" fill="#f0f0f0" opacity="0.8"/>
<circle cx="237.8" cy="113.9" r="1.0" fill="#f0f0f0" opacity="0.8"/>
<circle cx="171.8" cy="21.7" r="0.9" fill="#f0f0f0" opacity="0.8"/>
<circle cx="246.9" cy="120.3" r="0.7" fill="#f0f0f0" opacity="0.8"/>
<circle cx="182.7" cy="28.1" r="0.9" fill="#f0f0f0" opacity="0.8"/>
<circle cx="146.8" cy="37.9" r="0.4" fill="#f0f0f0" opacity="0.8"/>
<circle cx="218.6" cy="131.6" r="0.5" fill="#f0f0f0" opacity="0.8"/>
<circle cx="205.0" cy="54.6" r="0.5" fill="#f0f0f0" opacity="0.8"/>
<circle cx="75.2" cy="102.2" r="0.9" fill="#f0f0f0" opacity="0.8"/>
<circle cx="11.3" cy="81.7" r="0.4" fill="#f0f0f0" opacity="0.8"/>
<circle cx="183.9" cy="44.0" r="0.9" fill="#f0f0f0" opacity="0.8"/>
<circle cx="251.0" cy="67.2" r="1.0" fill="#f0f0f0" opacity="0.8"/>
<circle cx="79.3" cy="10.2" r="0.8" fill="#f0f0f0" opacity="0.8"/>
<circle cx="8.0" cy="26.3" r="0.6" fill="#f0f0f0" opacity="0.8"/>
<circle cx="156.3" cy="20.8" r="0.4" fill="#f0f0f0" opacity="0.8"/>
<circle cx="222.2" cy="41.7" r="1.0" fill="#f0f0f0" opacity="0.8"/>
<circle cx="229.5" cy="50.2" r="0.7" fill="#f0f0f0" opacity="0.8"/>
<circle cx="133.1" cy="85.6" r="0.8" fill="#f0f0f0" opacity="0.8"/>
<circle cx="143.2" cy="82.5" r="1.0" fill="#f0f0f0" opacity="0.8"/>
<circle cx="129.8" cy="57.3" r="0.8" fill="#f0f0f0" opacity="0.8"/>
<circle cx="60.8" cy="40.0" r="1.0" fill="#f0f0f0" opacity="0.8"/>
<circle cx="133.4" cy="72.9" r="0.4" fill="#f0f0f0" opacity="0.8"/>
<circle cx="106.3" cy="77.1" r="0.4" fill="#f0f0f0" opacity="0.8"/>
<circle cx="157.6" cy="84.1" r="0.4" fill="#f0f0f0" opacity="0.8"/>
<circle cx="160.6" cy="62.0" r="0.8" fill="#f0f0f0" opacity="0.8"/>
<circle cx="90.3" cy="94.0" r="0.8" fill="#f0f0f0" opacity="0.8"/>
<circle cx="5.7" cy="8.1" r="0.8" fill="#f0f0f0" opacity="0.8"/>
<circle cx="246.6" cy="33.4" r="0.7" fill="#f0f0f0" opacity="0.8"/>
<circle cx="151.7" cy="42.6" r="0.6" fill="#f0f0f0" opacity="0.8"/>
<circle cx="80.0" cy="49.1" r="0.8" fill="#f0f0f0" opacity="0.8"/>
<circle cx="76.9" cy="50.2" r="0.9" fill="#f0f0f0" opacity="0.8"/>
<circle cx="6.9" cy="75.7" r="0.8" fill="#f0f0f0" opacity="0.8"/>
<circle cx="79.4" cy="29.6" r="0.9" fill="#f0f0f0" opacity="0.8"/>
<circle cx="61.1" cy="24.9" r="0.7" fill="#f0f0f0" opacity="0.8"/>
<circle cx="178.7" cy="13.5" r="0.6" fill="#f0f0f0" opacity="0.8"/>
<circle cx="85.4" cy="110.9" r="0.7" fill="#f0f0f0" opacity="0.8"/>
<circle cx="219.0" cy="22.5" r="0.6" fill="#f0f0f0" opacity="0.8"/>
<circle cx="166.5" cy="117.7" r="0.7" fill="#f0f0f0" opacity="0.8"/>
<circle cx="57.6" cy="16.1" r="0.7" fill="#f0f0f0" opacity="0.8"/>
<circle cx="48.8" cy="107.3" r="0.9" fill="#f0f0f0" opacity="0.8"/>
<circle cx="47.0" cy="37.1" r="0.9" fill="#f0f0f0" opacity="0.8"/>
<circle cx="164.3" cy="107.2" r="0.6" fill="#f0f0f0" opacity="0.8"/>
<circle cx="33.2" cy="38.8" r="0.9" fill="#f0f0f0" opacity="0.8"/>
<circle cx="69.4" cy="46.1" r="0.7" fill="#f0f0f0" opacity="0.8"/>
<circle cx="107.5" cy="54.5" r="1.0" fill="#f0f0f0" opacity="0.8"/>
<circle cx="39.9" cy="0.6" r="1.0" fill="#f0f0f0" opacity="0.8"/>
<circle cx="225.3" cy="131.3" r="0.7" fill="#f0f0f0" opacity="0.8"/>
<circle cx="243.2" cy="123.3" r="0.5" fill="#f0f0f0" opacity="0.8"/>
<circle cx="190.9" cy="111.3" r="0.8" fill="#f0f0f0" opacity="0.8"/>
<circle cx="132.9" cy="38.4" r="0.6" fill="#f0f0f0" opacity="0.8"/>
<circle cx="58.2" cy="9.1" r="0.8" fill="#f0f0f0" opacity="0.8"/>
<circle cx="73.5" cy="107.8" r="0.4" fill="#f0f0f0" opacity="0.8"/>
<circle cx="231.3" cy="92.3" r="1.0" fill="#f0f0f0" opacity="0.8"/>
<circle cx="229.5" cy="119.7" r="0.7" fill="#f0f0f0" opacity="0.8"/>
<circle cx="3.4" cy="99.1" r="0.5" fill="#f0f0f0" opacity="0.8"/>
<circle cx="76.8" cy="88.2" r="0.7" fill="#f0f0f0" opacity="0.8"/>
<circle cx="105.9" cy="124.9" r="0.8" fill="#f0f0f0" opacity="0.8"/>
<circle cx="87.4" cy="33.6" r="0.9" fill="#f0f0f0" opacity="0.8"/>
<circle cx="122.2" cy="104.0" r="0.6" fill="#f0f0f0" opacity="0.8"/>
<circle cx="50.5" cy="71.1" r="0.9" fill="#f0f0f0" opacity="0.8"/>
<circle cx="43.9" cy="105.3" r="1.0" fill="#f0f0f0" opacity="0.8"/>
<circle cx="206.3" cy="109.5" r="0.4" fill="#f0f0f0" opacity="0.8"/>
<circle cx="160.9" cy="114.7" r="0.4" fill="#f0f0f0" opacity="0.8"/>
<circle cx="69.5" cy="35.7" r="0.7" fill="#f0f0f0" opacity="0.8"/>
<circle cx="108.3" cy="62.9" r="0.9" fill="#f0f0f0" opacity="0.8"/>
<circle cx="0.5" cy="7.3" r="0.5" fill="#f0f0f0" opacity="0.8"/>
<circle cx="31.9" cy="9.1" r="1.0" fill="#f0f0f0" opacity="0.8"/>
<circle cx="218.7" cy="11.5" r="0.7" fill="#f0f0f0" opacity="0.8"/>
<circle cx="80.9" cy="41.8" r="0.6" fill="#f0f0f0" opacity="0.8"/>
<circle cx="165.6" cy="78.0" r="0.6" fill="#f0f0f0" opacity="0.8"/>
<circle cx="48.9" cy="43.7" r="0.5" fill="#f0f0f0" opacity="0.8"/>
<circle cx="142.2" cy="95.2" r="0.6" fill="#f0f0f0" opacity="0.8"/>
<circle cx="20.5" cy="23.7" r="0.6" fill="#f0f0f0" opacity="0.8"/>
<circle cx="154.7" cy="104.1" r="0.6" fill="#f0f0f0" opacity="0.8"/>
<circle cx="205.1" cy="82.8" r="0.7" fill="#f0f0f0" opacity="0.8"/>
<circle cx="95.3" cy="66.0" r="0.8" fill="#f0f0f0" opacity="0.8"/>
<circle cx="107.7" cy="92.3" r="0.7" fill="#f0f0f0" opacity="0.8"/>
<circle cx="62.7" cy="71.3" r="0.8" fill="#f0f0f0" opacity="0.8"/>
<circle cx="18.3" cy="56.5" r="0.7" fill="#f0f0f0" opacity="0.8"/>
<circle cx="225.2" cy="124.6" r="0.6" fill="#f0f0f0" opacity="0.8"/>
<circle cx="229.9" cy="105.2" r="0.6" fill="#f0f0f0" opacity="0.8"/>
<circle cx="118.8" cy="16.4" r="0.9" fill="#f0f0f0" opacity="0.8"/>
<circle cx="169.5" cy="118.0" r="0.9" fill="#f0f0f0" opacity="0.8"/>
<circle cx="170.9" cy="97.6" r="0.7" fill="#f0f0f0" opacity="0.8"/>
<circle cx="26.4" cy="78.2" r="0.4" fill="#f0f0f0" opacity="0.8"/>
<circle cx="36.7" cy="103.0" r="0.4" fill="#f0f0f0" opacity="0.8"/>
<circle cx="23.5" cy="13.2" r="0.9" fill="#f0f0f0" opacity="0.8"/>
<circle cx="45.9" cy="3.1" r="0.9" fill="#f0f0f0" opacity="0.8"/>
<circle cx="31.0" cy="112.2" r="0.8" fill="#f0f0f0" opacity="0.8"/>
<circle cx="214.1" cy="126.7" r="0.7" fill="#f0f0f0" opacity="0.8"/>
<circle cx="204.5" cy="4.8" r="0.9" fill="#f0f0f0" opacity="0.8"/>
<circle cx="130.9" cy="95.1" r="0.5" fill="#f0f0f0" opacity="0.8"/>
<circle cx="191.7" cy="124.3" r="0.4" fill="#f0f0f0" opacity="0.8"/>
<circle cx="83.0" cy="75.0" r="0.9" fill="#f0f0f0" opacity="0.8"/>
<circle cx="62.0" cy="23.9" r="0.5" fill="#f0f0f0" opacity="0.8"/>
<circle cx="157.7" cy="100.2" r="0.6" fill="#f0f0f0" opacity="0.8"/>
<circle cx="94.1" cy="52.8" r="0.6" fill="#f0f0f0" opacity="0.8"/>
<circle cx="107.1" cy="11.1" r="0.7" fill="#f0f0f0" opacity="0.8"/>
<circle cx="249.1" cy="54.9" r="0.8" fill="#f0f0f0" opacity="0.8"/>
<circle cx="41.1" cy="91.9" r="0.9" fill="#f0f0f0" opacity="0.8"/>
<circle cx="172.5" cy="68.8" r="0.7" fill="#f0f0f0" opacity="0.8"/>
<circle cx="164.6" cy="119.4" r="0.5" fill="#f0f0f0" opacity="0.8"/>
<circle cx="24.5" cy="99.5" r="0.9" fill="#f0f0f0" opacity="0.8"/>
<circle cx="132.4" cy="58.9" r="0.8" fill="#f0f0f0" opacity="0.8"/>
<circle cx="47.6" cy="35.6" r="0.5" fill="#f0f0f0" opacity="0.8"/>
<circle cx="149.9" cy="41.9" r="0.5" fill="#f0f0f0" opacity="0.8"/>
<circle cx="176.9" cy="126.8" r="0.6" fill="#f0f0f0" opacity="0.8"/>
<circle cx="180.6" cy="55.0" r="0.9" fill="#f0f0f0" opacity="0.8"/>
<circle cx="149.7" cy="35.5" r="0.5" fill="#f0f0f0" opacity="0.8"/>
<circle cx="5.9" cy="63.8" r="0.6" fill="#f0f0f0" opacity="0.8"/>
<circle cx="44.1" cy="47.9" r="0.6" fill="#f0f0f0" opacity="0.8"/>
<circle cx="198.2" cy="19.1" r="1.0" fill="#f0f0f0" opacity="0.8"/>
<circle cx="122.8" cy="79.7" r="0.7" fill="#f0f0f0" opacity="0.8"/>
<circle cx="213.7" cy="109.3" r="0.7" fill="#f0f0f0" opacity="0.8"/>
<circle cx="123.2" cy="95.9" r="0.9" fill="#f0f0f0" opacity="0.8"/>
<circle cx="102.5" cy="97.6" r="1.0" fill="#f0f0f0" opacity="0.8"/>
<circle cx="119.7" cy="30.5" r="0.5" fill="#f0f0f0" opacity="0.8"/>
<circle cx="183.7" cy="89.8" r="1.0" fill="#f0f0f0" opacity="0.8"/>
<circle cx="218.6" cy="32.2" r="0.5" fill="#f0f0f0" opacity="0.8"/>
<circle cx="66.2" cy="24.9" r="0.8" fill="#f0f0f0" opacity="0.8"/>
<circle cx="219.8" cy="119.7" r="0.6" fill="#f0f0f0" opacity="0.8"/>
<circle cx="221.5" cy="41.7" r="0.7" fill="#f0f0f0" opacity="0.8"/>
<circle cx="186.6" cy="11.4" r="0.5" fill="#f0f0f0" opacity="0.8"/>
<circle cx="213.5" cy="38.8" r="0.6" fill="#f0f0f0" opacity="0.8"/>
<circle cx="148.6" cy="89.8" r="0.4" fill="#f0f0f0" opacity="0.8"/>
<circle cx="85.7" cy="58.0" r="0.7" fill="#f0f0f0" opacity="0.8"/>
<circle cx="53.8" cy="77.8" r="1.0" fill="#f0f0f0" opacity="0.8"/>
<circle cx="100.1" cy="72.4" r="0.5" fill="#f0f0f0" opacity="0.8"/>
<circle cx="70.3" cy="88.5" r="0.5" fill="#f0f0f0" opacity="0.8"/>
<circle cx="227.1" cy="120.9" r="0.5" fill="#f0f0f0" opacity="0.8"/>
<circle cx="241.0" cy="49.8" r="0.9" fill="#f0f0f0" opacity="0.8"/>
<circle cx="193.9" cy="39.3" r="0.8" fill="#f0f0f0" opacity="0.8"/>
<circle cx="167.4" cy="107.2" r="0.6" fill="#f0f0f0" opacity="0.8"/>
<circle cx="193.1" cy="127.9" r="0.8" fill="#f0f0f0" opacity="0.8"/>
<circle cx="137.3" cy="15.1" r="0.7" fill="#f0f0f0" opacity="0.8"/>
<circle cx="90.2" cy="95.5" r="0.8" fill="#f0f0f0" opacity="0.8"/>
<circle cx="145.0" cy="24.2" r="0.8" fill="#f0f0f0" opacity="0.8"/>
<circle cx="161.5" cy="23.8" r="0.9" fill="#f0f0f0" opacity="0.8"/>
<circle cx="167.8" cy="16.4" r="1.0" fill="#f0f0f0" opacity="0.8"/>
<circle cx="36.2" cy="44.1" r="0.8" fill="#f0f0f0" opacity="0.8"/>
<circle cx="152.9" cy="73.8" r="0.8" fill="#f0f0f0" opacity="0.8"/>
<circle cx="117.2" cy="41.6" r="0.5" fill="#f0f0f0" opacity="0.8"/>
<circle cx="17.6" cy="95.2" r="0.9" fill="#f0f0f0" opacity="0.8"/>
<circle cx="139.0" cy="98.4" r="0.6" fill="#f0f0f0" opacity="0.8"/>
<circle cx="68.1" cy="51.0" r="0.9" fill="#f0f0f0" opacity="0.8"/>
<circle cx="10.8" cy="67.1" r="0.5" fill="#f0f0f0" opacity="0.8"/>
<circle cx="196.8" cy="47.1" r="0.6" fill="#f0f0f0" opacity="0.8"/>
<circle cx="103.3" cy="72.0" r="0.9" fill="#f0f0f0" opacity="0.8"/>
<circle cx="90.3" cy="112.6" r="0.5" fill="#f0f0f0" opacity="0.8"/>
<circle cx="69.2" cy="13.3" r="0.5" fill="#f0f0f0" opacity="0.8"/>
<circle cx="199.4" cy="96.7" r="0.5" fill="#f0f0f0" opacity="0.8"/>
<circle cx="48.4" cy="55.4" r="0.8" fill="#f0f0f0" opacity="0.8"/>
<circle cx="208.8" cy="99.6" r="0.8" fill="#f0f0f0" opacity="0.8"/>
<circle cx="37.5" cy="53.0" r="0.5" fill="#f0f0f0" opacity="0.8"/>
<circle cx="135.1" cy="75.6" r="0.5" fill="#f0f0f0" opacity="0.8"/>
<circle cx="64.0" cy="104.0" r="0.4" fill="#f0f0f0" opacity="0.8"/>
<circle cx="205.6" cy="118.5" r="1.0" fill="#f0f0f0" opacity="0.8"/>
<circle cx="98.1" cy="73.5" r="0.7" fill="#f0f0f0" opacity="0.8"/>
<circle cx="162.2" cy="129.9" r="0.8" fill="#f0f0f0" opacity="0.8"/>
<circle cx="76.6" cy="114.4" r="0.7" fill="#f0f0f0" opacity="0.8"/>
<circle cx="153.9" cy="96.7" r="0.4" fill="#f0f0f0" opacity="0.8"/>
<circle cx="197.2" cy="88.0" r="0.7" fill="#f0f0f0" opacity="0.8"/>
<circle cx="134.1" cy="61.3" r="0.5" fill="#f0f0f0" opacity="0.8"/>
<circle cx="135.6" cy="4.9" r="0.7" fill="#f0f0f0" opacity="0.8"/>
<circle cx="165.4" cy="59.1" r="0.7" fill="#f0f0f0" opacity="0.8"/>
<circle cx="245.5" cy="118.6" r="0.5" fill="#f0f0f0" opacity="0.8"/>
<circle cx="202.8" cy="82.9" r="0.4" fill="#f0f0f0" opacity="0.8"/>
<circle cx="92.1" cy="31.0" r="0.4" fill="#f0f0f0" opacity="0.8"/>
<circle cx="138.0" cy="123.7" r="0.6" fill="#f0f0f0" opacity="0.8"/>
<circle cx="222.9" cy="92.4" r="0.5" fill="#f0f0f0" opacity="0.8"/>
<circle cx="219.7" cy="79.9" r="1.0" fill="#f0f0f0" opacity="0.8"/>
<circle cx="183.3" cy="98.4" r="0.6" fill="#f0f0f0" opacity="0.8"/>
<circle cx="206.5" cy="123.9" r="0.9" fill="#f0f0f0" opacity="0.8"/>
<circle cx="111.9" cy="100.7" r="0.7" fill="#f0f0f0" opacity="0.8"/>
<circle cx="27.9" cy="5.7" r="0.4" fill="#f0f0f0" opacity="0.8"/>
<circle cx="51.3" cy="21.4" r="0.7" fill="#f0f0f0" opacity="0.8"/>
<circle cx="179.0" cy="71.5" r="0.7" fill="#f0f0f0" opacity="0.8"/>
<circle cx="166.2" cy="40.5" r="0.7" fill="#f0f0f0" opacity="0.8"/>
<circle cx="193.8" cy="53.4" r="0.5" fill="#f0f0f0" opacity="0.8"/>
<circle cx="230.2" cy="95.7" r="0.6" fill="#f0f0f0" opacity="0.8"/>
<circle cx="95.0" cy="70.4" r="0.8" fill="#f0f0f0" opacity="0.8"/>
<circle cx="57.3" cy="0.4" r="0.5" fill="#f0f0f0" opacity="0.8"/>
<circle cx="200.5" cy="19.1" r="0.7" fill="#f0f0f0" opacity="0.8"/>
<circle cx="50.0" cy="27.8" r="0.5" fill="#f0f0f0" opacity="0.8"/>
<circle cx="103.4" cy="22.4" r="0.4" fill="#f0f0f0" opacity="0.8"/>
<circle cx="28.2" cy="22.4" r="0.7" fill="#f0f0f0" opacity="0.8"/>
<circle cx="15.3" cy="3.0" r="0.7" fill="#f0f0f0" opacity="0.8"/>
<circle cx="104.4" cy="93.6" r="0.4" fill="#f0f0f0" opacity="0.8"/>
<circle cx="103.2" cy="52.7" r="0.4" fill="#f0f0f0" opacity="0.8"/>
<circle cx="247.2" cy="29.1" r="0.5" fill="#f0f0f0" opacity="0.8"/>
<circle cx="121.5" cy="21.9" r="0.8" fill="#f0f0f0" opacity="0.8"/>
<circle cx="88.7" cy="16.5" r="0.4" fill="#f0f0f0" opacity="0.8"/>
<circle cx="186.3" cy="36.6" r="0.9" fill="#f0f0f0" opacity="0.8"/>
<circle cx="119.1" cy="124.1" r="0.6" fill="#f0f0f0" opacity="0.8"/>
<circle cx="64.0" cy="35.4" r="0.9" fill="#f0f0f0" opacity="0.8"/>
<circle cx="161.1" cy="45.9" r="0.5" fill="#f0f0f0" opacity="0.8"/>
<circle cx="174.7" cy="128.9" r="0.8" fill="#f0f0f0" opacity="0.8"/>
<circle cx="0.9" cy="4.0" r="0.5" fill="#f0f0f0" opacity="0.8"/>
<circle cx="43.6" cy="4.9" r="0.4" fill="#f0f0f0" opacity="0.8"/>
<circle cx="167.5" cy="119.7" r="0.5" fill="#f0f0f0" opacity="0.8"/>
<circle cx="249.3" cy="63.4" r="0.9" fill="#f0f0f0" opacity="0.8"/>
<circle cx="234.8" cy="125.0" r="0.4" fill="#f0f0f0" opacity="0.8"/>
<circle cx="78.0" cy="80.7" r="1.0" fill="#f0f0f0" opacity="0.8"/>
<circle cx="22.5" cy="39.0" r="0.9" fill="#f0f0f0" opacity="0.8"/>
 <text x="60" y="96" font-family="Liberation Sans" font-size="26" fill="#b0b0b0" fill-opacity="0.45" textLength="150">shutterstock</text>
</svg>

<!-- scrollbar -->
<div class="a" style="left:1250px;top:105px;width:16px;height:821px;background:#f0f0f0;border-right:1px solid #c8c8c8;border-bottom:1px solid #c8c8c8;border-top:1px solid #c8c8c8"></div>
<div class="a" style="left:1251px;top:137px;width:13px;height:173px;background:#cdcdcd"></div>
<svg style="left:1240px;top:110px" width="30" height="810" viewBox="1240 110 30 810">
 <path d="M1252.5 129l5-6 5 6" fill="none" stroke="#555" stroke-width="2.1"/>
 <path d="M1252.5 901.5l5 6 5-6" fill="none" stroke="#555" stroke-width="2.1"/>
</svg>

<!-- ===== bottom lines + status bar ===== -->
<div class="a" style="left:1px;top:936px;width:1279px;height:1px;background:#c6c6c6"></div>
<div class="a" style="left:1px;top:938px;width:1279px;height:2px;background:#d4d4d4"></div>
<div class="a" style="left:1px;top:940px;width:1279px;height:19px;background:#f0f0f0;border-top:1px solid #fafafa"></div>
<div class="a" style="left:0;top:959px;width:1280px;height:1px;background:#808080"></div>
<div class="a" style="left:1279px;top:0;width:1px;height:960px;background:#7e7e7e"></div>
<div class="a" style="left:1279px;top:0;width:1px;height:68px;background:#b07a6a"></div>
<div class="a" style="left:1278px;top:68px;width:1px;height:870px;background:#eeeeee"></div>

<div class="t st" style="left:8px;transform:scaleX(0.97)">Slide 1 of 1</div>
<svg style="left:75px;top:938px" width="22" height="20" viewBox="75 938 22 20">
 <path d="M79.5 942.5h4.5l1 1 1-1h4v10h-4l-1 1-1-1h-4.5z" fill="none" stroke="#666" stroke-width="1"/>
 <path d="M86 948l2 2.5 3.5-5" fill="none" stroke="#666" stroke-width="1.1"/>
</svg>
<div class="t st" style="left:108px;transform:scaleX(0.967)">English (United States)</div>
<div class="t st" style="left:815px;transform:scaleX(0.98)">Notes</div>
<div class="t st" style="left:878px;transform:scaleX(0.96)">Comments</div>
<div class="a" style="left:945px;top:940px;width:35px;height:19px;background:#c6c6c6"></div>
<div class="t st" style="left:1217px;transform:scaleX(0.93)">60%</div>
<svg style="left:780px;top:936px" width="500" height="24" viewBox="780 936 500 24">
 <g fill="none" stroke="#666" stroke-width="1">
  <path d="M800 948.5h11M800 951.5h11M800 954.5h11"/>
 </g>
 <path d="M802.5 946.3h6l-3-3z" fill="#666"/>
 <path d="M862 943h12.5v8.3h-7l-2.5 3.2v-3.2h-3z" fill="#6e6e6e"/>
 <g fill="none" stroke="#666" stroke-width="1.1">
  <rect x="956.5" y="942.5" width="12.5" height="11.5" rx="0.5"/>
  <path d="M959 942.5v11.5M959 951h10"/>
  <rect x="961.5" y="945.5" width="4" height="2"/>
  <rect x="992" y="943" width="5" height="4" rx="1"/>
  <rect x="999.5" y="943" width="5" height="4" rx="1"/>
  <rect x="992" y="950" width="5" height="4" rx="1"/>
  <rect x="999.5" y="950" width="5" height="4" rx="1"/>
  <path d="M1027 942.5h5.5l0.5 1 0.5-1h5.5v11h-5.5l-0.5 1-0.5-1h-5.5z"/>
  <path d="M1029 945h3M1029 947.5h3M1029 950h3M1034 945h3M1034 947.5h3M1034 950h3" stroke-width="0.8"/>
  <rect x="1063.5" y="944.5" width="10" height="6"/>
  <path d="M1068.5 950.5v3M1065.5 954.5h6"/>
  <rect x="1250.5" y="943" width="12" height="12"/>
  <path d="M1253 945.5l2 2M1260 945.5l-2 2M1253 952.5l2-2M1260 952.5l-2 2" stroke-width="0.9"/>
 </g>
 <path d="M1062.5 943.5h12" stroke="#555" stroke-width="1.8"/>
 <path d="M1091 948.7h5.5" stroke="#555" stroke-width="1.5"/>
 <path d="M1100 948.3h93" stroke="#a8a8a8" stroke-width="1"/>
 <path d="M1146.7 946v5" stroke="#a8a8a8" stroke-width="1"/>
 <rect x="1125" y="943" width="4" height="10.5" fill="#5a5a5a"/>
 <path d="M1197 948.7h7M1200.5 945.2v7" stroke="#555" stroke-width="1.5"/>
</svg>
</body></html>
